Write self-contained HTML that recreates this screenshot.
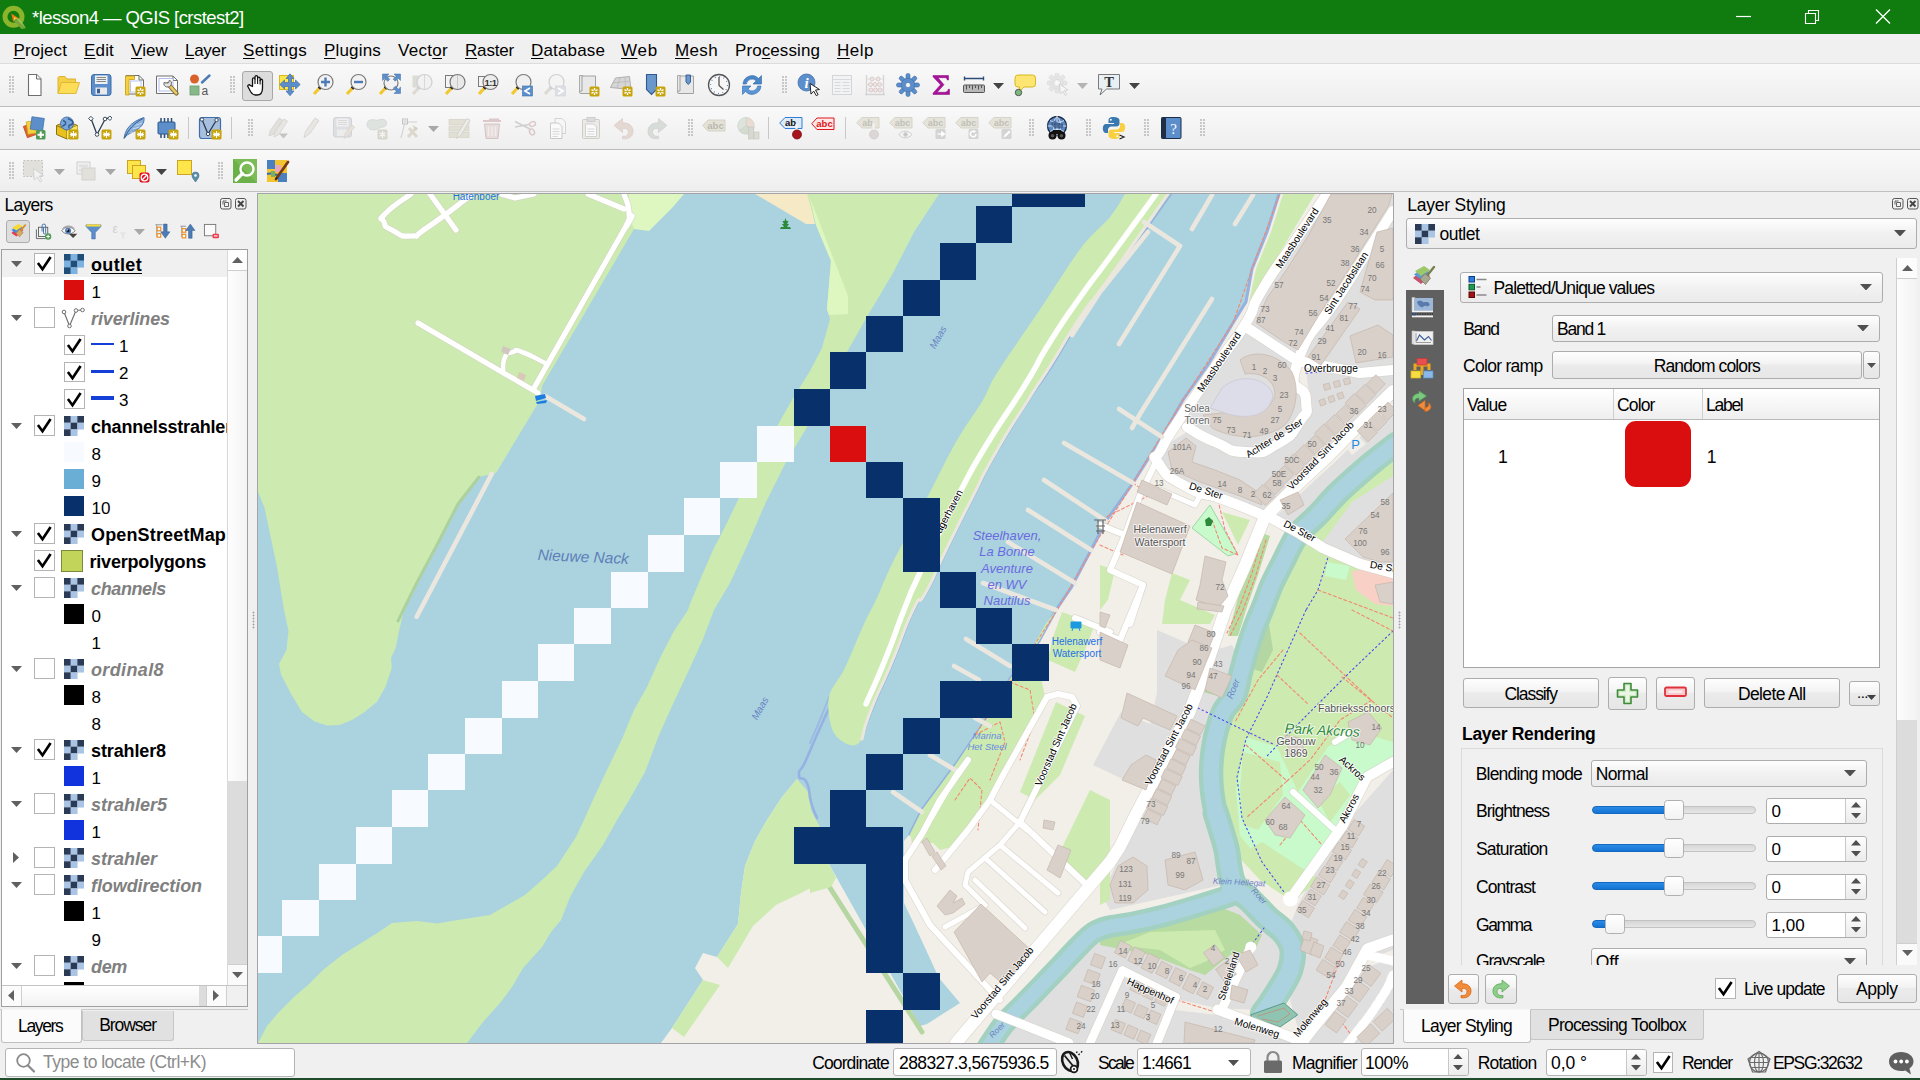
<!DOCTYPE html>
<html lang="en"><head><meta charset="utf-8"><title>*lesson4 — QGIS [crstest2]</title><style>
html,body{margin:0;padding:0;}
body{width:1920px;height:1080px;overflow:hidden;background:#f0f0f0;font-family:"Liberation Sans",sans-serif;position:relative;}
.b{position:absolute;display:block;}
.t{position:absolute;white-space:nowrap;line-height:1;}
svg text{font-family:"Liberation Sans",sans-serif;}
u{text-decoration-thickness:1px;text-underline-offset:2px;}
</style></head><body>
<div class="b " style="left:0px;top:0px;width:1920px;height:34px;background:#107c10;"></div>
<svg class="b" style="left:0;top:0" width="30" height="34" viewBox="0 0 30 34">
<circle cx="13.500" cy="16.700" r="8.500" fill="none" stroke="#8cb52c" stroke-width="4.900"/>
<path d="M14.500 17 L25.800 28.300 L21.500 29 L12.800 19.500 Z" fill="#7aa63c"/>
<path d="M16 18.500 L25.800 28.300 L24 25 L18.500 18 Z" fill="#9cc45c"/>
<path d="M11.300 13.600 L18.800 18.200 L15 18.800 L13.300 22.200 Z" fill="#ee7913"/>
<path d="M14 17.200 L17.500 18.500 L15 18.800 L14.200 20.400 Z" fill="#f4e24a"/>
</svg>
<span class="t" style="left:32px;top:7px;font-size:18.5px;line-height:21px;color:#fff;letter-spacing:-0.565px;">*lesson4 — QGIS [crstest2]</span>
<svg class="b" style="left:1720px;top:0" width="200" height="34" viewBox="1720 0 200 34">
<path d="M1736 16.5h15" stroke="#fff" stroke-width="1.2" fill="none"/>
<path d="M1805.5 13.5h10v10h-10z M1808.500 13.500v-3h10v10h-3" stroke="#fff" stroke-width="1.1" fill="none"/>
<path d="M1876 9.500l14 14M1890 9.500l-14 14" stroke="#fff" stroke-width="1.3" fill="none"/>
</svg>
<div class="b " style="left:0px;top:34px;width:1920px;height:30px;background:#f0f0f0;"></div>
<div class="b " style="left:0px;top:63px;width:1920px;height:1px;background:#dcdcdc;"></div>
<span class="t" style="left:13.5px;top:41px;font-size:17px;line-height:19px;color:#000;letter-spacing:0.084px;"><u>P</u>roject</span>
<span class="t" style="left:84px;top:41px;font-size:17px;line-height:19px;color:#000;letter-spacing:0.177px;"><u>E</u>dit</span>
<span class="t" style="left:131px;top:41px;font-size:17px;line-height:19px;color:#000;letter-spacing:0.115px;"><u>V</u>iew</span>
<span class="t" style="left:185px;top:41px;font-size:17px;line-height:19px;color:#000;letter-spacing:-0.305px;"><u>L</u>ayer</span>
<span class="t" style="left:243px;top:41px;font-size:17px;line-height:19px;color:#000;letter-spacing:0.322px;"><u>S</u>ettings</span>
<span class="t" style="left:324px;top:41px;font-size:17px;line-height:19px;color:#000;letter-spacing:0.178px;"><u>P</u>lugins</span>
<span class="t" style="left:398px;top:41px;font-size:17px;line-height:19px;color:#000;letter-spacing:0.301px;">Vect<u>o</u>r</span>
<span class="t" style="left:465px;top:41px;font-size:17px;line-height:19px;color:#000;letter-spacing:-0.178px;"><u>R</u>aster</span>
<span class="t" style="left:531px;top:41px;font-size:17px;line-height:19px;color:#000;letter-spacing:0.153px;"><u>D</u>atabase</span>
<span class="t" style="left:621px;top:41px;font-size:17px;line-height:19px;color:#000;letter-spacing:0.784px;"><u>W</u>eb</span>
<span class="t" style="left:675px;top:41px;font-size:17px;line-height:19px;color:#000;letter-spacing:0.357px;"><u>M</u>esh</span>
<span class="t" style="left:735px;top:41px;font-size:17px;line-height:19px;color:#000;letter-spacing:0.090px;">Pro<u>c</u>essing</span>
<span class="t" style="left:837px;top:41px;font-size:17px;line-height:19px;color:#000;letter-spacing:0.509px;"><u>H</u>elp</span>
<div class="b " style="left:0px;top:64px;width:1920px;height:43px;background:linear-gradient(#f9f9f9,#eeeeee);"></div>
<div class="b " style="left:0px;top:107px;width:1920px;height:43px;background:linear-gradient(#f9f9f9,#eeeeee);"></div>
<div class="b " style="left:0px;top:150px;width:1920px;height:42px;background:linear-gradient(#f9f9f9,#eeeeee);"></div>
<div class="b " style="left:0px;top:106px;width:1920px;height:1px;background:#bcbcbc;"></div>
<div class="b " style="left:0px;top:149px;width:1920px;height:1px;background:#bcbcbc;"></div>
<div class="b " style="left:0px;top:191px;width:1920px;height:1px;background:#c0c0c0;"></div>
<div class="b " style="left:0px;top:192px;width:1920px;height:2px;background:#f0f0f0;"></div>
<div class="b " style="left:8.5px;top:76px;width:6px;height:18px;background:radial-gradient(circle at 1px 1px,#c6c6c6 0.7px,transparent 1.1px) 0 0/3px 3px;"></div>
<div class="b " style="left:229.5px;top:76px;width:6px;height:18px;background:radial-gradient(circle at 1px 1px,#c6c6c6 0.7px,transparent 1.1px) 0 0/3px 3px;"></div>
<div class="b " style="left:781.5px;top:76px;width:6px;height:18px;background:radial-gradient(circle at 1px 1px,#c6c6c6 0.7px,transparent 1.1px) 0 0/3px 3px;"></div>
<div class="b " style="left:8.5px;top:119px;width:6px;height:18px;background:radial-gradient(circle at 1px 1px,#c6c6c6 0.7px,transparent 1.1px) 0 0/3px 3px;"></div>
<div class="b " style="left:247.5px;top:119px;width:6px;height:18px;background:radial-gradient(circle at 1px 1px,#c6c6c6 0.7px,transparent 1.1px) 0 0/3px 3px;"></div>
<div class="b " style="left:687.5px;top:119px;width:6px;height:18px;background:radial-gradient(circle at 1px 1px,#c6c6c6 0.7px,transparent 1.1px) 0 0/3px 3px;"></div>
<div class="b " style="left:1028.5px;top:119px;width:6px;height:18px;background:radial-gradient(circle at 1px 1px,#c6c6c6 0.7px,transparent 1.1px) 0 0/3px 3px;"></div>
<div class="b " style="left:1085.5px;top:119px;width:6px;height:18px;background:radial-gradient(circle at 1px 1px,#c6c6c6 0.7px,transparent 1.1px) 0 0/3px 3px;"></div>
<div class="b " style="left:1143.5px;top:119px;width:6px;height:18px;background:radial-gradient(circle at 1px 1px,#c6c6c6 0.7px,transparent 1.1px) 0 0/3px 3px;"></div>
<div class="b " style="left:1199.5px;top:119px;width:6px;height:18px;background:radial-gradient(circle at 1px 1px,#c6c6c6 0.7px,transparent 1.1px) 0 0/3px 3px;"></div>
<div class="b " style="left:8.5px;top:162px;width:6px;height:18px;background:radial-gradient(circle at 1px 1px,#c6c6c6 0.7px,transparent 1.1px) 0 0/3px 3px;"></div>
<div class="b " style="left:217.5px;top:162px;width:6px;height:18px;background:radial-gradient(circle at 1px 1px,#c6c6c6 0.7px,transparent 1.1px) 0 0/3px 3px;"></div>
<div class="b " style="left:188px;top:117px;width:1px;height:22px;background:#c8c8c8;"></div>
<div class="b " style="left:231px;top:117px;width:1px;height:22px;background:#c8c8c8;"></div>
<div class="b " style="left:768px;top:117px;width:1px;height:22px;background:#c8c8c8;"></div>
<div class="b " style="left:845px;top:117px;width:1px;height:22px;background:#c8c8c8;"></div>
<div class="b " style="left:241.5px;top:70.5px;width:31px;height:30px;background:#dcdcdc;border:1px solid #a8a8a8;border-radius:3px;box-sizing:border-box;"></div>
<svg class="b" style="left:22px;top:73px;" width="24" height="24" viewBox="0 0 24 24"><path d="M6.500 1.500h8l4.500 4.500v16.500h-12.500z" fill="#fff" stroke="#6e6e6e" stroke-width="1.100" stroke-linejoin="round"/><path d="M14.500 1.500v4.500h4.500" fill="#f4f4f4" stroke="#6e6e6e" stroke-width="1"/></svg>
<svg class="b" style="left:55.5px;top:73px;" width="24" height="24" viewBox="0 0 24 24"><path d="M2 20V4.500l1-1h6l2 2.500h8.500v3.500" fill="#f5cf45" stroke="#d9b434" stroke-width="1"/><path d="M2 20.500l3.500-11h18l-3.500 11z" fill="#fddc58" stroke="#dcb838" stroke-width="1" stroke-linejoin="round"/></svg>
<svg class="b" style="left:88.5px;top:73px;" width="24" height="24" viewBox="0 0 24 24"><rect x="2.500" y="1.500" width="19.500" height="21" rx="2.500" fill="#5b8ecb" stroke="#3f6ea8" stroke-width="1"/><rect x="6" y="2.500" width="12.500" height="8.500" fill="#eef0f2"/><path d="M7.500 4.500h9.500M7.500 6.500h9.500M7.500 8.500h9.500" stroke="#7a7a7a" stroke-width=".9"/><rect x="6.500" y="14.500" width="11.500" height="7" fill="#e9e9e9"/><rect x="8" y="15.800" width="3" height="4.500" fill="#3a5f9a"/></svg>
<svg class="b" style="left:122px;top:73px;" width="24" height="24" viewBox="0 0 24 24"><path d="M4 2.500h13l4.500 4.500v14h-17.500z" fill="#fff" stroke="#6e6e6e"/><path d="M17 2.500v4.500h4.500" fill="none" stroke="#6e6e6e"/><rect x="8.500" y="8" width="10.500" height="11" fill="#fff" stroke="#a8b8e8" stroke-width=".8"/><path d="M3.500 3h9v3.500h-5.500v15.500h-3.500z" fill="#f6d040" stroke="#c9a520" stroke-width=".9"/><rect x="13.500" y="13.500" width="10" height="10" rx="1.500" fill="#c8a40c"/><path d="M18.500 15v7M15.500 16.700l6 3.600M21.500 16.700l-6 3.600" stroke="#fff" stroke-width="1.400"/><circle cx="18.500" cy="18.500" r="1.300" fill="#c8a40c"/></svg>
<svg class="b" style="left:155px;top:73px;" width="24" height="24" viewBox="0 0 24 24"><path d="M1.500 3h16.500l4.500 4.500v13h-21z" fill="#fff" stroke="#6e6e6e"/><path d="M18 3v4.500h4.500" fill="none" stroke="#6e6e6e"/><rect x="4" y="5.500" width="14" height="12.500" fill="#fff" stroke="#a8b8e8" stroke-width=".9"/><path d="M13 11l8.500 9.500" stroke="#7a6a3a" stroke-width="4.200" stroke-linecap="round"/><path d="M13.200 11.200l8 9" stroke="#e8c860" stroke-width="2.600" stroke-linecap="round"/><path d="M9 9.500a3.800 3.800 0 1 0 5.500-2.500l-1 2.800-2.500.2z" fill="#e4e4e4" stroke="#6a6a6a" stroke-width="1"/></svg>
<svg class="b" style="left:187.5px;top:73px;" width="24" height="24" viewBox="0 0 24 24"><circle cx="6.500" cy="6" r="4.500" fill="#d9622b"/><rect x="2" y="13" width="9" height="9" fill="#86b88a" stroke="#6a9c6e" stroke-width=".8"/><path d="M14 9.500l7.500-7" stroke="#4d7bb5" stroke-width="2.400" stroke-linecap="round"/><text x="13.500" y="21.500" style="font-family:'Liberation Sans',sans-serif;font-size:12px;fill:#555">a</text></svg>
<svg class="b" style="left:245px;top:73px;" width="24" height="24" viewBox="0 0 24 24"><path d="M7.500 13.500V6.200c0-1.900 2.500-1.900 2.500 0V4c0-1.900 2.600-1.900 2.600 0v1.500c0-1.800 2.500-1.800 2.500 0V7.500c0-1.700 2.400-1.700 2.400 0V15c0 4-1.500 7-5.500 7h-1.500c-2.500 0-3.800-1.500-5-3.500L3 13.800c-.8-1.500 1-2.800 2.200-1.500z" fill="#fff" stroke="#111" stroke-width="1.300" stroke-linejoin="round"/><path d="M10 6.200V11M12.600 5.500V11M15.100 7V11.500" stroke="#111" stroke-width="1.100"/></svg>
<svg class="b" style="left:278px;top:73px;" width="24" height="24" viewBox="0 0 24 24"><rect x="1.500" y="2.500" width="14" height="14" fill="#fde54a" stroke="#d9b820" stroke-width="1"/><path d="M12 0.800l4 4.700h-2.500v4h4V7l4.700 4.500L17.500 16v-2.500h-4v4.500H16l-4 4.700L8 18h2.500v-4.500h-4V16L1.800 11.500 6.500 7v2.500h4v-4H8z" fill="#5b8ecb" stroke="#3f6ea8" stroke-width=".7"/></svg>
<svg class="b" style="left:310.5px;top:73px;" width="24" height="24" viewBox="0 0 24 24"><path d="M9 14.500L3 21" stroke="#f2c830" stroke-width="3.200" stroke-linecap="butt"/><path d="M9.800 13.700L8 15.600" stroke="#222" stroke-width="3.400"/><circle cx="14.5" cy="9" r="7.5" fill="#f2f2f2" stroke="#7a7a7a" stroke-width="1.200"/><path d="M14.500 4.500v9M10 9h9" stroke="#4d7bb5" stroke-width="2.400"/></svg>
<svg class="b" style="left:343.5px;top:73px;" width="24" height="24" viewBox="0 0 24 24"><path d="M9 14.500L3 21" stroke="#f2c830" stroke-width="3.200" stroke-linecap="butt"/><path d="M9.800 13.700L8 15.600" stroke="#222" stroke-width="3.400"/><circle cx="14.5" cy="9" r="7.5" fill="#f2f2f2" stroke="#7a7a7a" stroke-width="1.200"/><path d="M10 9h9" stroke="#4d7bb5" stroke-width="2.400"/></svg>
<svg class="b" style="left:377px;top:73px;" width="24" height="24" viewBox="0 0 24 24"><path d="M9 14.500L3 21" stroke="#f2c830" stroke-width="3.200" stroke-linecap="butt"/><path d="M9.800 13.700L8 15.600" stroke="#222" stroke-width="3.400"/><circle cx="14" cy="10" r="7" fill="#f2f2f2" stroke="#7a7a7a" stroke-width="1.200"/><path d="M5.500 1h6.500l-2.300 2.300 3 3-2 2-3-3L5.500 7.500zM23.500 1v6.500l-2.300-2.300-3 3-2-2 3-3L17 1zM23.500 20.500H17l2.300-2.300-3-3 2-2 3 3 2.200-2.200z" fill="#5b8ecb" stroke="#3f6ea8" stroke-width=".5"/></svg>
<svg class="b" style="left:410px;top:73px;" width="24" height="24" viewBox="0 0 24 24"><rect x="2.500" y="2.500" width="10" height="12" fill="#dcdcd6"/><path d="M9 14.500L3 21" stroke="#dcdad2" stroke-width="3.200" stroke-linecap="butt"/><path d="M9.800 13.700L8 15.600" stroke="#d0d0d0" stroke-width="3.400"/><circle cx="14.5" cy="9" r="7.5" fill="#f1f1f1" stroke="#cfcfcf" stroke-width="1.200"/><path d="M14.500 2v14" stroke="#d8d8d8"/></svg>
<svg class="b" style="left:443px;top:73px;" width="24" height="24" viewBox="0 0 24 24"><rect x="2.500" y="2.500" width="10" height="12" fill="#f4f4f4" stroke="#7a7a7a"/><path d="M9 14.500L3 21" stroke="#f2c830" stroke-width="3.200" stroke-linecap="butt"/><path d="M9.800 13.700L8 15.600" stroke="#222" stroke-width="3.400"/><circle cx="14.5" cy="9" r="7.5" fill="#e9e9e9" stroke="#7a7a7a" stroke-width="1.200"/><path d="M14.500 2v14" stroke="#c8c8c8"/></svg>
<svg class="b" style="left:475.5px;top:73px;" width="24" height="24" viewBox="0 0 24 24"><rect x="2.500" y="3.500" width="9" height="10" fill="#f4f4f4" stroke="#7a7a7a"/><path d="M9 14.500L3 21" stroke="#f2c830" stroke-width="3.200" stroke-linecap="butt"/><path d="M9.800 13.700L8 15.600" stroke="#222" stroke-width="3.400"/><circle cx="14.5" cy="9" r="7.5" fill="#ececec" stroke="#7a7a7a" stroke-width="1.200"/><text x="14.500" y="12.500" text-anchor="middle" style="font-size:9.500px;font-weight:bold;fill:#333;letter-spacing:-.6px">1:1</text></svg>
<svg class="b" style="left:509px;top:73px;" width="24" height="24" viewBox="0 0 24 24"><path d="M9 14.500L3 21" stroke="#f2c830" stroke-width="3.200" stroke-linecap="butt"/><path d="M9.800 13.700L8 15.600" stroke="#222" stroke-width="3.400"/><circle cx="14.5" cy="9" r="7.5" fill="#f0f0f0" stroke="#7a7a7a" stroke-width="1.200"/><rect x="13.500" y="13" width="10" height="10" fill="#5b8ecb" stroke="#3f6ea8" stroke-width=".6"/><path d="M21 15l-5 3 5 3" fill="none" stroke="#fff" stroke-width="1.700"/></svg>
<svg class="b" style="left:542px;top:73px;" width="24" height="24" viewBox="0 0 24 24"><path d="M9 14.500L3 21" stroke="#dcdad2" stroke-width="3.200" stroke-linecap="butt"/><path d="M9.800 13.700L8 15.600" stroke="#d0d0d0" stroke-width="3.400"/><circle cx="14.5" cy="9" r="7.5" fill="#f4f4f4" stroke="#cfcfcf" stroke-width="1.200"/><rect x="13.500" y="13" width="10" height="10" fill="#dcdfe4" stroke="#cfd2d8" stroke-width=".6"/><path d="M16 15l5 3-5 3" fill="none" stroke="#fff" stroke-width="1.700"/></svg>
<svg class="b" style="left:575.5px;top:73px;" width="24" height="24" viewBox="0 0 24 24"><path d="M3.500 2.500h3v17.500h-3z" fill="#e6e6e6" stroke="#9a9a9a" stroke-width=".8"/><path d="M6 3h13.500v17.500H5c-1.500 0-2-2.500 0-2.500h1z" fill="#e8e8e8" stroke="#9a9a9a" stroke-width=".9"/><rect x="13.500" y="13.500" width="10" height="10" rx="1.500" fill="#c8a40c"/><path d="M18.500 15v7M15.500 16.700l6 3.600M21.500 16.700l-6 3.600" stroke="#fff" stroke-width="1.400"/><circle cx="18.500" cy="18.500" r="1.300" fill="#c8a40c"/></svg>
<svg class="b" style="left:608.5px;top:73px;" width="24" height="24" viewBox="0 0 24 24"><path d="M1.500 14.500L6.500 5l14-1.500 1.500 13z" fill="#d6d6d6" stroke="#a8a8a8" stroke-width=".9"/><path d="M4 9.800l17-1.600M11 4.500l-3 10.500M16 4l.5 12" stroke="#b8b8b8" stroke-width=".8" fill="none"/><rect x="13.500" y="13.500" width="10" height="10" rx="1.500" fill="#c8a40c"/><path d="M18.500 15v7M15.500 16.700l6 3.600M21.500 16.700l-6 3.600" stroke="#fff" stroke-width="1.400"/><circle cx="18.500" cy="18.500" r="1.300" fill="#c8a40c"/></svg>
<svg class="b" style="left:642px;top:73px;" width="24" height="24" viewBox="0 0 24 24"><path d="M5.500 1.500h10v15l-5 5-5-5z" fill="#6a97cc" stroke="#2f5a8f" stroke-width="1.100" transform="translate(-1 0)"/><rect x="13.500" y="13.500" width="10" height="10" rx="1.500" fill="#c8a40c"/><path d="M18.500 15v7M15.500 16.700l6 3.600M21.500 16.700l-6 3.600" stroke="#fff" stroke-width="1.400"/><circle cx="18.500" cy="18.500" r="1.300" fill="#c8a40c"/></svg>
<svg class="b" style="left:674px;top:73px;" width="24" height="24" viewBox="0 0 24 24"><path d="M3.500 2.500h3v17.500h-3z" fill="#e6e6e6" stroke="#9a9a9a" stroke-width=".8"/><path d="M6 3h13.500v17.500H5c-1.500 0-2-2.500 0-2.500h1z" fill="#e8e8e8" stroke="#9a9a9a" stroke-width=".9"/><path d="M12 2h4.500v7l-2.250 2.500L12 9z" fill="#6a97cc" stroke="#2f5a8f" stroke-width=".9"/></svg>
<svg class="b" style="left:707px;top:73px;" width="24" height="24" viewBox="0 0 24 24"><circle cx="12" cy="12" r="10.500" fill="#f7f7f7" stroke="#555" stroke-width="1.300"/><circle cx="12" cy="12" r="8.500" fill="none" stroke="#4d7bb5" stroke-width="1.200" stroke-dasharray=".9 3.550"/><path d="M12 4v8.500l4.500 4" fill="none" stroke="#555" stroke-width="1.300"/></svg>
<svg class="b" style="left:740px;top:73px;" width="24" height="24" viewBox="0 0 24 24"><path d="M3 11a9 9 0 0 1 15.500-5.500L21.500 2.500V11H13l3.200-3.200A5.800 5.800 0 0 0 6.300 11z" fill="#4a86c8" stroke="#2f68a8" stroke-width=".6"/><path d="M21 13a9 9 0 0 1-15.500 5.500L2.500 21.500V13H11l-3.200 3.200A5.800 5.800 0 0 0 17.700 13z" fill="#5a96d8" stroke="#2f68a8" stroke-width=".6"/></svg>
<svg class="b" style="left:797px;top:73px;" width="24" height="24" viewBox="0 0 24 24"><circle cx="9.500" cy="9.500" r="8.500" fill="#5b8ecb" stroke="#3f6ea8" stroke-width=".8"/><text x="9.500" y="15" text-anchor="middle" style="font-family:'Liberation Serif',serif;font-size:15px;font-weight:bold;font-style:italic;fill:#fff">i</text><path d="M13 10.500l9.500 6-4 .6 2.600 4.600-1.800 1-2.600-4.600-2.700 3z" fill="#fff" stroke="#222" stroke-width="1"/></svg>
<svg class="b" style="left:830px;top:73px;" width="24" height="24" viewBox="0 0 24 24"><rect x="2.500" y="2.500" width="19" height="19" fill="#f2f3f4" stroke="#d2d6d8" stroke-width="1"/><path d="M2.500 6.500h19M4.500 9.500h6M12.500 9.500h7M4.500 12.500h6M12.500 12.500h7M4.500 15.500h6M12.500 15.500h7M4.500 18.500h6M12.500 18.500h7" stroke="#d6dadc" stroke-width="1.200"/></svg>
<svg class="b" style="left:863px;top:73px;" width="24" height="24" viewBox="0 0 24 24"><path d="M3.500 2v19M20.500 2v19M2 21.500h20" stroke="#d4d4d4" stroke-width="1.300" fill="none"/><path d="M3.500 6h17M3.500 11.500h17M3.500 17h17" stroke="#dcdcdc" stroke-width=".9"/><g fill="#f1e4e4" stroke="#d6c4c4" stroke-width=".8"><circle cx="9" cy="6" r="2"/><circle cx="15" cy="6" r="2"/><circle cx="7.500" cy="11.500" r="2"/><circle cx="12" cy="11.500" r="2"/><circle cx="16.500" cy="11.500" r="2"/><circle cx="8" cy="17" r="2"/><circle cx="12.500" cy="17" r="2"/><circle cx="17" cy="17" r="2"/></g></svg>
<svg class="b" style="left:896px;top:73px;" width="24" height="24" viewBox="0 0 24 24"><g transform="translate(12 12)"><g fill="#5b8ecb" stroke="#3f6ea8" stroke-width=".6"><rect x="-2" y="-11.500" width="4" height="7" rx="1.800" transform="rotate(0)"/><rect x="-2" y="-11.500" width="4" height="7" rx="1.800" transform="rotate(45)"/><rect x="-2" y="-11.500" width="4" height="7" rx="1.800" transform="rotate(90)"/><rect x="-2" y="-11.500" width="4" height="7" rx="1.800" transform="rotate(135)"/><rect x="-2" y="-11.500" width="4" height="7" rx="1.800" transform="rotate(180)"/><rect x="-2" y="-11.500" width="4" height="7" rx="1.800" transform="rotate(225)"/><rect x="-2" y="-11.500" width="4" height="7" rx="1.800" transform="rotate(270)"/><rect x="-2" y="-11.500" width="4" height="7" rx="1.800" transform="rotate(315)"/><circle r="6.800"/></g><circle r="2.600" fill="#f4f4f4" stroke="#3f6ea8" stroke-width=".6"/></g></svg>
<svg class="b" style="left:929px;top:73px;" width="24" height="24" viewBox="0 0 24 24"><path d="M4 2.500h15.500v4.500h-1.200c-.3-1.800-1.200-2.300-3-2.300H9l6 7-6.800 7.600h7.500c2 0 3-.8 3.500-3h1.300v5.200H4v-1.300l7.500-8.500L4 3.800z" fill="#a8129a" stroke="#8a0a7e" stroke-width=".5"/></svg>
<svg class="b" style="left:962px;top:73px;" width="24" height="24" viewBox="0 0 24 24"><path d="M2 5.500h20M2.500 3.500v4M21.500 3.500v4" stroke="#2a4d7a" stroke-width="1.400" fill="none"/><rect x="1.500" y="12" width="21" height="7.500" rx="1" fill="#b8b8b8" stroke="#555" stroke-width="1"/><path d="M4.500 12.500v4M7.500 12.500v2.500M10.500 12.500v4M13.500 12.500v2.500M16.500 12.500v4M19.500 12.500v2.500" stroke="#444" stroke-width=".9"/></svg>
<svg class="b" style="left:1013px;top:73px;" width="24" height="24" viewBox="0 0 24 24"><path d="M5 2h14.500a3 3 0 0 1 3 3v6a3 3 0 0 1-3 3H11l-4.500 4.500V14H5a3 3 0 0 1-3-3V5a3 3 0 0 1 3-3z" fill="#fce571" stroke="#d9b820" stroke-width="1"/><circle cx="5.500" cy="19.500" r="3.200" fill="#7cb87c" stroke="#555" stroke-width="1"/></svg>
<svg class="b" style="left:1046.5px;top:73px;" width="24" height="24" viewBox="0 0 24 24"><g transform="translate(10 10)" opacity=".55"><g fill="#dadada" stroke="#c4c4c4" stroke-width=".6"><rect x="-2" y="-10" width="4" height="6" rx="1.500" transform="rotate(0)"/><rect x="-2" y="-10" width="4" height="6" rx="1.500" transform="rotate(45)"/><rect x="-2" y="-10" width="4" height="6" rx="1.500" transform="rotate(90)"/><rect x="-2" y="-10" width="4" height="6" rx="1.500" transform="rotate(135)"/><rect x="-2" y="-10" width="4" height="6" rx="1.500" transform="rotate(180)"/><rect x="-2" y="-10" width="4" height="6" rx="1.500" transform="rotate(225)"/><rect x="-2" y="-10" width="4" height="6" rx="1.500" transform="rotate(270)"/><rect x="-2" y="-10" width="4" height="6" rx="1.500" transform="rotate(315)"/><circle r="6.200"/></g><circle r="3.600" fill="#f0f0f0" stroke="#c4c4c4"/><path d="M-1.200 -2l3.500 2-3.500 2z" fill="#fff"/></g><path d="M12.500 11l8.500 6-3.600.4 2.300 4.300-1.500.8-2.300-4.300-2.600 2.700z" fill="#f6f6f6" stroke="#d0d0d0" stroke-width=".9"/></svg>
<svg class="b" style="left:1096.5px;top:73px;" width="24" height="24" viewBox="0 0 24 24"><path d="M1.500 1.500h21v14.500H9.500L3 22l2-6H1.500z" fill="#e8f0f4" stroke="#7a7a7a" stroke-width="1"/><text x="12" y="13.500" text-anchor="middle" style="font-family:'Liberation Serif',serif;font-size:14.500px;font-weight:bold;fill:#333">T</text></svg>
<svg class="b" style="left:22px;top:116px;" width="24" height="24" viewBox="0 0 24 24"><rect x="3" y="8" width="12" height="12" fill="#e0622a" stroke="#b84c1c" stroke-width=".7" transform="rotate(-20 9 14)"/><rect x="5" y="5" width="12.500" height="12.500" fill="#f6d040" stroke="#c9a520" stroke-width=".7" transform="rotate(-8 11 11)"/><rect x="9" y="1.500" width="12.500" height="12.500" fill="#5b8ecb" stroke="#3f6ea8" stroke-width=".7" transform="rotate(8 15 8)"/><rect x="14" y="14" width="9.500" height="9.500" rx="1.500" fill="#4f9a55"/><path d="M18.750 15.500v6.500M15.500 18.750h6.500" stroke="#fff" stroke-width="2"/></svg>
<svg class="b" style="left:55px;top:116px;" width="24" height="24" viewBox="0 0 24 24"><path d="M1.500 9.500L12 5l10.500 4.500v9L12 23 1.500 18.500z" fill="#e8c020" stroke="#8a7210" stroke-width="1"/><path d="M1.500 9.500L12 14l10.500-4.500M12 14v9" fill="none" stroke="#8a7210" stroke-width="1"/><path d="M12 14l10.500-4.500v9L12 23z" fill="#fbe55a"/><circle cx="12" cy="7.500" r="6.500" fill="#7aa6d8" stroke="#3f6ea8" stroke-width=".9"/><path d="M8 4.500c2 .5 3 2 2.500 3.500s-2.500 1-3 2.500M13 2.500c1.500 1.500 3.500 1 4.500 3s-1 3.500-2.500 3.500-1.500 2.500-.5 3.500" fill="none" stroke="#2f5a8f" stroke-width="1.400"/><rect x="13.500" y="13.500" width="10" height="10" rx="1.500" fill="#c8a40c"/><path d="M18.500 15v7M15.500 16.700l6 3.600M21.500 16.700l-6 3.600M15 18.500h7" stroke="#fff" stroke-width="1.100"/></svg>
<svg class="b" style="left:88px;top:116px;" width="24" height="24" viewBox="0 0 24 24"><path d="M3 2.500l6 16L17.500 2.500l5-.5" fill="none" stroke="#2a3d50" stroke-width="1.300"/><g fill="#fff" stroke="#2a3d50" stroke-width=".9"><rect x="1.300" y="1" width="3.200" height="3.200" transform="rotate(45 2.900 2.600)"/><circle cx="9" cy="18.500" r="1.800"/><circle cx="17" cy="3" r="1.800"/><rect x="20.300" y=".6" width="3.200" height="3.200" transform="rotate(45 21.900 2.200)"/></g><rect x="13.500" y="13.500" width="10" height="10" rx="1.500" fill="#c8a40c"/><path d="M18.500 15v7M15.500 16.700l6 3.600M21.500 16.700l-6 3.600M15 18.500h7" stroke="#fff" stroke-width="1.100"/></svg>
<svg class="b" style="left:121.5px;top:116px;" width="24" height="24" viewBox="0 0 24 24"><path d="M2 22.500C3 14 8 6 22 1.500c1 6-4 11-9 13.500-4 2-7 3-9 5z" fill="#8ab0dc" stroke="#3f6ea8" stroke-width=".9"/><path d="M2.500 22C6 14 12 7 21 2.500" fill="none" stroke="#2f5a8f" stroke-width="1"/><path d="M8 17l6-1.500M10.500 13l7-2M13.500 9.500l6.500-2.500" stroke="#dfeaf6" stroke-width=".7"/><rect x="13.500" y="13.500" width="10" height="10" rx="1.500" fill="#c8a40c"/><path d="M18.500 15v7M15.500 16.700l6 3.600M21.500 16.700l-6 3.600M15 18.500h7" stroke="#fff" stroke-width="1.100"/></svg>
<svg class="b" style="left:154.5px;top:116px;" width="24" height="24" viewBox="0 0 24 24"><rect x="3" y="6" width="17" height="12" rx="1" fill="#5b8ecb" stroke="#2f5a8f" stroke-width="1"/><path d="M6 2v4M9.500 2v4M13 2v4M16.500 2v4M6 18v4M9.500 18v4M13 18v4M16.500 18v4" stroke="#2a4d7a" stroke-width="1.500"/><rect x="13.500" y="13.500" width="10" height="10" rx="1.500" fill="#c8a40c"/><path d="M18.500 15v7M15.500 16.700l6 3.600M21.500 16.700l-6 3.600M15 18.500h7" stroke="#fff" stroke-width="1.100"/></svg>
<svg class="b" style="left:197.5px;top:116px;" width="24" height="24" viewBox="0 0 24 24"><rect x="1.500" y="1.500" width="21" height="21" rx="2.500" fill="#a8c0e0" stroke="#3f6ea8" stroke-width="1.200"/><path d="M4 3.500l6 14.500L18.500 4" fill="none" stroke="#2a3d50" stroke-width="1.300"/><g fill="#fff" stroke="#2a3d50" stroke-width=".9"><circle cx="4" cy="3.500" r="1.700"/><circle cx="10" cy="18" r="1.700"/><circle cx="18.500" cy="4" r="1.700"/></g><rect x="13.500" y="13.500" width="10" height="10" rx="1.500" fill="#c8a40c"/><path d="M18.500 15v7M15.500 16.700l6 3.600M21.500 16.700l-6 3.600M15 18.500h7" stroke="#fff" stroke-width="1.100"/></svg>
<svg class="b" style="left:265px;top:116px;" width="24" height="24" viewBox="0 0 24 24"><path d="M4 20l1-5L14 2l3.500 2L9 18z" fill="#e2e0dc" stroke="#d2d0cc" stroke-width=".7"/><path d="M9 21l1-5 9-13 3.500 2L14 18.500z" fill="#e8e6e2" stroke="#d2d0cc" stroke-width=".7"/><path d="M14 17.500h9l-4.500 5z" fill="#c4c4c4"/></svg>
<svg class="b" style="left:297.5px;top:116px;" width="24" height="24" viewBox="0 0 24 24"><path d="M6 21.500l1.500-6L17 2l4 2.500L11.500 18z" fill="#e8e6e2" stroke="#d2d0cc" stroke-width=".8"/></svg>
<svg class="b" style="left:330.5px;top:116px;" width="24" height="24" viewBox="0 0 24 24"><rect x="2.500" y="1.500" width="18" height="19.500" rx="2" fill="#dedfe2" stroke="#cfd0d4" stroke-width=".9"/><rect x="5.500" y="2.500" width="12" height="8" fill="#f0f0f0"/><path d="M7 4.500h9M7 6.500h9M7 8.500h9" stroke="#d4d4d4" stroke-width=".8"/><rect x="6" y="13.500" width="10" height="6.500" fill="#ececec"/><path d="M13 22.500l1-4.500 7-9 2.500 2L16.500 20z" fill="#e8e2da" stroke="#d8d0c6" stroke-width=".7"/></svg>
<svg class="b" style="left:363.5px;top:116px;" width="24" height="24" viewBox="0 0 24 24"><path d="M3 8c0-4 5-5 8-4s7-2 10 0 1.500 7-2 7-5 3-9 3-7-2-7-6z" fill="#dfe3df" stroke="#d0d4d0" stroke-width=".8"/><rect x="13.500" y="13.500" width="10" height="10" rx="1.500" fill="#d8d6cc"/><path d="M18.500 15v7M15.500 16.700l6 3.600M21.500 16.700l-6 3.600" stroke="#f6f6f6" stroke-width="1.300"/></svg>
<svg class="b" style="left:396.5px;top:116px;" width="24" height="24" viewBox="0 0 24 24"><path d="M4 22L8 6h12" fill="none" stroke="#cfcfcf" stroke-width="1"/><rect x="5.500" y="3" width="5" height="5" fill="#f4f4f4" stroke="#c4c4c4"/><path d="M6.500 4l3 3M9.500 4l-3 3" stroke="#c8c8c8" stroke-width=".8"/><path d="M11 21l8-9M12 12l8 9" stroke="#dcd8cc" stroke-width="3"/><path d="M15 9l6 3-2 3z" fill="#d4d0c4"/></svg>
<svg class="b" style="left:447px;top:116px;" width="24" height="24" viewBox="0 0 24 24"><rect x="2" y="3.500" width="20" height="5" fill="#e2e0d4" stroke="#d4d2c6" stroke-width=".7"/><rect x="2" y="10" width="20" height="5" fill="#e2e0d4" stroke="#d4d2c6" stroke-width=".7"/><rect x="2" y="16.500" width="20" height="5" fill="#e2e0d4" stroke="#d4d2c6" stroke-width=".7"/><path d="M9.500 22.500l1.500-5.500L20 2.500l3 2L14 19z" fill="#ecebe8" stroke="#cfcdc8" stroke-width=".8"/></svg>
<svg class="b" style="left:480px;top:116px;" width="24" height="24" viewBox="0 0 24 24"><path d="M4.500 8h15l-1.500 14.500h-12z" fill="#e6dcdc" stroke="#d4c4c4" stroke-width="1"/><path d="M3 5h18M9 3.500h10" stroke="#dcc8c8" stroke-width="2"/><path d="M8.500 10.500v9.500M12 10.500v9.500M15.500 10.500v9.500" stroke="#f2ecec" stroke-width="1.500"/></svg>
<svg class="b" style="left:513px;top:116px;" width="24" height="24" viewBox="0 0 24 24"><path d="M2 5.500L17 13M2 11l14-2.500" stroke="#d0d0d0" stroke-width="1.600"/><ellipse cx="19.500" cy="8" rx="3" ry="2.300" fill="none" stroke="#dcc8c8" stroke-width="1.500" transform="rotate(-20 19.500 8)"/><ellipse cx="19" cy="16" rx="2.300" ry="3" fill="none" stroke="#dcc8c8" stroke-width="1.500" transform="rotate(-30 19 16)"/></svg>
<svg class="b" style="left:546px;top:116px;" width="24" height="24" viewBox="0 0 24 24"><path d="M9 2.500h7l3.500 3.500v11.500H9z" fill="#f6f6f6" stroke="#cfcfcf" stroke-width=".9"/><path d="M4.500 7h8l3.500 3.500V22.500H4.500z" fill="#fafafa" stroke="#c4c4c4" stroke-width=".9"/><path d="M6.500 13h7M6.500 15.500h7M6.500 18h7M6.500 20.500h5" stroke="#d4d4d4" stroke-width=".9"/></svg>
<svg class="b" style="left:579px;top:116px;" width="24" height="24" viewBox="0 0 24 24"><rect x="3.500" y="3.500" width="17" height="19" rx="1" fill="#eceae6" stroke="#cfcdc8" stroke-width="1"/><rect x="8" y="1.500" width="8" height="4" fill="#dcdcdc" stroke="#c8c8c8" stroke-width=".8"/><path d="M6.500 8h8l3 3v9.500h-11z" fill="#fafafa" stroke="#c8c8c8" stroke-width=".8"/><path d="M8.500 13h7M8.500 15.500h7M8.500 18h7" stroke="#d4d4d4" stroke-width=".9"/></svg>
<svg class="b" style="left:612px;top:116px;" width="24" height="24" viewBox="0 0 24 24"><path d="M10.500 2.500L2 9.500l8.500 7v-4c4.500-.5 7 1.500 5.500 5.500-.8 2-2.500 2.500-5.500 2.300v2.400c6.500.7 10.500-2 10.500-7.500S16.500 6.500 10.500 6.800z" fill="#e4d8d2" stroke="#d8ccc6" stroke-width=".7"/></svg>
<svg class="b" style="left:645px;top:116px;" width="24" height="24" viewBox="0 0 24 24"><path d="M13.500 2.500L22 9.500l-8.500 7v-4c-4.500-.5-7 1.500-5.500 5.500.8 2 2.500 2.500 5.500 2.300v2.400C7 23.400 3 20.700 3 15.200S7.500 6.500 13.500 6.800z" fill="#d8dcd8" stroke="#ccd0cc" stroke-width=".7"/></svg>
<svg class="b" style="left:702px;top:116px;" width="24" height="24" viewBox="0 0 24 24"><path d="M6 4 h17 v11 h-17 l-5.300 -5.5 z" fill="#e4e2d6" stroke="#d4d2c6" stroke-width="1"/><text x="13.5" y="12.5" text-anchor="middle" style="font-size:9.5px;font-weight:bold;fill:#b8b8b0">abc</text></svg>
<svg class="b" style="left:736px;top:116px;" width="24" height="24" viewBox="0 0 24 24"><path d="M10 10V1.500a8.500 8.500 0 0 1 7.500 12z" fill="#e8dcd0" stroke="#d4ccc4" stroke-width=".7"/><path d="M10 10l7.500 3.500A8.500 8.500 0 0 1 3 14.500z" fill="#d4dcd0" stroke="#c8ccc4" stroke-width=".7"/><path d="M10 10L3 14.500A8.500 8.500 0 0 1 10 1.500z" fill="#dce4dc" stroke="#ccd4cc" stroke-width=".7"/><rect x="12.500" y="11" width="5" height="12" fill="#d8d8d0" stroke="#c8c8c0" stroke-width=".7"/><rect x="18" y="16" width="5" height="7" fill="#dcdcd4" stroke="#c8c8c0" stroke-width=".7"/></svg>
<svg class="b" style="left:779px;top:116px;" width="24" height="24" viewBox="0 0 24 24"><path d="M6 1.5 h17 v11 h-17 l-5.300 -5.5 z" fill="#ddeaf8" stroke="#2f7fd8" stroke-width="1"/><text x="11.5" y="10" text-anchor="middle" style="font-size:9.5px;font-weight:bold;fill:#111">ab</text><path d="M17.500 8v8" stroke="#f4f4f4" stroke-width="2.200"/><circle cx="18" cy="18.500" r="4.500" fill="#a8141c" stroke="#7a0a10" stroke-width=".8"/></svg>
<svg class="b" style="left:811px;top:116px;" width="24" height="24" viewBox="0 0 24 24"><path d="M6 2 h17 v11.5 h-17 l-5.300 -5.75 z" fill="#fde8e8" stroke="#e0141c" stroke-width="1"/><text x="13.5" y="11" text-anchor="middle" style="font-size:9.5px;font-weight:bold;fill:#e0141c">abc</text></svg>
<svg class="b" style="left:855.5px;top:116px;" width="24" height="24" viewBox="0 0 24 24"><path d="M6 1.5 h17 v10.5 h-17 l-5.300 -5.25 z" fill="#e6e4da" stroke="#d6d4ca" stroke-width="1"/><text x="11.5" y="9.5" text-anchor="middle" style="font-size:9px;font-weight:bold;fill:#c0c0b8">ab</text><path d="M17.500 7v8" stroke="#f4f4f4" stroke-width="2"/><circle cx="18" cy="18.500" r="4.500" fill="#dcd6d6" stroke="#d0caca" stroke-width=".8"/></svg>
<svg class="b" style="left:888.5px;top:116px;" width="24" height="24" viewBox="0 0 24 24"><path d="M6 1.5 h17 v10.5 h-17 l-5.300 -5.25 z" fill="#e6e4da" stroke="#d6d4ca" stroke-width="1"/><text x="13.5" y="9.5" text-anchor="middle" style="font-size:9px;font-weight:bold;fill:#c0c0b8">abc</text><path d="M10 18.500c3-4.500 9-4.500 13 0-4 4.500-10 4.500-13 0z" fill="#f4f4f4" stroke="#c8c8c8" stroke-width=".9"/><circle cx="16.500" cy="18.500" r="2.200" fill="#c8c8c8"/></svg>
<svg class="b" style="left:921.5px;top:116px;" width="24" height="24" viewBox="0 0 24 24"><path d="M6 1.5 h17 v10.5 h-17 l-5.300 -5.25 z" fill="#e6e4da" stroke="#d6d4ca" stroke-width="1"/><text x="13.5" y="9.5" text-anchor="middle" style="font-size:9px;font-weight:bold;fill:#c0c0b8">abc</text><rect x="13.500" y="13" width="10" height="10" rx="1.500" fill="#d4d4d4"/><path d="M15.500 18h4v-2.500l3.500 2.500-3.500 2.500V18z" fill="#fff" stroke="#fff" stroke-width=".8"/></svg>
<svg class="b" style="left:954.5px;top:116px;" width="24" height="24" viewBox="0 0 24 24"><path d="M6 1.5 h17 v10.5 h-17 l-5.300 -5.25 z" fill="#e6e4da" stroke="#d6d4ca" stroke-width="1"/><text x="13.5" y="9.5" text-anchor="middle" style="font-size:9px;font-weight:bold;fill:#c0c0b8">abc</text><rect x="13.500" y="13" width="10" height="10" rx="1.500" fill="#d4d4d4"/><path d="M21 18a2.800 2.800 0 1 1-1.500-2.500" fill="none" stroke="#fff" stroke-width="1.500"/><path d="M18.500 13.800l2.500 1.700-2.500 1.700z" fill="#fff"/></svg>
<svg class="b" style="left:987.5px;top:116px;" width="24" height="24" viewBox="0 0 24 24"><path d="M6 1.5 h17 v10.5 h-17 l-5.300 -5.25 z" fill="#e6e4da" stroke="#d6d4ca" stroke-width="1"/><text x="13.5" y="9.5" text-anchor="middle" style="font-size:9px;font-weight:bold;fill:#c0c0b8">abc</text><rect x="13.500" y="13" width="10" height="10" rx="1.500" fill="#d4d4d4"/><path d="M15.500 21.500l1-2.500 4.500-4.500 1.500 1.500-4.500 4.500z" fill="#fff"/></svg>
<svg class="b" style="left:1044.5px;top:116px;" width="24" height="24" viewBox="0 0 24 24"><circle cx="12" cy="10" r="9.500" fill="#5a86c0" stroke="#1a2d48" stroke-width="1.300"/><path d="M2.500 10h19M12 .5v19M5 4.500c4 2.500 10 2.500 14 0M5 15.500c4-2.500 10-2.500 14 0M12 .5c-5 4.500-5 14.500 0 19M12 .5c5 4.500 5 14.500 0 19" fill="none" stroke="#dfe8f4" stroke-width=".9"/><path d="M6 8c1-3 4-4 6-2s5 0 6 3-2 4-4 3-5 2-8-4z" fill="#2a4a78" opacity=".7"/><circle cx="7.500" cy="19.500" r="4" fill="#111"/><circle cx="16.500" cy="19.500" r="4" fill="#111"/><path d="M8 14l-2 4h12l-2-4z" fill="#111"/><circle cx="7.500" cy="19.800" r="1.800" fill="#555"/><circle cx="16.500" cy="19.800" r="1.800" fill="#555"/></svg>
<svg class="b" style="left:1101.5px;top:116px;" width="24" height="24" viewBox="0 0 24 24"><path d="M11.500 1c-4.500 0-5 1.800-5 3.500V7h5.500v1H4C2 8 .8 10 .8 12.500S2 17 4 17h2v-3c0-2 1.500-3.500 3.500-3.500h5c1.700 0 3-1.300 3-3v-3c0-2-2-3.500-6-3.500z" fill="#3a78b0"/><circle cx="8.800" cy="3.800" r="1" fill="#fff"/><path d="M12.500 23c4.500 0 5-1.800 5-3.500V17H12v-1h8c2 0 3.200-2 3.200-4.500S22 7 20 7h-2v3c0 2-1.500 3.500-3.500 3.500h-5c-1.700 0-3 1.300-3 3v3c0 2 2 3.500 6 3.500z" fill="#f8d040"/><circle cx="15.200" cy="20.200" r="1" fill="#fff"/><path d="M17.500 19l4.500 2-4.500 2" fill="none" stroke="#222" stroke-width="1.200"/></svg>
<svg class="b" style="left:1158.5px;top:116px;" width="24" height="24" viewBox="0 0 24 24"><rect x="2.500" y="1.500" width="19.500" height="21" rx="1" fill="#5b8ecb" stroke="#1a2d48" stroke-width="1"/><rect x="2.500" y="1.500" width="4.500" height="21" fill="#1f2f48"/><text x="14.500" y="17.500" text-anchor="middle" style="font-family:'Liberation Serif',serif;font-size:15px;fill:#fff">?</text></svg>
<svg class="b" style="left:22px;top:159px;" width="24" height="24" viewBox="0 0 24 24"><rect x="1.500" y="1.500" width="19" height="16" fill="#e2e0da" stroke="#c4c4c4" stroke-width="1" stroke-dasharray="2 1.500"/><path d="M11.500 9.500l10 7-4.300.5 2.700 5-1.800 1-2.700-5-3.200 3z" fill="#f2f2f2" stroke="#cfcfcf" stroke-width=".9"/></svg>
<svg class="b" style="left:74px;top:159px;" width="24" height="24" viewBox="0 0 24 24"><rect x="3" y="3" width="13" height="12" fill="#f0f0f0" stroke="#d0d0d0"/><rect x="5" y="5.500" width="9" height="2.500" fill="#e0e0e0"/><rect x="5" y="10" width="9" height="2.500" fill="#e0e0e0"/><rect x="8" y="9" width="13" height="12" fill="#e2e0da" stroke="#d4d2cc"/></svg>
<svg class="b" style="left:126px;top:159px;" width="24" height="24" viewBox="0 0 24 24"><rect x="1.500" y="1.500" width="13" height="13" fill="#fde54a" stroke="#c9a520" stroke-width="1"/><rect x="6.500" y="6.500" width="13" height="13" fill="#fde54a" stroke="#c9a520" stroke-width="1"/><rect x="13.500" y="13.500" width="10" height="10" rx="2" fill="#e01424"/><circle cx="18.500" cy="18.500" r="3.300" fill="none" stroke="#fff" stroke-width="1.300"/><path d="M16.300 20.700l4.400-4.400" stroke="#fff" stroke-width="1.300"/></svg>
<svg class="b" style="left:176px;top:159px;" width="24" height="24" viewBox="0 0 24 24"><rect x="1.500" y="1.500" width="14" height="14" fill="#fde54a" stroke="#c9a520" stroke-width="1"/><path d="M19.500 23c-2-3-3.500-4.500-3.500-6.500a3.500 3.500 0 0 1 7 0c0 2-1.500 3.500-3.500 6.500z" fill="#5b8ea8" stroke="#3f6e88" stroke-width=".6"/><circle cx="19.500" cy="16.500" r="1.300" fill="#fff"/></svg>
<svg class="b" style="left:232.5px;top:159px;" width="24" height="24" viewBox="0 0 24 24"><rect x="0" y="0" width="24" height="24" fill="#6cb049"/><path d="M0 0h24v24z" fill="#86c460" opacity=".6"/><circle cx="14" cy="10" r="6.500" fill="none" stroke="#fff" stroke-width="2.400"/><path d="M9.500 14.500L3 21" stroke="#fff" stroke-width="3.200" stroke-linecap="round"/></svg>
<svg class="b" style="left:265.5px;top:159px;" width="24" height="24" viewBox="0 0 24 24"><rect x="1" y="1" width="20" height="22" fill="#f4c430"/><path d="M1 1h8v9H1zM12 14h9v9h-9z" fill="#4a7fc0"/><path d="M9 6h6v7H9z" fill="#e8a8c0"/><path d="M1 15c6-2 8 2 13 1" stroke="#3a6ab0" stroke-width="2" fill="none"/><path d="M5 12h4v6H5z" fill="#78b060"/><path d="M10 20L22 3" stroke="#7a3a10" stroke-width="2.800" stroke-linecap="round"/><path d="M9 21l3-1.500-1.500-1.500z" fill="#222"/></svg>
<svg class="b" style="left:992.5px;top:82.5px" width="11" height="6"><path d="M0 0H11L5.5 6Z" fill="#444"/></svg>
<svg class="b" style="left:1076.5px;top:82.5px" width="11" height="6"><path d="M0 0H11L5.5 6Z" fill="#b4b4b4"/></svg>
<svg class="b" style="left:1128.5px;top:82.5px" width="11" height="6"><path d="M0 0H11L5.5 6Z" fill="#444"/></svg>
<svg class="b" style="left:427.5px;top:125.5px" width="11" height="6"><path d="M0 0H11L5.5 6Z" fill="#a8a8a8"/></svg>
<svg class="b" style="left:54px;top:168.5px" width="11" height="6"><path d="M0 0H11L5.5 6Z" fill="#a8a8a8"/></svg>
<svg class="b" style="left:105px;top:168.5px" width="11" height="6"><path d="M0 0H11L5.5 6Z" fill="#a8a8a8"/></svg>
<svg class="b" style="left:156px;top:168.5px" width="11" height="6"><path d="M0 0H11L5.5 6Z" fill="#444"/></svg>
<div class="b " style="left:0px;top:194px;width:257px;height:852px;background:#f0f0f0;"></div>
<span class="t" style="left:4.5px;top:195px;font-size:17.5px;line-height:20px;color:#000;letter-spacing:-0.738px;">Layers</span>
<svg class="b" style="left:220px;top:198px" width="28" height="12" viewBox="0 0 28 12">
<rect x="0.5" y="0.5" width="10.500" height="10.500" rx="2" fill="none" stroke="#555" stroke-width="1"/>
<path d="M4.500 4.500h4v4h-4z M3 6.500v-3.500h3.500" fill="none" stroke="#555" stroke-width="0.9"/>
<rect x="15.5" y="0.5" width="10.500" height="10.500" rx="2" fill="none" stroke="#555" stroke-width="1"/>
<path d="M18 3l5.500 5.500M23.500 3l-5.500 5.500" stroke="#444" stroke-width="1.900" fill="none"/>
</svg>
<div class="b " style="left:6px;top:220px;width:24px;height:23px;background:#dedede;border:1px solid #adadad;border-radius:3px;box-sizing:border-box;"></div>
<div class="b " style="left:0.5px;top:249px;width:247px;height:757.5px;background:#fff;border:1px solid #a0a0a0;box-sizing:border-box;"></div>
<div class="b" style="left:0;top:250px;width:226.5px;height:735px;overflow:hidden"><div style="position:absolute;left:0;top:-250px"><div class="b " style="left:1.5px;top:250px;width:225px;height:27px;background:#f0f0f0;"></div><svg class="b" style="left:11px;top:260.5px" width="11" height="6"><path d="M0 0H11L5.5 6Z" fill="#606060"/></svg><div class="b " style="left:34.2px;top:253.3px;width:20.5px;height:20.5px;background:#fff;border:1px solid #b4b4b4;box-sizing:border-box;"></div><svg class="b" style="left:34.2px;top:253.3px" width="20.5" height="20.5" viewBox="0 0 21 21"><path d="M4 10.300 L8.700 16.600 L17 4" fill="none" stroke="#000" stroke-width="2.700" stroke-linejoin="miter"/></svg><svg class="b" style="left:64px;top:254px" width="20" height="20"><rect x="0.00" y="0.00" width="6.87" height="6.87" fill="#1f4e79"/><rect x="6.67" y="0.00" width="6.87" height="6.87" fill="#7db1e0"/><rect x="13.33" y="0.00" width="6.87" height="6.87" fill="#1f4e79"/><rect x="0.00" y="6.67" width="6.87" height="6.87" fill="#7db1e0"/><rect x="6.67" y="6.67" width="6.87" height="6.87" fill="#1f4e79"/><rect x="13.33" y="6.67" width="6.87" height="6.87" fill="#7db1e0"/><rect x="0.00" y="13.33" width="6.87" height="6.87" fill="#1f4e79"/><rect x="6.67" y="13.33" width="6.87" height="6.87" fill="#7db1e0"/></svg><span class="t" style="left:91px;top:255px;font-size:18px;line-height:20px;color:#000;font-weight:bold;letter-spacing:0.335px;white-space:nowrap;text-decoration:underline;text-decoration-thickness:1px;text-underline-offset:1.5px;">outlet</span><div class="b " style="left:64px;top:280px;width:20px;height:20px;background:#db0e0e;"></div><span class="t" style="left:91.5px;top:283px;font-size:17px;line-height:19px;color:#000;">1</span><svg class="b" style="left:11px;top:314.5px" width="11" height="6"><path d="M0 0H11L5.5 6Z" fill="#606060"/></svg><div class="b " style="left:34.2px;top:307.3px;width:20.5px;height:20.5px;background:#fff;border:1px solid #b4b4b4;box-sizing:border-box;"></div><svg class="b" style="left:61px;top:306.5px" width="25" height="22" viewBox="0 0 25 22"><path d="M3 5 L8.500 19 L15 3.500 L21 3" fill="none" stroke="#707070" stroke-width="1.2"/><circle cx="3" cy="5" r="1.800" fill="#fff" stroke="#707070"/><circle cx="8.500" cy="19" r="1.800" fill="#fff" stroke="#707070"/><circle cx="15" cy="3.500" r="1.800" fill="#fff" stroke="#707070"/><circle cx="21.500" cy="3" r="1.800" fill="#fff" stroke="#707070"/></svg><span class="t" style="left:91px;top:309px;font-size:18px;line-height:20px;color:#808080;font-weight:bold;font-style:italic;letter-spacing:-0.105px;white-space:nowrap;">riverlines</span><div class="b " style="left:64px;top:334.5px;width:20.5px;height:20.5px;background:#fff;border:1px solid #b4b4b4;box-sizing:border-box;"></div><svg class="b" style="left:64px;top:334.5px" width="20.5" height="20.5" viewBox="0 0 21 21"><path d="M4 10.300 L8.700 16.600 L17 4" fill="none" stroke="#000" stroke-width="2.700" stroke-linejoin="miter"/></svg><div class="b " style="left:91px;top:343.3px;width:23px;height:1.8px;background:#1540d8;"></div><span class="t" style="left:119px;top:337px;font-size:17px;line-height:19px;color:#000;">1</span><div class="b " style="left:64px;top:361.5px;width:20.5px;height:20.5px;background:#fff;border:1px solid #b4b4b4;box-sizing:border-box;"></div><svg class="b" style="left:64px;top:361.5px" width="20.5" height="20.5" viewBox="0 0 21 21"><path d="M4 10.300 L8.700 16.600 L17 4" fill="none" stroke="#000" stroke-width="2.700" stroke-linejoin="miter"/></svg><div class="b " style="left:91px;top:369.85px;width:23px;height:2.7px;background:#1540d8;"></div><span class="t" style="left:119px;top:364px;font-size:17px;line-height:19px;color:#000;">2</span><div class="b " style="left:64px;top:388.5px;width:20.5px;height:20.5px;background:#fff;border:1px solid #b4b4b4;box-sizing:border-box;"></div><svg class="b" style="left:64px;top:388.5px" width="20.5" height="20.5" viewBox="0 0 21 21"><path d="M4 10.300 L8.700 16.600 L17 4" fill="none" stroke="#000" stroke-width="2.700" stroke-linejoin="miter"/></svg><div class="b " style="left:91px;top:396.05px;width:23px;height:4.3px;background:#1540d8;"></div><span class="t" style="left:119px;top:391px;font-size:17px;line-height:19px;color:#000;">3</span><svg class="b" style="left:11px;top:422.5px" width="11" height="6"><path d="M0 0H11L5.5 6Z" fill="#606060"/></svg><div class="b " style="left:34.2px;top:415.3px;width:20.5px;height:20.5px;background:#fff;border:1px solid #b4b4b4;box-sizing:border-box;"></div><svg class="b" style="left:34.2px;top:415.3px" width="20.5" height="20.5" viewBox="0 0 21 21"><path d="M4 10.300 L8.700 16.600 L17 4" fill="none" stroke="#000" stroke-width="2.700" stroke-linejoin="miter"/></svg><svg class="b" style="left:64px;top:416px" width="20" height="20"><rect x="0.00" y="0.00" width="6.87" height="6.87" fill="#2b3a55"/><rect x="6.67" y="0.00" width="6.87" height="6.87" fill="#a9c4e4"/><rect x="13.33" y="0.00" width="6.87" height="6.87" fill="#2b3a55"/><rect x="0.00" y="6.67" width="6.87" height="6.87" fill="#a9c4e4"/><rect x="6.67" y="6.67" width="6.87" height="6.87" fill="#2b3a55"/><rect x="13.33" y="6.67" width="6.87" height="6.87" fill="#a9c4e4"/><rect x="0.00" y="13.33" width="6.87" height="6.87" fill="#2b3a55"/><rect x="6.67" y="13.33" width="6.87" height="6.87" fill="#a9c4e4"/></svg><span class="t" style="left:91px;top:417px;font-size:18px;line-height:20px;color:#000;font-weight:bold;letter-spacing:-0.192px;white-space:nowrap;">channelsstrahler</span><div class="b " style="left:64px;top:442px;width:20px;height:20px;background:#f7fbff;"></div><span class="t" style="left:91.5px;top:445px;font-size:17px;line-height:19px;color:#000;">8</span><div class="b " style="left:64px;top:469px;width:20px;height:20px;background:#6aaed6;"></div><span class="t" style="left:91.5px;top:472px;font-size:17px;line-height:19px;color:#000;">9</span><div class="b " style="left:64px;top:496px;width:20px;height:20px;background:#08306b;"></div><span class="t" style="left:91.5px;top:499px;font-size:17px;line-height:19px;color:#000;">10</span><svg class="b" style="left:11px;top:530.5px" width="11" height="6"><path d="M0 0H11L5.5 6Z" fill="#606060"/></svg><div class="b " style="left:34.2px;top:523.3px;width:20.5px;height:20.5px;background:#fff;border:1px solid #b4b4b4;box-sizing:border-box;"></div><svg class="b" style="left:34.2px;top:523.3px" width="20.5" height="20.5" viewBox="0 0 21 21"><path d="M4 10.300 L8.700 16.600 L17 4" fill="none" stroke="#000" stroke-width="2.700" stroke-linejoin="miter"/></svg><svg class="b" style="left:64px;top:524px" width="20" height="20"><rect x="0.00" y="0.00" width="6.87" height="6.87" fill="#2b3a55"/><rect x="6.67" y="0.00" width="6.87" height="6.87" fill="#a9c4e4"/><rect x="13.33" y="0.00" width="6.87" height="6.87" fill="#2b3a55"/><rect x="0.00" y="6.67" width="6.87" height="6.87" fill="#a9c4e4"/><rect x="6.67" y="6.67" width="6.87" height="6.87" fill="#2b3a55"/><rect x="13.33" y="6.67" width="6.87" height="6.87" fill="#a9c4e4"/><rect x="0.00" y="13.33" width="6.87" height="6.87" fill="#2b3a55"/><rect x="6.67" y="13.33" width="6.87" height="6.87" fill="#a9c4e4"/></svg><span class="t" style="left:91px;top:525px;font-size:18px;line-height:20px;color:#000;font-weight:bold;letter-spacing:0.152px;white-space:nowrap;">OpenStreetMap</span><div class="b " style="left:34.2px;top:550.3px;width:20.5px;height:20.5px;background:#fff;border:1px solid #b4b4b4;box-sizing:border-box;"></div><svg class="b" style="left:34.2px;top:550.3px" width="20.5" height="20.5" viewBox="0 0 21 21"><path d="M4 10.300 L8.700 16.600 L17 4" fill="none" stroke="#000" stroke-width="2.700" stroke-linejoin="miter"/></svg><div class="b " style="left:61px;top:550px;width:22px;height:22px;background:#c3d45a;border:1px solid #7a8a3a;box-sizing:border-box;"></div><span class="t" style="left:89.5px;top:552px;font-size:18px;line-height:20px;color:#000;font-weight:bold;letter-spacing:-0.195px;white-space:nowrap;">riverpolygons</span><svg class="b" style="left:11px;top:584.5px" width="11" height="6"><path d="M0 0H11L5.5 6Z" fill="#606060"/></svg><div class="b " style="left:34.2px;top:577.3px;width:20.5px;height:20.5px;background:#fff;border:1px solid #b4b4b4;box-sizing:border-box;"></div><svg class="b" style="left:64px;top:578px" width="20" height="20"><rect x="0.00" y="0.00" width="6.87" height="6.87" fill="#2b3a55"/><rect x="6.67" y="0.00" width="6.87" height="6.87" fill="#a9c4e4"/><rect x="13.33" y="0.00" width="6.87" height="6.87" fill="#2b3a55"/><rect x="0.00" y="6.67" width="6.87" height="6.87" fill="#a9c4e4"/><rect x="6.67" y="6.67" width="6.87" height="6.87" fill="#2b3a55"/><rect x="13.33" y="6.67" width="6.87" height="6.87" fill="#a9c4e4"/><rect x="0.00" y="13.33" width="6.87" height="6.87" fill="#2b3a55"/><rect x="6.67" y="13.33" width="6.87" height="6.87" fill="#a9c4e4"/></svg><span class="t" style="left:91px;top:579px;font-size:18px;line-height:20px;color:#808080;font-weight:bold;font-style:italic;letter-spacing:-0.379px;white-space:nowrap;">channels</span><div class="b " style="left:64px;top:604px;width:20px;height:20px;background:#000;"></div><span class="t" style="left:91.5px;top:607px;font-size:17px;line-height:19px;color:#000;">0</span><span class="t" style="left:91.5px;top:634px;font-size:17px;line-height:19px;color:#000;">1</span><svg class="b" style="left:11px;top:665.5px" width="11" height="6"><path d="M0 0H11L5.5 6Z" fill="#606060"/></svg><div class="b " style="left:34.2px;top:658.3px;width:20.5px;height:20.5px;background:#fff;border:1px solid #b4b4b4;box-sizing:border-box;"></div><svg class="b" style="left:64px;top:659px" width="20" height="20"><rect x="0.00" y="0.00" width="6.87" height="6.87" fill="#2b3a55"/><rect x="6.67" y="0.00" width="6.87" height="6.87" fill="#a9c4e4"/><rect x="13.33" y="0.00" width="6.87" height="6.87" fill="#2b3a55"/><rect x="0.00" y="6.67" width="6.87" height="6.87" fill="#a9c4e4"/><rect x="6.67" y="6.67" width="6.87" height="6.87" fill="#2b3a55"/><rect x="13.33" y="6.67" width="6.87" height="6.87" fill="#a9c4e4"/><rect x="0.00" y="13.33" width="6.87" height="6.87" fill="#2b3a55"/><rect x="6.67" y="13.33" width="6.87" height="6.87" fill="#a9c4e4"/></svg><span class="t" style="left:91px;top:660px;font-size:18px;line-height:20px;color:#808080;font-weight:bold;font-style:italic;letter-spacing:0.373px;white-space:nowrap;">ordinal8</span><div class="b " style="left:64px;top:685px;width:20px;height:20px;background:#000;"></div><span class="t" style="left:91.5px;top:688px;font-size:17px;line-height:19px;color:#000;">8</span><span class="t" style="left:91.5px;top:715px;font-size:17px;line-height:19px;color:#000;">8</span><svg class="b" style="left:11px;top:746.5px" width="11" height="6"><path d="M0 0H11L5.5 6Z" fill="#606060"/></svg><div class="b " style="left:34.2px;top:739.3px;width:20.5px;height:20.5px;background:#fff;border:1px solid #b4b4b4;box-sizing:border-box;"></div><svg class="b" style="left:34.2px;top:739.3px" width="20.5" height="20.5" viewBox="0 0 21 21"><path d="M4 10.300 L8.700 16.600 L17 4" fill="none" stroke="#000" stroke-width="2.700" stroke-linejoin="miter"/></svg><svg class="b" style="left:64px;top:740px" width="20" height="20"><rect x="0.00" y="0.00" width="6.87" height="6.87" fill="#2b3a55"/><rect x="6.67" y="0.00" width="6.87" height="6.87" fill="#a9c4e4"/><rect x="13.33" y="0.00" width="6.87" height="6.87" fill="#2b3a55"/><rect x="0.00" y="6.67" width="6.87" height="6.87" fill="#a9c4e4"/><rect x="6.67" y="6.67" width="6.87" height="6.87" fill="#2b3a55"/><rect x="13.33" y="6.67" width="6.87" height="6.87" fill="#a9c4e4"/><rect x="0.00" y="13.33" width="6.87" height="6.87" fill="#2b3a55"/><rect x="6.67" y="13.33" width="6.87" height="6.87" fill="#a9c4e4"/></svg><span class="t" style="left:91px;top:741px;font-size:18px;line-height:20px;color:#000;font-weight:bold;letter-spacing:-0.116px;white-space:nowrap;">strahler8</span><div class="b " style="left:64px;top:766px;width:20px;height:20px;background:#1133dd;"></div><span class="t" style="left:91.5px;top:769px;font-size:17px;line-height:19px;color:#000;">1</span><svg class="b" style="left:11px;top:800.5px" width="11" height="6"><path d="M0 0H11L5.5 6Z" fill="#606060"/></svg><div class="b " style="left:34.2px;top:793.3px;width:20.5px;height:20.5px;background:#fff;border:1px solid #b4b4b4;box-sizing:border-box;"></div><svg class="b" style="left:64px;top:794px" width="20" height="20"><rect x="0.00" y="0.00" width="6.87" height="6.87" fill="#2b3a55"/><rect x="6.67" y="0.00" width="6.87" height="6.87" fill="#a9c4e4"/><rect x="13.33" y="0.00" width="6.87" height="6.87" fill="#2b3a55"/><rect x="0.00" y="6.67" width="6.87" height="6.87" fill="#a9c4e4"/><rect x="6.67" y="6.67" width="6.87" height="6.87" fill="#2b3a55"/><rect x="13.33" y="6.67" width="6.87" height="6.87" fill="#a9c4e4"/><rect x="0.00" y="13.33" width="6.87" height="6.87" fill="#2b3a55"/><rect x="6.67" y="13.33" width="6.87" height="6.87" fill="#a9c4e4"/></svg><span class="t" style="left:91px;top:795px;font-size:18px;line-height:20px;color:#808080;font-weight:bold;font-style:italic;letter-spacing:-0.005px;white-space:nowrap;">strahler5</span><div class="b " style="left:64px;top:820px;width:20px;height:20px;background:#1133dd;"></div><span class="t" style="left:91.5px;top:823px;font-size:17px;line-height:19px;color:#000;">1</span><svg class="b" style="left:13px;top:852px" width="6" height="11"><path d="M0 0V11L6 5.5Z" fill="#606060"/></svg><div class="b " style="left:34.2px;top:847.3px;width:20.5px;height:20.5px;background:#fff;border:1px solid #b4b4b4;box-sizing:border-box;"></div><svg class="b" style="left:64px;top:848px" width="20" height="20"><rect x="0.00" y="0.00" width="6.87" height="6.87" fill="#2b3a55"/><rect x="6.67" y="0.00" width="6.87" height="6.87" fill="#a9c4e4"/><rect x="13.33" y="0.00" width="6.87" height="6.87" fill="#2b3a55"/><rect x="0.00" y="6.67" width="6.87" height="6.87" fill="#a9c4e4"/><rect x="6.67" y="6.67" width="6.87" height="6.87" fill="#2b3a55"/><rect x="13.33" y="6.67" width="6.87" height="6.87" fill="#a9c4e4"/><rect x="0.00" y="13.33" width="6.87" height="6.87" fill="#2b3a55"/><rect x="6.67" y="13.33" width="6.87" height="6.87" fill="#a9c4e4"/></svg><span class="t" style="left:91px;top:849px;font-size:18px;line-height:20px;color:#808080;font-weight:bold;font-style:italic;letter-spacing:-0.004px;white-space:nowrap;">strahler</span><svg class="b" style="left:11px;top:881.5px" width="11" height="6"><path d="M0 0H11L5.5 6Z" fill="#606060"/></svg><div class="b " style="left:34.2px;top:874.3px;width:20.5px;height:20.5px;background:#fff;border:1px solid #b4b4b4;box-sizing:border-box;"></div><svg class="b" style="left:64px;top:875px" width="20" height="20"><rect x="0.00" y="0.00" width="6.87" height="6.87" fill="#2b3a55"/><rect x="6.67" y="0.00" width="6.87" height="6.87" fill="#a9c4e4"/><rect x="13.33" y="0.00" width="6.87" height="6.87" fill="#2b3a55"/><rect x="0.00" y="6.67" width="6.87" height="6.87" fill="#a9c4e4"/><rect x="6.67" y="6.67" width="6.87" height="6.87" fill="#2b3a55"/><rect x="13.33" y="6.67" width="6.87" height="6.87" fill="#a9c4e4"/><rect x="0.00" y="13.33" width="6.87" height="6.87" fill="#2b3a55"/><rect x="6.67" y="13.33" width="6.87" height="6.87" fill="#a9c4e4"/></svg><span class="t" style="left:91px;top:876px;font-size:18px;line-height:20px;color:#808080;font-weight:bold;font-style:italic;letter-spacing:-0.077px;white-space:nowrap;">flowdirection</span><div class="b " style="left:64px;top:901px;width:20px;height:20px;background:#000;"></div><span class="t" style="left:91.5px;top:904px;font-size:17px;line-height:19px;color:#000;">1</span><span class="t" style="left:91.5px;top:931px;font-size:17px;line-height:19px;color:#000;">9</span><svg class="b" style="left:11px;top:962.5px" width="11" height="6"><path d="M0 0H11L5.5 6Z" fill="#606060"/></svg><div class="b " style="left:34.2px;top:955.3px;width:20.5px;height:20.5px;background:#fff;border:1px solid #b4b4b4;box-sizing:border-box;"></div><svg class="b" style="left:64px;top:956px" width="20" height="20"><rect x="0.00" y="0.00" width="6.87" height="6.87" fill="#2b3a55"/><rect x="6.67" y="0.00" width="6.87" height="6.87" fill="#a9c4e4"/><rect x="13.33" y="0.00" width="6.87" height="6.87" fill="#2b3a55"/><rect x="0.00" y="6.67" width="6.87" height="6.87" fill="#a9c4e4"/><rect x="6.67" y="6.67" width="6.87" height="6.87" fill="#2b3a55"/><rect x="13.33" y="6.67" width="6.87" height="6.87" fill="#a9c4e4"/><rect x="0.00" y="13.33" width="6.87" height="6.87" fill="#2b3a55"/><rect x="6.67" y="13.33" width="6.87" height="6.87" fill="#a9c4e4"/></svg><span class="t" style="left:91px;top:957px;font-size:18px;line-height:20px;color:#808080;font-weight:bold;font-style:italic;letter-spacing:-0.337px;white-space:nowrap;">dem</span><div class="b " style="left:64px;top:982px;width:20px;height:20px;background:#000;"></div><span class="t" style="left:91.5px;top:985px;font-size:17px;line-height:19px;color:#000;"></span></div></div>
<div class="b " style="left:226.5px;top:250px;width:20.5px;height:735px;background:#f0f0f0;border-left:1px solid #d9d9d9;box-sizing:border-box;"></div>
<div class="b " style="left:227.5px;top:250px;width:19.5px;height:20.5px;background:#fdfdfd;border-bottom:1px solid #cfcfcf;box-sizing:border-box;"></div>
<svg class="b" style="left:231.5px;top:256.5px" width="11" height="6"><path d="M0 6H11L5.5 0Z" fill="#606060"/></svg>
<div class="b " style="left:227.5px;top:270.5px;width:19.5px;height:511px;background:linear-gradient(90deg,#fdfdfd,#f4f4f4);"></div>
<div class="b " style="left:227.5px;top:781px;width:19.5px;height:183px;background:#dcdcdc;"></div>
<div class="b " style="left:227.5px;top:964px;width:19.5px;height:21px;background:#fafafa;border-top:1px solid #cfcfcf;box-sizing:border-box;"></div>
<svg class="b" style="left:231.5px;top:971.5px" width="11" height="6"><path d="M0 0H11L5.5 6Z" fill="#606060"/></svg>
<div class="b " style="left:1.5px;top:985px;width:245.5px;height:21px;background:#f0f0f0;border-top:1px solid #c4c4c4;box-sizing:border-box;"></div>
<div class="b " style="left:1.5px;top:986px;width:20px;height:19.5px;background:#fbfbfb;border-right:1px solid #cfcfcf;box-sizing:border-box;"></div>
<svg class="b" style="left:8px;top:990px" width="6" height="11"><path d="M6 0V11L0 5.5Z" fill="#606060"/></svg>
<div class="b " style="left:21.5px;top:986px;width:177px;height:19.5px;background:linear-gradient(#ffffff,#f2f2f2);"></div>
<div class="b " style="left:198.5px;top:986px;width:7px;height:19.5px;background:#dcdcdc;"></div>
<div class="b " style="left:205.5px;top:986px;width:21px;height:19.5px;background:#fbfbfb;border-left:1px solid #cfcfcf;border-right:1px solid #cfcfcf;box-sizing:border-box;"></div>
<svg class="b" style="left:212.5px;top:990px" width="6" height="11"><path d="M0 0V11L6 5.5Z" fill="#606060"/></svg>
<div class="b " style="left:0px;top:1009px;width:248px;height:1px;background:#c8c8c8;"></div>
<div class="b " style="left:82px;top:1010.5px;width:92px;height:30px;background:#e1e1e1;border:1px solid #c6c6c6;border-top:none;border-radius:0 0 3px 3px;box-sizing:border-box;"></div>
<div class="b " style="left:1px;top:1009px;width:80.5px;height:33.5px;background:#fbfbfb;border:1px solid #c0c0c0;border-top:1px solid #f6f6f6;border-radius:0 0 3px 3px;box-sizing:border-box;"></div>
<span class="t" style="left:18px;top:1016px;font-size:17.5px;line-height:20px;color:#000;letter-spacing:-1.338px;">Layers</span>
<span class="t" style="left:99.2px;top:1015px;font-size:17.5px;line-height:20px;color:#000;letter-spacing:-1.054px;">Browser</span>
<svg class="b" id="map" style="left:258px;top:194px" width="1135" height="849" viewBox="258 194 1135 849">
<rect x="258" y="194" width="1135" height="849" fill="#aad3df"/>
<polygon points="1279,194 1267,232 1252,269 1246,302 1233,323 1208,365 1183,400 1162,437 1133,483 1106,521 1100,533 1071,588 1056,610 1039,641 1010,679 987,718 956,764 922,810 910,834 904,841 904,903 914,924 939,978 960,1003 927,1024 920,1026 866,930 829,864 812,830 797,779 782,797 767,820 755,841 745,866 741,893 738,924 717,957 703,953 695,968 703,980 672,1028 661,1043 1393,1043 1393,194" fill="#f2efe9" />
<polygon points="797,779 782,797 767,820 755,841 745,866 741,893 738,924 717,957 728,968 753,926 776,905 801,893 830,878 836,878 829,864 820,827 811,810 809,793" fill="#cdebb0" />
<polygon points="720,985 703,980 672,1028 684,1037" fill="#cdebb0" />
<polyline points="825,880 922,1032" fill="none" stroke="#b5d6a0" stroke-width="5" stroke-linecap="round" stroke-linejoin="round" stroke-linecap="butt"/>
<polygon points="810,864 829,864 836,878 831,887 810,893" fill="#cdebb0" />
<path d="M833,700 C828.7,709.3 829.0,708.0 820,728 C811.0,748.0 813.0,744.3 806,760 C799.0,775.7 798.7,767.3 799,775 C799.3,782.7 803.0,774.0 807,783 C811.0,792.0 807.7,790.3 811,802 C814.3,813.7 815.0,812.7 817,818" fill="none" stroke="#92ace4" stroke-width="2.6" stroke-linecap="round" stroke-linejoin="round" stroke-opacity=".85"/>
<path d="M810,743 C814.0,733.7 815.7,730.3 822,715 C828.3,699.7 826.7,703.0 829,697" fill="none" stroke="#92ace4" stroke-width="2" stroke-linecap="round" stroke-linejoin="round" stroke-opacity=".6"/>
<polygon points="258,194 629,194 634,229 600,287 542,386 540,400 496,473 479,477 458,504 437.5,544 416.7,583 404,610 399,631 395.8,647.5 391,658 391.7,668 385.4,687 377,701.7 364.6,712 352,720 339.6,725 327,725.6 314.6,721.5 302,712 291.7,695 281,674.6 279,664 286.5,650 288.5,631 284,610 277,566.7 264.6,508 258,491.7" fill="#cdebb0" />
<polygon points="629,194 684,194 672,208 649,231 634,229 629,215" fill="#def6c0" />
<polyline points="479,477 458,504 437.5,544 416.7,583 398,621" fill="none" stroke="#add19e" stroke-width="3" stroke-linecap="round" stroke-linejoin="round" stroke-linecap="butt"/>
<polygon points="755,194 808,194 815,224 806,224" fill="#f5e9c6" />
<polygon points="807,194 816,225 831,261 827,309 830,319 822,348 810,371 792,400 780,421 757,462 738,500 726,525 713,550 703,573 690,604 688,610 674,631 661,656 647,687 634,710 622,739 607,770 592,802 584,820 576,837 557,866 542,880 525,895 504,907 490,915 458,920 437,923.5 417,921 392,923 379,932 358,945 342,955 323,970 308,985 294,997 279,1012 267,1026 258,1043 467,1043 483,1022 500,1003 512,987 523,968 533,957 542,947 551,932 561,920 570,897 584,872 603,845 617,820 628,802 645,772 659,735 672,706 688,672 703,639 714,610 730,583 747,546 765,504 786,462 807,427 831,388 847,352 868,315 893,273 914,232 939,194" fill="#cdebb0" />
<polygon points="810,198 848,296 848,314 829,315 827,309 831,261 816,225" fill="#def6c0" />
<path d="M1125,194 C1122.5,197.8 1117.3,208.0 1110,217 C1102.7,226.0 1092.8,232.3 1081,248 C1069.2,263.7 1053.0,290.2 1039,311 C1025.0,331.8 1006.3,358.2 997,373 C987.7,387.8 989.8,388.5 983,400 C976.2,411.5 965.0,426.3 956,442 C947.0,457.7 939.5,474.0 929,494 C918.5,514.0 901.7,544.7 893,562 C884.3,579.3 881.8,587.7 877,598 C872.2,608.3 869.3,612.3 864,624 C858.7,635.7 850.8,655.8 845,668 C839.2,680.2 831.0,686.5 829,697 C827.0,707.5 829.5,723.0 833,731 C836.5,739.0 845.2,743.7 850,745 C854.8,746.3 858.3,744.8 862,739 C865.7,733.2 866.8,722.8 872,710 C877.2,697.2 886.0,678.7 893,662 C900.0,645.3 908.3,621.7 914,610 C919.7,598.3 921.5,602.0 927,592 C932.5,582.0 939.5,565.3 947,550 C954.5,534.7 963.7,516.3 972,500 C980.3,483.7 987.5,468.7 997,452 C1006.5,435.3 1020.2,413.8 1029,400 C1037.8,386.2 1041.3,382.5 1050,369 C1058.7,355.5 1071.0,333.8 1081,319 C1091.0,304.2 1095.0,300.8 1110,280 C1125.0,259.2 1160.8,208.3 1171,194 Z" fill="#cdebb0"/>
<path d="M1171,194 C1150.7,222.7 1140.0,238.3 1110,280 C1080.0,321.7 1101.0,289.3 1081,319 C1061.0,348.7 1067.3,342.0 1050,369 C1032.7,396.0 1046.7,372.3 1029,400 C1011.3,427.7 1016.0,418.7 997,452 C978.0,485.3 988.7,467.3 972,500 C955.3,532.7 962.0,519.3 947,550 C932.0,580.7 938.0,572.0 927,592 C916.0,612.0 925.3,586.7 914,610 C902.7,633.3 907.0,628.7 893,662 C879.0,695.3 882.3,684.3 872,710 C861.7,735.7 865.3,729.3 862,739" fill="none" stroke="#8facdf" stroke-width="2.2" stroke-linecap="round" stroke-linejoin="round" stroke-opacity=".8"/>
<path d="M1168,194 C1148.7,221.7 1139.0,236.3 1110,277 C1081.0,317.7 1101.0,286.3 1081,316 C1061.0,345.7 1067.7,338.0 1050,366 C1032.3,394.0 1046.0,371.3 1028,400 C1010.0,428.7 1015.0,418.7 996,452 C977.0,485.3 987.7,467.3 971,500 C954.3,532.7 961.0,519.3 946,550 C931.0,580.7 937.0,572.0 926,592 C915.0,612.0 924.3,586.7 913,610 C901.7,633.3 906.0,628.7 892,662 C878.0,695.3 881.0,684.3 871,710 C861.0,735.7 865.0,729.3 862,739" fill="none" stroke="#ebe7df" stroke-width="3" stroke-linecap="round" stroke-linejoin="round" />
<path d="M1156,194 C1140.7,215.0 1135.0,223.0 1110,257 C1085.0,291.0 1101.0,267.7 1081,296 C1061.0,324.3 1068.7,312.3 1050,342 C1031.3,371.7 1046.0,351.0 1025,385 C1004.0,419.0 1008.7,408.3 987,444 C965.3,479.7 976.0,462.3 960,492 C944.0,521.7 953.0,504.7 939,533 C925.0,561.3 929.7,551.3 918,577 C906.3,602.7 915.0,582.3 904,610 C893.0,637.7 897.7,628.7 885,660 C872.3,691.3 872.3,689.3 866,704" fill="none" stroke="#fff" stroke-width="5.5" stroke-linecap="round" stroke-linejoin="round" />
<polyline points="1279,194 1267,232 1252,269 1246,302 1233,323 1208,365 1183,400 1162,437 1133,483 1106,521 1100,533 1071,588 1056,610 1039,641 1010,679 987,718 956,764 922,810 910,834" fill="none" stroke="#8facdf" stroke-width="3" stroke-linecap="round" stroke-linejoin="round" stroke-opacity=".9"/>
<polygon points="1283,194 1271,232 1256,269 1249,302 1260,286 1315,194" fill="#cdebb0" />
<polygon points="1320,194 1393,194 1393,372 1300,362 1248,326 1262,290" fill="#e0dfdf" />
<polygon points="1246,330 1296,365 1304,400 1300,421 1277,444 1246,452 1215,442 1187,427 1183,412 1200,390" fill="#e0dfdf" />
<polygon points="1187,432 1215,447 1246,457 1280,449 1304,425 1310,402 1306,370 1393,368 1393,400 1329,460 1267,515 1225,498 1187,485 1160,462 1166,445" fill="#e0dfdf" />
<polygon points="1393,405 1335,462 1275,517 1300,530 1340,480 1393,440" fill="#e0dfdf" />
<polygon points="1393,470 1350,500 1318,540 1393,580" fill="#e0dfdf" />
<polygon points="1344,444 1356,434 1366,444 1352,455" fill="#f2efe9" />
<polygon points="1393,440 1340,480 1300,530 1280,560 1262,610 1250,660 1230,700 1215,740 1212,780 1222,820 1232,850 1260,880 1290,900 1340,820 1367,777 1393,762" fill="#cdebb0" />
<polygon points="1393,476 1352,502 1322,543 1393,573" fill="#e0dfdf" />
<polygon points="1327,562 1350,566 1346,580 1325,576" fill="#c8facc" />
<polygon points="1246,737 1277,747 1298,792 1328,747 1350,730 1393,742 1393,762 1367,777 1340,820 1300,885 1262,862 1240,836 1236,790" fill="#c8facc" />
<polygon points="1352,571 1393,566 1393,606 1375,604 1356,590" fill="#f9d0c6" />
<polygon points="1252,622 1268,618 1273,650 1262,672 1250,668" fill="#b4d6a2" />
<polygon points="1204,688 1222,694 1214,712 1198,706" fill="#b4d6a2" />
<polygon points="1243,752 1280,762 1283,795 1258,830 1243,825 1240,790" fill="#cdebb0" />
<polygon points="1318,800 1340,782 1350,795 1330,822" fill="#cdebb0" />
<polygon points="1192,528 1210,505 1237,553 1228,556" fill="#c8facc" stroke="#9fd6a6" stroke-width="1"/>
<polygon points="1222,512 1250,520 1238,545" fill="#cdebb0" />
<polygon points="1172,573 1190,580 1180,600 1215,615 1210,624 1162,624 1165,600" fill="#cdebb0" />
<polygon points="1253,530 1270,536 1258,575 1246,610 1238,636 1228,636 1240,590 1248,560" fill="#b7dba0" />
<polygon points="1100,565 1115,570 1108,600 1100,610" fill="#cdebb0" />
<polygon points="1157,630 1215,655 1200,690 1185,720 1157,700" fill="#e0dfdf" />
<polygon points="1232,645 1240,660 1228,690 1208,680 1215,650" fill="#e0dfdf" />
<polygon points="1121,712 1172,733 1146,790 1093,765" fill="#e0dfdf" />
<polygon points="1160,680 1196,684 1186,716 1172,733 1150,724" fill="#e0dfdf" />
<polygon points="1196,690 1232,700 1215,745 1207,787 1217,852 1222,885 1110,910 1102,895 1150,790 1175,735" fill="#e0dfdf" />
<polygon points="1100,930 1150,918 1200,905 1232,895 1265,920 1283,950 1270,990 1258,1010 1217,1008 1180,1000 1121,972 1100,1020" fill="#e0dfdf" />
<polygon points="1298,905 1340,830 1393,770 1393,950 1365,960 1325,1005 1300,1036 1290,1000 1300,950 1290,925" fill="#e0dfdf" />
<polygon points="1100,1030 1121,976 1177,1002 1169,1010 1155,1043 1100,1043" fill="#e0dfdf" />
<polygon points="1175,1010 1217,1015 1300,1040 1300,1043 1160,1043" fill="#e0dfdf" />
<polygon points="1330,1010 1365,968 1393,958 1393,1043 1305,1043" fill="#e0dfdf" />
<polygon points="1050,975 1110,930 1110,1043 990,1043 1000,1030" fill="#e0dfdf" />
<polygon points="1100,935 1160,925 1215,905 1240,915 1262,935 1255,950 1230,955 1205,975 1190,970 1150,955 1100,945" fill="#b7dba0" />
<polygon points="1118,945 1150,932 1215,930 1225,950 1205,962 1190,968 1160,950" fill="#cdebb0" />
<polygon points="1320,880 1300,895 1262,875 1248,850 1262,842" fill="#cdebb0" />
<polygon points="1056,702 1085,716 1060,775 1035,800 1020,792" fill="#cdebb0" />
<polygon points="1090,790 1110,800 1110,870 1085,880 1055,862" fill="#cdebb0" />
<polygon points="1052,640 1062,612 1095,624 1085,650 1075,672 1048,660" fill="#cdebb0" />
<polygon points="1100,860 1110,850 1110,900 1100,905" fill="#cdebb0" />
<polygon points="1056,610 1039,641 1010,679 987,718 956,764 922,810 910,834 912,843 960,843 968,834 1002,777 1045,697 1042,682 1050,660 1030,652 1045,625" fill="#cdebb0" />
<polygon points="925,835 945,828 960,845 940,850" fill="#cdebb0" />
<path d="M1396,444 C1392.2,447.0 1379.7,456.5 1373,462 C1366.3,467.5 1361.8,471.5 1355.6,477 C1349.4,482.5 1342.4,488.6 1336,495 C1329.6,501.4 1323.2,509.3 1317,515.6 C1310.8,521.9 1303.3,527.9 1299,533 C1294.7,538.1 1293.8,540.8 1291,546 C1288.2,551.2 1285.2,557.7 1282,564 C1278.8,570.3 1275.2,576.8 1272,584 C1268.8,591.2 1266.0,599.5 1263,607 C1260.0,614.5 1256.7,621.7 1254,629 C1251.3,636.3 1248.9,643.7 1246.7,651 C1244.5,658.3 1242.7,665.6 1240.7,673 C1238.8,680.4 1238.0,688.9 1235,695.6 C1232.0,702.3 1226.1,704.5 1222.5,713 C1218.9,721.5 1215.2,735.5 1213.3,746.7 C1211.4,757.9 1210.8,769.0 1211.2,780 C1211.6,791.0 1213.3,801.8 1215.8,813 C1218.3,824.2 1224.3,841.3 1226,847" fill="none" stroke="#a3d1c1" stroke-width="24.5" stroke-linecap="round" stroke-linejoin="round" stroke-linecap="butt"/>
<path d="M1215.8,813 C1217.5,818.7 1223.8,838.2 1226,847 C1228.2,855.8 1228.0,860.5 1229,866 C1230.0,871.5 1230.5,875.8 1232,880 C1233.5,884.2 1235.2,887.8 1238,891 C1240.8,894.2 1243.8,894.5 1248.75,899 C1253.7,903.5 1261.6,912.4 1267.5,918 C1273.4,923.6 1279.8,927.3 1284,932.5 C1288.2,937.7 1291.5,942.8 1292.5,949 C1293.5,955.2 1292.1,963.4 1290,970 C1287.9,976.6 1283.4,982.9 1280,988.75 C1276.6,994.6 1272.4,1000.8 1269.6,1005 C1266.8,1009.2 1264.1,1012.5 1263,1014" fill="none" stroke="#a3d1c1" stroke-width="26.5" stroke-linecap="round" stroke-linejoin="round" stroke-linecap="butt"/>
<path d="M1240,892 C1237.7,892.8 1233.7,894.5 1226,897 C1218.3,899.5 1204.5,903.8 1194,907 C1183.5,910.2 1173.3,913.3 1163,916 C1152.7,918.7 1141.2,921.2 1132,923 C1122.8,924.8 1114.5,925.3 1108,927 C1101.5,928.7 1097.8,929.8 1093,933 C1088.2,936.2 1084.2,940.8 1079,946 C1073.8,951.2 1068.3,957.3 1062,964 C1055.7,970.7 1047.6,979.2 1041,986 C1034.4,992.8 1028.7,998.7 1022.5,1005 C1016.3,1011.3 1009.2,1017.8 1004,1024 C998.8,1030.2 993.7,1038.7 991,1042.5 C988.3,1046.3 988.5,1046.2 988,1047" fill="none" stroke="#a3d1c1" stroke-width="22.5" stroke-linecap="round" stroke-linejoin="round" stroke-linecap="butt"/>
<path d="M1396,444 C1392.2,447.0 1379.7,456.5 1373,462 C1366.3,467.5 1361.8,471.5 1355.6,477 C1349.4,482.5 1342.4,488.6 1336,495 C1329.6,501.4 1323.2,509.3 1317,515.6 C1310.8,521.9 1303.3,527.9 1299,533 C1294.7,538.1 1293.8,540.8 1291,546 C1288.2,551.2 1285.2,557.7 1282,564 C1278.8,570.3 1275.2,576.8 1272,584 C1268.8,591.2 1266.0,599.5 1263,607 C1260.0,614.5 1256.7,621.7 1254,629 C1251.3,636.3 1248.9,643.7 1246.7,651 C1244.5,658.3 1242.7,665.6 1240.7,673 C1238.8,680.4 1238.0,688.9 1235,695.6 C1232.0,702.3 1226.1,704.5 1222.5,713 C1218.9,721.5 1215.2,735.5 1213.3,746.7 C1211.4,757.9 1210.8,769.0 1211.2,780 C1211.6,791.0 1213.3,801.8 1215.8,813 C1218.3,824.2 1224.3,841.3 1226,847" fill="none" stroke="#aad3df" stroke-width="15.5" stroke-linecap="round" stroke-linejoin="round" stroke-linecap="butt"/>
<path d="M1215.8,813 C1217.5,818.7 1223.8,838.2 1226,847 C1228.2,855.8 1228.0,860.5 1229,866 C1230.0,871.5 1230.5,875.8 1232,880 C1233.5,884.2 1235.2,887.8 1238,891 C1240.8,894.2 1243.8,894.5 1248.75,899 C1253.7,903.5 1261.6,912.4 1267.5,918 C1273.4,923.6 1279.8,927.3 1284,932.5 C1288.2,937.7 1291.5,942.8 1292.5,949 C1293.5,955.2 1292.1,963.4 1290,970 C1287.9,976.6 1283.4,982.9 1280,988.75 C1276.6,994.6 1272.4,1000.8 1269.6,1005 C1266.8,1009.2 1264.1,1012.5 1263,1014" fill="none" stroke="#aad3df" stroke-width="17.5" stroke-linecap="round" stroke-linejoin="round" stroke-linecap="butt"/>
<path d="M1240,892 C1237.7,892.8 1233.7,894.5 1226,897 C1218.3,899.5 1204.5,903.8 1194,907 C1183.5,910.2 1173.3,913.3 1163,916 C1152.7,918.7 1141.2,921.2 1132,923 C1122.8,924.8 1114.5,925.3 1108,927 C1101.5,928.7 1097.8,929.8 1093,933 C1088.2,936.2 1084.2,940.8 1079,946 C1073.8,951.2 1068.3,957.3 1062,964 C1055.7,970.7 1047.6,979.2 1041,986 C1034.4,992.8 1028.7,998.7 1022.5,1005 C1016.3,1011.3 1009.2,1017.8 1004,1024 C998.8,1030.2 993.7,1038.7 991,1042.5 C988.3,1046.3 988.5,1046.2 988,1047" fill="none" stroke="#aad3df" stroke-width="13.5" stroke-linecap="round" stroke-linejoin="round" stroke-linecap="butt"/>
<polygon points="1222,868 1240,880 1250,898 1236,900 1215,905 1222,890" fill="#aad3df" />
<polygon points="1250.8,1014.8 1284,1003 1297.7,1014.8 1280,1027 1269.6,1023 1252,1019" fill="#8fc3b2" stroke="#5f9a8a" stroke-width="1"/>
<polyline points="1258,1016 1284,1008 1290,1014 1278,1022 1262,1019" fill="none" stroke="#b89a80" stroke-width="1" stroke-linecap="round" stroke-linejoin="round" />
<polyline points="1306,610 1287,652 1267,697 1246,739 1237,777 1242,818 1262,862 1284,892" fill="none" stroke="#4a4af0" stroke-width="1.1" stroke-linecap="round" stroke-linejoin="round" stroke-dasharray="1.500 3" stroke-linecap="butt"/>
<polyline points="1393,631 1350,672 1308,714 1267,756" fill="none" stroke="#4a4af0" stroke-width="1.1" stroke-linecap="round" stroke-linejoin="round" stroke-dasharray="1.500 3" stroke-linecap="butt"/>
<polyline points="1198,708 1233,725 1275,745" fill="none" stroke="#4a4af0" stroke-width="1.1" stroke-linecap="round" stroke-linejoin="round" stroke-dasharray="1.500 3" stroke-linecap="butt"/>
<polyline points="1329,554 1318,590 1306,610" fill="none" stroke="#4a4af0" stroke-width="1.1" stroke-linecap="round" stroke-linejoin="round" stroke-dasharray="1.500 3" stroke-linecap="butt"/>
<polyline points="1306,373 1358,370" fill="none" stroke="#4a4af0" stroke-width="1.1" stroke-linecap="round" stroke-linejoin="round" stroke-dasharray="1.500 3" stroke-linecap="butt"/>
<polyline points="1250,947 1264,928" fill="none" stroke="#4a4af0" stroke-width="1.1" stroke-linecap="round" stroke-linejoin="round" stroke-dasharray="1.500 3" stroke-linecap="butt"/>
<polyline points="1300,633 1371,700" fill="none" stroke="#f5876f" stroke-width="1.1" stroke-linecap="round" stroke-linejoin="round" stroke-dasharray="3 2.500" stroke-linecap="butt"/>
<polyline points="1277,675 1308,704" fill="none" stroke="#f5876f" stroke-width="1.1" stroke-linecap="round" stroke-linejoin="round" stroke-dasharray="3 2.500" stroke-linecap="butt"/>
<polyline points="1283,650 1258,680 1235,722" fill="none" stroke="#f5876f" stroke-width="1.1" stroke-linecap="round" stroke-linejoin="round" stroke-dasharray="3 2.500" stroke-linecap="butt"/>
<polyline points="1246,745 1287,781 1246,818" fill="none" stroke="#f5876f" stroke-width="1.1" stroke-linecap="round" stroke-linejoin="round" stroke-dasharray="3 2.500" stroke-linecap="butt"/>
<polyline points="1352,610 1393,631" fill="none" stroke="#f5876f" stroke-width="1.1" stroke-linecap="round" stroke-linejoin="round" stroke-dasharray="3 2.500" stroke-linecap="butt"/>
<polyline points="1342,677 1393,718" fill="none" stroke="#f5876f" stroke-width="1.1" stroke-linecap="round" stroke-linejoin="round" stroke-dasharray="3 2.500" stroke-linecap="butt"/>
<polyline points="1318,590 1393,618" fill="none" stroke="#f5876f" stroke-width="1.1" stroke-linecap="round" stroke-linejoin="round" stroke-dasharray="3 2.500" stroke-linecap="butt"/>
<polyline points="1287,781 1310,760 1340,720 1372,700" fill="none" stroke="#f5876f" stroke-width="1.1" stroke-linecap="round" stroke-linejoin="round" stroke-dasharray="3 2.500" stroke-linecap="butt"/>
<polyline points="1280,845 1300,820 1322,845" fill="none" stroke="#f5876f" stroke-width="1.1" stroke-linecap="round" stroke-linejoin="round" stroke-dasharray="3 2.500" stroke-linecap="butt"/>
<polyline points="1279,196 1252,269 1233,323 1183,400 1133,483 1100,536 1056,612 1010,682 975,735" fill="none" stroke="#f5876f" stroke-width="1.1" stroke-linecap="round" stroke-linejoin="round" stroke-dasharray="3 2.500" stroke-linecap="butt"/>
<polyline points="1133,483 1150,495 1100,520" fill="none" stroke="#f5876f" stroke-width="1.1" stroke-linecap="round" stroke-linejoin="round" stroke-dasharray="3 2.500" stroke-linecap="butt"/>
<polyline points="1100,545 1125,556" fill="none" stroke="#f5876f" stroke-width="1.1" stroke-linecap="round" stroke-linejoin="round" stroke-dasharray="3 2.500" stroke-linecap="butt"/>
<polyline points="1010,682 1030,690 1035,720 1020,760" fill="none" stroke="#f5876f" stroke-width="1.1" stroke-linecap="round" stroke-linejoin="round" stroke-dasharray="3 2.500" stroke-linecap="butt"/>
<polyline points="975,735 1000,722 1005,742 990,780" fill="none" stroke="#f5876f" stroke-width="1.1" stroke-linecap="round" stroke-linejoin="round" stroke-dasharray="3 2.500" stroke-linecap="butt"/>
<polyline points="955,800 970,778 982,790 978,830" fill="none" stroke="#f5876f" stroke-width="1.1" stroke-linecap="round" stroke-linejoin="round" stroke-dasharray="3 2.500" stroke-linecap="butt"/>
<polyline points="1218,500 1225,530 1238,555" fill="none" stroke="#f5876f" stroke-width="1.1" stroke-linecap="round" stroke-linejoin="round" stroke-dasharray="3 2.500" stroke-linecap="butt"/>
<polyline points="1212,520 1222,548 1238,555" fill="none" stroke="#f5876f" stroke-width="1.1" stroke-linecap="round" stroke-linejoin="round" stroke-dasharray="3 2.500" stroke-linecap="butt"/>
<polyline points="1266,540 1256,575 1243,610 1230,636" fill="none" stroke="#f5876f" stroke-width="1.1" stroke-linecap="round" stroke-linejoin="round" stroke-dasharray="3 2.500" stroke-linecap="butt"/>
<polyline points="1262,538 1252,573 1239,608 1227,633" fill="none" stroke="#f5876f" stroke-width="1.1" stroke-linecap="round" stroke-linejoin="round" stroke-dasharray="3 2.500" stroke-linecap="butt"/>
<polyline points="1177,1000 1215,1012" fill="none" stroke="#f5876f" stroke-width="1.1" stroke-linecap="round" stroke-linejoin="round" stroke-dasharray="3 2.500" stroke-linecap="butt"/>
<polyline points="1340,960 1325,1000 1300,1036" fill="none" stroke="#f5876f" stroke-width="1.1" stroke-linecap="round" stroke-linejoin="round" stroke-dasharray="3 2.500" stroke-linecap="butt"/>
<polyline points="1325,1000 1355,1040" fill="none" stroke="#f5876f" stroke-width="1.1" stroke-linecap="round" stroke-linejoin="round" stroke-dasharray="3 2.500" stroke-linecap="butt"/>
<path d="M411,194 C402.7,200.3 395.0,203.7 386,213 C377.0,222.3 382.0,216.3 384,222 C386.0,227.7 383.0,225.3 392,230 C401.0,234.7 399.0,237.0 411,236 C423.0,235.0 408.3,240.3 428,227 C447.7,213.7 456.0,206.3 470,196" fill="none" stroke="#d4d0c8" stroke-width="6.6" stroke-linecap="round" stroke-linejoin="round" stroke-opacity=".7"/>
<polyline points="430,194 456,230" fill="none" stroke="#d4d0c8" stroke-width="6.6" stroke-linecap="round" stroke-linejoin="round" stroke-opacity=".7"/>
<polyline points="501,194 515,198 534,194" fill="none" stroke="#d4d0c8" stroke-width="6.6" stroke-linecap="round" stroke-linejoin="round" stroke-opacity=".7"/>
<polyline points="588,194 624,209" fill="none" stroke="#d4d0c8" stroke-width="6.6" stroke-linecap="round" stroke-linejoin="round" stroke-opacity=".7"/>
<path d="M624,194 C625.7,200.0 628.3,201.3 629,212 C629.7,222.7 630.0,216.0 626,226 C622.0,236.0 647.7,188.0 617,242 C586.3,296.0 561.7,339.3 534,388" fill="none" stroke="#d4d0c8" stroke-width="6.6" stroke-linecap="round" stroke-linejoin="round" stroke-opacity=".7"/>
<polyline points="418,323 538,393" fill="none" stroke="#d4d0c8" stroke-width="6.6" stroke-linecap="round" stroke-linejoin="round" stroke-opacity=".7"/>
<path d="M503,371 C503.7,366.3 501.7,363.3 505,357 C508.3,350.7 507.3,353.7 513,352 C518.7,350.3 511.3,348.3 522,352 C532.7,355.7 537.3,359.3 545,363" fill="none" stroke="#d4d0c8" stroke-width="5.9" stroke-linecap="round" stroke-linejoin="round" stroke-opacity=".7"/>
<path d="M1327,194 C1316.3,209.7 1316.7,209.0 1295,241 C1273.3,273.0 1278.3,262.7 1262,290 C1245.7,317.3 1260.0,299.7 1246,323 C1232.0,346.3 1237.3,335.0 1220,360 C1202.7,385.0 1207.0,379.0 1194,398 C1181.0,417.0 1191.7,400.3 1181,417 C1170.3,433.7 1169.3,432.3 1162,448 C1154.7,463.7 1150.7,451.0 1159,464 C1167.3,477.0 1165.0,475.0 1187,487 C1209.0,499.0 1198.3,490.0 1225,500 C1251.7,510.0 1253.0,511.3 1267,517" fill="none" stroke="#d4d0c8" stroke-width="11.4" stroke-linecap="round" stroke-linejoin="round" stroke-opacity=".7"/>
<polyline points="1246,327 1298,361 1360,373 1393,370" fill="none" stroke="#d4d0c8" stroke-width="11.4" stroke-linecap="round" stroke-linejoin="round" stroke-opacity=".7"/>
<path d="M1393,211 C1377.0,236.3 1376.7,237.0 1345,287 C1313.3,337.0 1311.0,323.3 1298,361 C1285.0,398.7 1305.3,380.0 1306,400 C1306.7,420.0 1309.7,406.3 1300,421 C1290.3,435.7 1295.0,433.7 1277,444 C1259.0,454.3 1266.7,452.7 1246,452 C1225.3,451.3 1234.7,450.3 1215,442 C1195.3,433.7 1196.3,432.0 1187,427" fill="none" stroke="#d4d0c8" stroke-width="11.4" stroke-linecap="round" stroke-linejoin="round" stroke-opacity=".7"/>
<polyline points="1393,391 1380.7,403 1358.5,425 1329,455 1299,483 1269.6,512.6 1264,519 1244.5,567 1225.3,610 1201.7,680 1189,713 1170.8,746.7 1154,780 1136.7,813 1120,846.7 1110,862 956,1043" fill="none" stroke="#d4d0c8" stroke-width="13.4" stroke-linecap="round" stroke-linejoin="round" stroke-opacity=".7"/>
<polyline points="1266,515 1299,533 1323,548 1360,564 1393,573" fill="none" stroke="#d4d0c8" stroke-width="11.9" stroke-linecap="round" stroke-linejoin="round" stroke-opacity=".7"/>
<polyline points="1393,762 1367,777 1342.5,826 1290.4,899" fill="none" stroke="#d4d0c8" stroke-width="11.4" stroke-linecap="round" stroke-linejoin="round" stroke-opacity=".7"/>
<polyline points="996,1014 1069,1043" fill="none" stroke="#d4d0c8" stroke-width="10.4" stroke-linecap="round" stroke-linejoin="round" stroke-opacity=".7"/>
<polyline points="1393,940 1367.5,949 1346.7,986.7 1313,1028 1300.8,1044" fill="none" stroke="#d4d0c8" stroke-width="12.4" stroke-linecap="round" stroke-linejoin="round" stroke-opacity=".7"/>
<polyline points="1217.5,1009.6 1300.8,1040.8" fill="none" stroke="#d4d0c8" stroke-width="11.4" stroke-linecap="round" stroke-linejoin="round" stroke-opacity=".7"/>
<polyline points="1250.8,947 1221.7,1009.6" fill="none" stroke="#d4d0c8" stroke-width="10.4" stroke-linecap="round" stroke-linejoin="round" stroke-opacity=".7"/>
<polyline points="1122.5,970.6 1175.6,997" fill="none" stroke="#d4d0c8" stroke-width="9.9" stroke-linecap="round" stroke-linejoin="round" stroke-opacity=".7"/>
<polyline points="1122.5,970.6 1090,1043" fill="none" stroke="#d4d0c8" stroke-width="9.9" stroke-linecap="round" stroke-linejoin="round" stroke-opacity=".7"/>
<polyline points="1175.6,997 1157,1043" fill="none" stroke="#d4d0c8" stroke-width="9.9" stroke-linecap="round" stroke-linejoin="round" stroke-opacity=".7"/>
<polyline points="1335,742 1350,733" fill="none" stroke="#d4d0c8" stroke-width="7.4" stroke-linecap="round" stroke-linejoin="round" stroke-opacity=".7"/>
<polyline points="1293,792 1335,830" fill="none" stroke="#d4d0c8" stroke-width="7.4" stroke-linecap="round" stroke-linejoin="round" stroke-opacity=".7"/>
<polyline points="1100,525 1125,535 1110,570 1143,585 1130,624" fill="none" stroke="#d4d0c8" stroke-width="7.4" stroke-linecap="round" stroke-linejoin="round" stroke-opacity=".7"/>
<polyline points="1156,462 1140,495 1125,535" fill="none" stroke="#d4d0c8" stroke-width="7.4" stroke-linecap="round" stroke-linejoin="round" stroke-opacity=".7"/>
<polyline points="1160,490 1195,505 1203,490" fill="none" stroke="#d4d0c8" stroke-width="6.4" stroke-linecap="round" stroke-linejoin="round" stroke-opacity=".7"/>
<polyline points="1143,585 1120,640 1100,632" fill="none" stroke="#d4d0c8" stroke-width="7.4" stroke-linecap="round" stroke-linejoin="round" stroke-opacity=".7"/>
<polyline points="1075,618 1110,632" fill="none" stroke="#d4d0c8" stroke-width="7.4" stroke-linecap="round" stroke-linejoin="round" stroke-opacity=".7"/>
<polyline points="968,760 940,800 922,834 905,860 905,880 930,925 990,990 1000,1000" fill="none" stroke="#d4d0c8" stroke-width="7.4" stroke-linecap="round" stroke-linejoin="round" stroke-opacity=".7"/>
<polyline points="1047,697 1058,694 1072,697 1077,706 1027,808 1020,822 1090,888" fill="none" stroke="#d4d0c8" stroke-width="7.4" stroke-linecap="round" stroke-linejoin="round" stroke-opacity=".7"/>
<polyline points="1047,697 1002,777 990,800 968,830 935,870" fill="none" stroke="#d4d0c8" stroke-width="7.4" stroke-linecap="round" stroke-linejoin="round" stroke-opacity=".7"/>
<polyline points="990,800 1027,830" fill="none" stroke="#d4d0c8" stroke-width="6.4" stroke-linecap="round" stroke-linejoin="round" stroke-opacity=".7"/>
<polyline points="1020,822 1000,845 968,872 965,885 985,905" fill="none" stroke="#d4d0c8" stroke-width="6.4" stroke-linecap="round" stroke-linejoin="round" stroke-opacity=".7"/>
<polyline points="1000,845 1058,893" fill="none" stroke="#d4d0c8" stroke-width="6.4" stroke-linecap="round" stroke-linejoin="round" stroke-opacity=".7"/>
<polyline points="985,858 1045,912" fill="none" stroke="#d4d0c8" stroke-width="6.4" stroke-linecap="round" stroke-linejoin="round" stroke-opacity=".7"/>
<polyline points="975,880 1025,928" fill="none" stroke="#d4d0c8" stroke-width="6.4" stroke-linecap="round" stroke-linejoin="round" stroke-opacity=".7"/>
<polyline points="985,905 945,927" fill="none" stroke="#d4d0c8" stroke-width="6.4" stroke-linecap="round" stroke-linejoin="round" stroke-opacity=".7"/>
<path d="M411,194 C402.7,200.3 395.0,203.7 386,213 C377.0,222.3 382.0,216.3 384,222 C386.0,227.7 383.0,225.3 392,230 C401.0,234.7 399.0,237.0 411,236 C423.0,235.0 408.3,240.3 428,227 C447.7,213.7 456.0,206.3 470,196" fill="none" stroke="#fff" stroke-width="5.2" stroke-linecap="round" stroke-linejoin="round" />
<polyline points="430,194 456,230" fill="none" stroke="#fff" stroke-width="5.2" stroke-linecap="round" stroke-linejoin="round" />
<polyline points="501,194 515,198 534,194" fill="none" stroke="#fff" stroke-width="5.2" stroke-linecap="round" stroke-linejoin="round" />
<polyline points="588,194 624,209" fill="none" stroke="#fff" stroke-width="5.2" stroke-linecap="round" stroke-linejoin="round" />
<path d="M624,194 C625.7,200.0 628.3,201.3 629,212 C629.7,222.7 630.0,216.0 626,226 C622.0,236.0 647.7,188.0 617,242 C586.3,296.0 561.7,339.3 534,388" fill="none" stroke="#fff" stroke-width="5.2" stroke-linecap="round" stroke-linejoin="round" />
<polyline points="418,323 538,393" fill="none" stroke="#fff" stroke-width="5.2" stroke-linecap="round" stroke-linejoin="round" />
<path d="M503,371 C503.7,366.3 501.7,363.3 505,357 C508.3,350.7 507.3,353.7 513,352 C518.7,350.3 511.3,348.3 522,352 C532.7,355.7 537.3,359.3 545,363" fill="none" stroke="#fff" stroke-width="4.5" stroke-linecap="round" stroke-linejoin="round" />
<path d="M1327,194 C1316.3,209.7 1316.7,209.0 1295,241 C1273.3,273.0 1278.3,262.7 1262,290 C1245.7,317.3 1260.0,299.7 1246,323 C1232.0,346.3 1237.3,335.0 1220,360 C1202.7,385.0 1207.0,379.0 1194,398 C1181.0,417.0 1191.7,400.3 1181,417 C1170.3,433.7 1169.3,432.3 1162,448 C1154.7,463.7 1150.7,451.0 1159,464 C1167.3,477.0 1165.0,475.0 1187,487 C1209.0,499.0 1198.3,490.0 1225,500 C1251.7,510.0 1253.0,511.3 1267,517" fill="none" stroke="#fff" stroke-width="10" stroke-linecap="round" stroke-linejoin="round" />
<polyline points="1246,327 1298,361 1360,373 1393,370" fill="none" stroke="#fff" stroke-width="10" stroke-linecap="round" stroke-linejoin="round" />
<path d="M1393,211 C1377.0,236.3 1376.7,237.0 1345,287 C1313.3,337.0 1311.0,323.3 1298,361 C1285.0,398.7 1305.3,380.0 1306,400 C1306.7,420.0 1309.7,406.3 1300,421 C1290.3,435.7 1295.0,433.7 1277,444 C1259.0,454.3 1266.7,452.7 1246,452 C1225.3,451.3 1234.7,450.3 1215,442 C1195.3,433.7 1196.3,432.0 1187,427" fill="none" stroke="#fff" stroke-width="10" stroke-linecap="round" stroke-linejoin="round" />
<polyline points="1393,391 1380.7,403 1358.5,425 1329,455 1299,483 1269.6,512.6 1264,519 1244.5,567 1225.3,610 1201.7,680 1189,713 1170.8,746.7 1154,780 1136.7,813 1120,846.7 1110,862 956,1043" fill="none" stroke="#fff" stroke-width="12" stroke-linecap="round" stroke-linejoin="round" />
<polyline points="1266,515 1299,533 1323,548 1360,564 1393,573" fill="none" stroke="#fff" stroke-width="10.5" stroke-linecap="round" stroke-linejoin="round" />
<polyline points="1393,762 1367,777 1342.5,826 1290.4,899" fill="none" stroke="#fff" stroke-width="10" stroke-linecap="round" stroke-linejoin="round" />
<polyline points="996,1014 1069,1043" fill="none" stroke="#fff" stroke-width="9" stroke-linecap="round" stroke-linejoin="round" />
<polyline points="1393,940 1367.5,949 1346.7,986.7 1313,1028 1300.8,1044" fill="none" stroke="#fff" stroke-width="11" stroke-linecap="round" stroke-linejoin="round" />
<polyline points="1217.5,1009.6 1300.8,1040.8" fill="none" stroke="#fff" stroke-width="10" stroke-linecap="round" stroke-linejoin="round" />
<polyline points="1250.8,947 1221.7,1009.6" fill="none" stroke="#fff" stroke-width="9" stroke-linecap="round" stroke-linejoin="round" />
<polyline points="1122.5,970.6 1175.6,997" fill="none" stroke="#fff" stroke-width="8.5" stroke-linecap="round" stroke-linejoin="round" />
<polyline points="1122.5,970.6 1090,1043" fill="none" stroke="#fff" stroke-width="8.5" stroke-linecap="round" stroke-linejoin="round" />
<polyline points="1175.6,997 1157,1043" fill="none" stroke="#fff" stroke-width="8.5" stroke-linecap="round" stroke-linejoin="round" />
<polyline points="1335,742 1350,733" fill="none" stroke="#fff" stroke-width="6" stroke-linecap="round" stroke-linejoin="round" />
<polyline points="1293,792 1335,830" fill="none" stroke="#fff" stroke-width="6" stroke-linecap="round" stroke-linejoin="round" />
<polyline points="1100,525 1125,535 1110,570 1143,585 1130,624" fill="none" stroke="#fff" stroke-width="6" stroke-linecap="round" stroke-linejoin="round" />
<polyline points="1156,462 1140,495 1125,535" fill="none" stroke="#fff" stroke-width="6" stroke-linecap="round" stroke-linejoin="round" />
<polyline points="1160,490 1195,505 1203,490" fill="none" stroke="#fff" stroke-width="5" stroke-linecap="round" stroke-linejoin="round" />
<polyline points="1143,585 1120,640 1100,632" fill="none" stroke="#fff" stroke-width="6" stroke-linecap="round" stroke-linejoin="round" />
<polyline points="1075,618 1110,632" fill="none" stroke="#fff" stroke-width="6" stroke-linecap="round" stroke-linejoin="round" />
<polyline points="968,760 940,800 922,834 905,860 905,880 930,925 990,990 1000,1000" fill="none" stroke="#fff" stroke-width="6" stroke-linecap="round" stroke-linejoin="round" />
<polyline points="1047,697 1058,694 1072,697 1077,706 1027,808 1020,822 1090,888" fill="none" stroke="#fff" stroke-width="6" stroke-linecap="round" stroke-linejoin="round" />
<polyline points="1047,697 1002,777 990,800 968,830 935,870" fill="none" stroke="#fff" stroke-width="6" stroke-linecap="round" stroke-linejoin="round" />
<polyline points="990,800 1027,830" fill="none" stroke="#fff" stroke-width="5" stroke-linecap="round" stroke-linejoin="round" />
<polyline points="1020,822 1000,845 968,872 965,885 985,905" fill="none" stroke="#fff" stroke-width="5" stroke-linecap="round" stroke-linejoin="round" />
<polyline points="1000,845 1058,893" fill="none" stroke="#fff" stroke-width="5" stroke-linecap="round" stroke-linejoin="round" />
<polyline points="985,858 1045,912" fill="none" stroke="#fff" stroke-width="5" stroke-linecap="round" stroke-linejoin="round" />
<polyline points="975,880 1025,928" fill="none" stroke="#fff" stroke-width="5" stroke-linecap="round" stroke-linejoin="round" />
<polyline points="985,905 945,927" fill="none" stroke="#fff" stroke-width="5" stroke-linecap="round" stroke-linejoin="round" />
<circle cx="1290.400" cy="899" r="7.500" fill="#fff"/>
<circle cx="1250.800" cy="947" r="5.500" fill="#fff"/>
<polyline points="1367.5,955 1393,961" fill="none" stroke="#fff" stroke-width="9" stroke-linecap="round" stroke-linejoin="round" stroke-dasharray="5 3" stroke-linecap="butt"/>
<path d="M1393,975 C1388.7,983.3 1393.3,979.3 1380,1000 C1366.7,1020.7 1363.7,1022.7 1353,1037 C1342.3,1051.3 1349.7,1041.0 1348,1043" fill="none" stroke="#fff" stroke-width="9" stroke-linecap="round" stroke-linejoin="round" stroke-dasharray="5 3" stroke-linecap="butt"/>
<polyline points="1144,222 1180,246 1119,344" fill="none" stroke="#ebe7df" stroke-width="4.6" stroke-linecap="round" stroke-linejoin="round" stroke-linecap="butt"/>
<polyline points="1148,232 1100,292 1072,335" fill="none" stroke="#ebe7df" stroke-width="4.6" stroke-linecap="round" stroke-linejoin="round" stroke-linecap="butt"/>
<polyline points="1212,195 1192,229" fill="none" stroke="#ebe7df" stroke-width="4.6" stroke-linecap="round" stroke-linejoin="round" stroke-linecap="butt"/>
<polyline points="1253,195 1235,224" fill="none" stroke="#ebe7df" stroke-width="4.6" stroke-linecap="round" stroke-linejoin="round" stroke-linecap="butt"/>
<polyline points="1212,299 1140,414 1132,428" fill="none" stroke="#ebe7df" stroke-width="4.6" stroke-linecap="round" stroke-linejoin="round" stroke-linecap="butt"/>
<polyline points="1119,409 1162,437" fill="none" stroke="#ebe7df" stroke-width="4.6" stroke-linecap="round" stroke-linejoin="round" stroke-linecap="butt"/>
<polyline points="1064,443 1133,483" fill="none" stroke="#ebe7df" stroke-width="4.6" stroke-linecap="round" stroke-linejoin="round" stroke-linecap="butt"/>
<polyline points="1044,480 1106,521" fill="none" stroke="#ebe7df" stroke-width="4.6" stroke-linecap="round" stroke-linejoin="round" stroke-linecap="butt"/>
<polyline points="1028,510 1091,550" fill="none" stroke="#ebe7df" stroke-width="4.6" stroke-linecap="round" stroke-linejoin="round" stroke-linecap="butt"/>
<polyline points="1008,542 1075,583" fill="none" stroke="#ebe7df" stroke-width="4.6" stroke-linecap="round" stroke-linejoin="round" stroke-linecap="butt"/>
<polyline points="983,583 1056,610" fill="none" stroke="#ebe7df" stroke-width="4.6" stroke-linecap="round" stroke-linejoin="round" stroke-linecap="butt"/>
<polyline points="966,639 1010,666" fill="none" stroke="#ebe7df" stroke-width="4.6" stroke-linecap="round" stroke-linejoin="round" stroke-linecap="butt"/>
<polyline points="954,666 979,680" fill="none" stroke="#ebe7df" stroke-width="4.6" stroke-linecap="round" stroke-linejoin="round" stroke-linecap="butt"/>
<polyline points="975,718 990,726" fill="none" stroke="#ebe7df" stroke-width="4.6" stroke-linecap="round" stroke-linejoin="round" stroke-linecap="butt"/>
<polyline points="930,755 955,770" fill="none" stroke="#ebe7df" stroke-width="4.6" stroke-linecap="round" stroke-linejoin="round" stroke-linecap="butt"/>
<polyline points="893,792 922,812" fill="none" stroke="#ebe7df" stroke-width="4.6" stroke-linecap="round" stroke-linejoin="round" stroke-linecap="butt"/>
<polyline points="545,396 584,419" fill="none" stroke="#ebe7df" stroke-width="4.6" stroke-linecap="round" stroke-linejoin="round" stroke-linecap="butt"/>
<polyline points="491.7,474 416.7,616.7" fill="none" stroke="#ebe7df" stroke-width="4.6" stroke-linecap="round" stroke-linejoin="round" stroke-linecap="butt"/>
<polyline points="968,760 956,775 922,834" fill="none" stroke="#fff" stroke-width="5" stroke-linecap="round" stroke-linejoin="round" />
<path d="M1240,360 C1255,348 1280,355 1292,372 C1300,390 1296,412 1285,425 C1265,440 1235,440 1212,428 L1203,415 L1230,412 C1252,420 1270,412 1275,395 C1275,380 1262,372 1245,374 Z" fill="#d9d0c9" stroke="#c4b6ab" stroke-width=".7"/>
<path d="M1222,388 C1240,372 1268,378 1273,395 C1270,415 1250,420 1228,414 L1210,408 Z" fill="#dcdde8" stroke="#c6c6d4" stroke-width=".7"/>
<polygon points="1331,194 1392,194 1389,205 1367,240 1342,280 1319,315 1298,350 1281,340 1256,323 1267,298 1287,269 1308,236" fill="#d9d0c9" stroke="#c4b6ab" stroke-width=".7"/>
<polygon points="1377,232 1393,228 1393,300 1375,300 1360,292" fill="#d9d0c9" stroke="#c4b6ab" stroke-width=".7"/>
<polygon points="1350,336 1378,325 1393,335 1393,357 1356,363" fill="#d9d0c9" stroke="#c4b6ab" stroke-width=".7"/>
<polygon points="1348,302 1360,309 1321,365 1308,357" fill="#d9d0c9" stroke="#c4b6ab" stroke-width=".7"/>
<polygon points="1168,452 1186,438 1196,446 1192,462 1215,470 1240,480 1258,492 1262,505 1240,496 1200,482 1172,470" fill="#d9d0c9" stroke="#c4b6ab" stroke-width=".7"/>
<polygon points="1385.3,384.1 1375.9,393.4 1366.6,384 1375.9,374.7" fill="#d9d0c9" stroke="#c4b6ab" stroke-width=".7"/>
<polygon points="1375.7,394.8 1366.4,404.1 1355.8,393.4 1365.1,384.2" fill="#d9d0c9" stroke="#c4b6ab" stroke-width=".7"/>
<polygon points="1366.2,405.5 1356.8,414.8 1345,402.9 1354.4,393.6" fill="#d9d0c9" stroke="#c4b6ab" stroke-width=".7"/>
<polygon points="1354.8,414.4 1345.4,423.6 1336.1,414.2 1345.4,404.9" fill="#d9d0c9" stroke="#c4b6ab" stroke-width=".7"/>
<polygon points="1345.2,425.1 1335.9,434.3 1325.3,423.7 1334.6,414.4" fill="#d9d0c9" stroke="#c4b6ab" stroke-width=".7"/>
<polygon points="1335.7,435.8 1326.3,445 1314.5,433.2 1323.9,423.9" fill="#d9d0c9" stroke="#c4b6ab" stroke-width=".7"/>
<polygon points="1324.3,444.6 1314.9,453.9 1305.6,444.5 1314.9,435.2" fill="#d9d0c9" stroke="#c4b6ab" stroke-width=".7"/>
<polygon points="1314.7,455.3 1305.4,464.6 1294.8,453.9 1304.1,444.7" fill="#d9d0c9" stroke="#c4b6ab" stroke-width=".7"/>
<polygon points="1305.2,466 1295.8,475.3 1284,463.4 1293.4,454.1" fill="#d9d0c9" stroke="#c4b6ab" stroke-width=".7"/>
<polygon points="1293.8,474.9 1284.4,484.1 1275.1,474.7 1284.4,465.4" fill="#d9d0c9" stroke="#c4b6ab" stroke-width=".7"/>
<polygon points="1284.2,485.6 1274.9,494.8 1264.3,484.2 1273.6,474.9" fill="#d9d0c9" stroke="#c4b6ab" stroke-width=".7"/>
<polygon points="1274.7,496.3 1265.3,505.5 1253.5,493.7 1262.9,484.4" fill="#d9d0c9" stroke="#c4b6ab" stroke-width=".7"/>
<polygon points="1142,480 1172,494 1167,505 1137,492" fill="#d9d0c9" stroke="#c4b6ab" stroke-width=".7"/>
<polygon points="1137,502 1190,526 1172,574 1120,552" fill="#d9d0c9" stroke="#c4b6ab" stroke-width=".7"/>
<polygon points="1205,556 1226,562 1222,580 1228,596 1218,608 1196,600 1200,585" fill="#d9d0c9" stroke="#c4b6ab" stroke-width=".7"/>
<polygon points="1198,602 1224,606 1222,612 1197,609" fill="#d9d0c9" stroke="#c4b6ab" stroke-width=".7"/>
<polygon points="1323.2,384.6 1329.2,383 1330.8,388.8 1324.8,390.4" fill="#d9d0c9" stroke="#c4b6ab" stroke-width=".7"/>
<polygon points="1333.2,381.9 1339.2,380.3 1340.8,386.1 1334.8,387.7" fill="#d9d0c9" stroke="#c4b6ab" stroke-width=".7"/>
<polygon points="1343.2,379.2 1349.2,377.6 1350.8,383.4 1344.8,385" fill="#d9d0c9" stroke="#c4b6ab" stroke-width=".7"/>
<polygon points="1318.8,400.5 1324.2,398.5 1326.2,404.1 1320.8,406.1" fill="#d9d0c9" stroke="#c4b6ab" stroke-width=".7"/>
<polygon points="1327.8,397.2 1333.2,395.2 1335.2,400.8 1329.8,402.8" fill="#d9d0c9" stroke="#c4b6ab" stroke-width=".7"/>
<polygon points="1336.8,393.9 1342.2,391.9 1344.2,397.5 1338.8,399.5" fill="#d9d0c9" stroke="#c4b6ab" stroke-width=".7"/>
<polygon points="1396.9,411 1387.6,420.3 1378.7,411.4 1388,402.1" fill="#d9d0c9" stroke="#c4b6ab" stroke-width=".7"/>
<polygon points="1387.1,421.8 1377.8,431.1 1367.9,421.2 1377.2,411.9" fill="#d9d0c9" stroke="#c4b6ab" stroke-width=".7"/>
<polygon points="1377.3,432.6 1368,441.9 1357.1,431 1366.4,421.7" fill="#d9d0c9" stroke="#c4b6ab" stroke-width=".7"/>
<polygon points="1345,539 1393,493 1393,562 1380,562 1363,557" fill="#d9d0c9" stroke="#c4b6ab" stroke-width=".7"/>
<polygon points="1280,500 1298,492 1304,505 1288,515" fill="#d9d0c9" stroke="#c4b6ab" stroke-width=".7"/>
<polygon points="1375,585 1393,582 1393,604 1380,602" fill="#d9d0c9" stroke="#c4b6ab" stroke-width=".7"/>
<polygon points="1195,625 1215,633 1208,650 1188,642" fill="#d9d0c9" stroke="#c4b6ab" stroke-width=".7"/>
<polygon points="1192,640 1212,648 1195,690 1165,676 1178,650" fill="#d9d0c9" stroke="#c4b6ab" stroke-width=".7"/>
<polygon points="1210,668 1232,676 1222,698 1205,690" fill="#d9d0c9" stroke="#c4b6ab" stroke-width=".7"/>
<polygon points="1100,632 1128,645 1120,668 1100,660" fill="#d9d0c9" stroke="#c4b6ab" stroke-width=".7"/>
<polygon points="1127,693 1177,716 1170,730 1143,718 1138,726 1121,718" fill="#d9d0c9" stroke="#c4b6ab" stroke-width=".7"/>
<polygon points="1204.7,725.8 1200.3,734.8 1186.5,728.2 1190.9,719.2" fill="#d9d0c9" stroke="#c4b6ab" stroke-width=".7"/>
<polygon points="1200.6,736.2 1196.3,745.2 1181,737.8 1185.3,728.8" fill="#d9d0c9" stroke="#c4b6ab" stroke-width=".7"/>
<polygon points="1196.6,746.5 1192.3,755.5 1175.4,747.5 1179.7,738.5" fill="#d9d0c9" stroke="#c4b6ab" stroke-width=".7"/>
<polygon points="1190.3,755.8 1185.9,764.8 1172.1,758.2 1176.5,749.2" fill="#d9d0c9" stroke="#c4b6ab" stroke-width=".7"/>
<polygon points="1186.2,766.2 1181.9,775.2 1166.6,767.8 1170.9,758.8" fill="#d9d0c9" stroke="#c4b6ab" stroke-width=".7"/>
<polygon points="1182.2,776.5 1177.9,785.5 1161,777.5 1165.3,768.5" fill="#d9d0c9" stroke="#c4b6ab" stroke-width=".7"/>
<polygon points="1175.9,785.8 1171.5,794.8 1157.7,788.2 1162.1,779.2" fill="#d9d0c9" stroke="#c4b6ab" stroke-width=".7"/>
<polygon points="1171.8,796.2 1167.5,805.2 1152.2,797.8 1156.5,788.8" fill="#d9d0c9" stroke="#c4b6ab" stroke-width=".7"/>
<polygon points="1167.8,806.5 1163.5,815.5 1146.6,807.5 1150.9,798.5" fill="#d9d0c9" stroke="#c4b6ab" stroke-width=".7"/>
<polygon points="1161.5,815.8 1157.1,824.8 1143.3,818.2 1147.7,809.2" fill="#d9d0c9" stroke="#c4b6ab" stroke-width=".7"/>
<polygon points="1131,765 1146,755 1156,760 1146,790 1122,780" fill="#d9d0c9" stroke="#c4b6ab" stroke-width=".7"/>
<polygon points="1118,866 1133,857 1147,866 1148,890 1133,903 1115,903 1110,885" fill="#d9d0c9" stroke="#c4b6ab" stroke-width=".7"/>
<polygon points="1165,860 1195,852 1203,880 1185,890 1168,885" fill="#d9d0c9" stroke="#c4b6ab" stroke-width=".7"/>
<polygon points="1348,722 1368,712 1382,728 1370,745 1352,740" fill="#d9d0c9" stroke="#c4b6ab" stroke-width=".7"/>
<polygon points="1303,790 1325,755 1342,768 1330,795 1318,808" fill="#d9d0c9" stroke="#c4b6ab" stroke-width=".7"/>
<polygon points="1265,820 1285,797 1305,815 1290,838 1275,835" fill="#d9d0c9" stroke="#c4b6ab" stroke-width=".7"/>
<polygon points="1285,735 1300,738 1305,752 1290,756" fill="#d9d0c9" stroke="#c4b6ab" stroke-width=".7"/>
<polygon points="1305,935 1318,940 1312,955 1300,950" fill="#d9d0c9" stroke="#c4b6ab" stroke-width=".7"/>
<polygon points="1120.4,940.6 1131.4,946.1 1125.3,958.2 1114.4,952.7" fill="#d9d0c9" stroke="#c4b6ab" stroke-width=".7"/>
<polygon points="1134.4,946.8 1145.4,952.3 1138.7,965.7 1127.7,960.3" fill="#d9d0c9" stroke="#c4b6ab" stroke-width=".7"/>
<polygon points="1148.5,953 1159.5,958.5 1152.1,973.3 1141.1,967.8" fill="#d9d0c9" stroke="#c4b6ab" stroke-width=".7"/>
<polygon points="1161.5,961.2 1172.5,966.7 1166.5,978.8 1155.5,973.3" fill="#d9d0c9" stroke="#c4b6ab" stroke-width=".7"/>
<polygon points="1175.6,967.4 1186.6,972.9 1179.8,986.3 1168.9,980.8" fill="#d9d0c9" stroke="#c4b6ab" stroke-width=".7"/>
<polygon points="1189.6,973.6 1200.6,979.1 1193.2,993.8 1182.3,988.4" fill="#d9d0c9" stroke="#c4b6ab" stroke-width=".7"/>
<polygon points="1202.7,981.8 1213.6,987.3 1207.6,999.4 1196.6,993.9" fill="#d9d0c9" stroke="#c4b6ab" stroke-width=".7"/>
<polygon points="1105.6,957.5 1101.4,968.8 1090.4,964.7 1094.6,953.4" fill="#d9d0c9" stroke="#c4b6ab" stroke-width=".7"/>
<polygon points="1100.2,973.9 1096,985.2 1083.8,980.7 1088,969.4" fill="#d9d0c9" stroke="#c4b6ab" stroke-width=".7"/>
<polygon points="1094.8,990.3 1090.6,1001.7 1077.2,996.7 1081.4,985.3" fill="#d9d0c9" stroke="#c4b6ab" stroke-width=".7"/>
<polygon points="1087.6,1006.1 1083.4,1017.4 1072.4,1013.3 1076.6,1002" fill="#d9d0c9" stroke="#c4b6ab" stroke-width=".7"/>
<polygon points="1082.2,1022.5 1078,1033.8 1065.8,1029.3 1070,1018" fill="#d9d0c9" stroke="#c4b6ab" stroke-width=".7"/>
<polygon points="1134.6,979.7 1144.5,984.5 1139.7,994.3 1129.8,989.5" fill="#d9d0c9" stroke="#c4b6ab" stroke-width=".7"/>
<polygon points="1147,985.7 1156.8,990.5 1152,1000.3 1142.2,995.5" fill="#d9d0c9" stroke="#c4b6ab" stroke-width=".7"/>
<polygon points="1159.3,991.7 1169.2,996.5 1164.4,1006.3 1154.5,1001.5" fill="#d9d0c9" stroke="#c4b6ab" stroke-width=".7"/>
<polygon points="1125.5,998.5 1135.6,1003.1 1131.2,1013.1 1121,1008.6" fill="#d9d0c9" stroke="#c4b6ab" stroke-width=".7"/>
<polygon points="1138.2,1004.2 1148.3,1008.7 1143.8,1018.8 1133.7,1014.3" fill="#d9d0c9" stroke="#c4b6ab" stroke-width=".7"/>
<polygon points="1150.8,1009.9 1161,1014.4 1156.5,1024.5 1146.4,1019.9" fill="#d9d0c9" stroke="#c4b6ab" stroke-width=".7"/>
<polygon points="1115.4,1019.5 1125.5,1023.7 1121.3,1033.9 1111.1,1029.6" fill="#d9d0c9" stroke="#c4b6ab" stroke-width=".7"/>
<polygon points="1128.1,1024.8 1138.2,1029.1 1133.9,1039.2 1123.8,1034.9" fill="#d9d0c9" stroke="#c4b6ab" stroke-width=".7"/>
<polygon points="1140.7,1030.1 1150.9,1034.4 1146.6,1044.5 1136.5,1040.3" fill="#d9d0c9" stroke="#c4b6ab" stroke-width=".7"/>
<polygon points="1214.9,944.5 1224.5,957.7 1213.1,966 1203.5,952.8" fill="#d9d0c9" stroke="#c4b6ab" stroke-width=".7"/>
<polygon points="1226.9,961 1236.5,974.2 1225.1,982.5 1215.5,969.3" fill="#d9d0c9" stroke="#c4b6ab" stroke-width=".7"/>
<polygon points="1236,955 1250,950 1258,965 1246,972" fill="#d9d0c9" stroke="#c4b6ab" stroke-width=".7"/>
<polygon points="1232,985 1248,990 1244,1003 1230,999" fill="#d9d0c9" stroke="#c4b6ab" stroke-width=".7"/>
<polygon points="1185,1022 1255,1040 1254,1043 1184,1043" fill="#d9d0c9" stroke="#c4b6ab" stroke-width=".7"/>
<polygon points="1364.8,826.2 1358.6,836.1 1347.9,829.4 1354.1,819.5" fill="#d9d0c9" stroke="#c4b6ab" stroke-width=".7"/>
<polygon points="1358.1,838.2 1352,848.1 1340.1,840.7 1346.3,830.8" fill="#d9d0c9" stroke="#c4b6ab" stroke-width=".7"/>
<polygon points="1351.5,850.2 1345.3,860.1 1332.3,851.9 1338.4,842" fill="#d9d0c9" stroke="#c4b6ab" stroke-width=".7"/>
<polygon points="1343.1,861.1 1336.9,871 1326.2,864.3 1332.4,854.4" fill="#d9d0c9" stroke="#c4b6ab" stroke-width=".7"/>
<polygon points="1336.4,873.1 1330.2,883 1318.4,875.5 1324.5,865.7" fill="#d9d0c9" stroke="#c4b6ab" stroke-width=".7"/>
<polygon points="1329.7,885.1 1323.6,895 1310.5,886.8 1316.7,876.9" fill="#d9d0c9" stroke="#c4b6ab" stroke-width=".7"/>
<polygon points="1321.3,896 1315.1,905.8 1304.4,899.2 1310.6,889.3" fill="#d9d0c9" stroke="#c4b6ab" stroke-width=".7"/>
<polygon points="1314.6,908 1308.5,917.8 1296.6,910.4 1302.8,900.5" fill="#d9d0c9" stroke="#c4b6ab" stroke-width=".7"/>
<polygon points="1397.7,866.3 1391,877 1380.4,870.3 1387.1,859.6" fill="#d9d0c9" stroke="#c4b6ab" stroke-width=".7"/>
<polygon points="1390.4,879.2 1383.7,889.9 1371.9,882.4 1378.6,871.8" fill="#d9d0c9" stroke="#c4b6ab" stroke-width=".7"/>
<polygon points="1383.2,892.1 1376.4,902.8 1363.4,894.6 1370.1,884" fill="#d9d0c9" stroke="#c4b6ab" stroke-width=".7"/>
<polygon points="1374.1,904 1367.4,914.6 1356.7,907.9 1363.4,897.3" fill="#d9d0c9" stroke="#c4b6ab" stroke-width=".7"/>
<polygon points="1366.8,916.9 1360.1,927.6 1348.2,920.1 1354.9,909.4" fill="#d9d0c9" stroke="#c4b6ab" stroke-width=".7"/>
<polygon points="1359.5,929.8 1352.8,940.5 1339.7,932.3 1346.4,921.6" fill="#d9d0c9" stroke="#c4b6ab" stroke-width=".7"/>
<polygon points="1350.4,941.6 1343.7,952.3 1333,945.6 1339.7,934.9" fill="#d9d0c9" stroke="#c4b6ab" stroke-width=".7"/>
<polygon points="1343.1,954.6 1336.4,965.2 1324.6,957.8 1331.3,947.1" fill="#d9d0c9" stroke="#c4b6ab" stroke-width=".7"/>
<polygon points="1335.8,967.5 1329.1,978.2 1316.1,970 1322.8,959.3" fill="#d9d0c9" stroke="#c4b6ab" stroke-width=".7"/>
<polygon points="1380.8,973.3 1371,986.5 1359.7,978.2 1369.5,965" fill="#d9d0c9" stroke="#c4b6ab" stroke-width=".7"/>
<polygon points="1369.3,988.8 1359.5,1002 1348.2,993.7 1358,980.5" fill="#d9d0c9" stroke="#c4b6ab" stroke-width=".7"/>
<polygon points="1357.8,1004.3 1348,1017.5 1336.7,1009.2 1346.5,996" fill="#d9d0c9" stroke="#c4b6ab" stroke-width=".7"/>
<polygon points="1346.3,1019.8 1336.5,1033 1325.2,1024.7 1335,1011.5" fill="#d9d0c9" stroke="#c4b6ab" stroke-width=".7"/>
<polygon points="1396.2,1017.9 1382.2,1031.1 1373.3,1021.6 1387.3,1008.4" fill="#d9d0c9" stroke="#c4b6ab" stroke-width=".7"/>
<polygon points="1379.7,1033.4 1365.7,1046.6 1356.8,1037.1 1370.8,1023.9" fill="#d9d0c9" stroke="#c4b6ab" stroke-width=".7"/>
<polygon points="1304,931 1312,933 1310,941 1302,939" fill="#d9d0c9" stroke="#c4b6ab" stroke-width=".7"/>
<polygon points="1314,942 1324,946 1320,958 1310,954" fill="#d9d0c9" stroke="#c4b6ab" stroke-width=".7"/>
<polygon points="1367.3,861.7 1363.4,868 1358.2,864.8 1362.1,858.5" fill="#d9d0c9" stroke="#c4b6ab" stroke-width=".7"/>
<polygon points="1360.8,872.2 1356.9,878.5 1351.7,875.3 1355.6,869" fill="#d9d0c9" stroke="#c4b6ab" stroke-width=".7"/>
<polygon points="1354.3,882.7 1350.4,889 1345.2,885.8 1349.1,879.5" fill="#d9d0c9" stroke="#c4b6ab" stroke-width=".7"/>
<polygon points="1347.8,893.2 1343.9,899.5 1338.7,896.3 1342.6,890" fill="#d9d0c9" stroke="#c4b6ab" stroke-width=".7"/>
<polygon points="981,904 1033,952 1004,985 990,973 982,982 954,932" fill="#d9d0c9" stroke="#c4b6ab" stroke-width=".7"/>
<polygon points="937,906 950,890 957,896 953,903 962,898 965,904 953,913 945,915" fill="#d9d0c9" stroke="#c4b6ab" stroke-width=".7"/>
<polygon points="922,842 927,838 935,852 930,856" fill="#d9d0c9" stroke="#c4b6ab" stroke-width=".7"/>
<polygon points="932,856 937,852 946,866 941,870" fill="#d9d0c9" stroke="#c4b6ab" stroke-width=".7"/>
<polygon points="1047,870 1058,845 1071,850 1060,878" fill="#d9d0c9" stroke="#c4b6ab" stroke-width=".7"/>
<polygon points="1044,820 1055,822 1053,830 1043,828" fill="#d9d0c9" stroke="#c4b6ab" stroke-width=".7"/>
<polygon points="1100,612 1110,615 1105,628 1100,626" fill="#d9d0c9" stroke="#c4b6ab" stroke-width=".7"/>
<polygon points="503,346 511,349 508,355 501,352" fill="#d0c8c0" />
<polygon points="519,372 526,375 524,381 517,378" fill="#d9c9b8" />
<path d="M780,229 h11 l-1,-2 h-3 l2,-3 h-2 l1.500,-3 h-2 l-1,-3 l-1,3 h-2 l1.500,3 h-2 l2,3 h-3z" fill="#2d8a3a"/>
<path d="M535,396 l10,-2 l1,4 l-10,3z M536,402 l11,-2 l-1,3 l-9,1z" fill="#1c7de0"/>
<path d="M1071,622 h10 v6 h-10z M1073,628 l-1,3 M1079,628 l1,3" fill="#1c9ae0" stroke="#1c9ae0" stroke-width="1"/>
<path d="M1205,520 l4,-3 l4,4 l-2,5 h-5z" fill="#2d8a3a"/>
<path d="M1094,520 h12 M1098,520 v14 M1103,520 v14 M1096,526 h9 M1096,531 h9" stroke="#666" stroke-width="1.200" fill="none"/>
<text x="583" y="562" text-anchor="middle" style="font-size:15.5px;fill:#5d7fb8;font-style:italic;" transform="rotate(2.5 583 562)" >Nieuwe Nack</text>
<text x="941" y="339" text-anchor="middle" style="font-size:10px;fill:#6b84c4;font-style:italic;" transform="rotate(-60 941 339)" >Maas</text>
<text x="763" y="710" text-anchor="middle" style="font-size:10px;fill:#6b84c4;font-style:italic;" transform="rotate(-60 763 710)" >Maas</text>
<text x="1007" y="540" text-anchor="middle" style="font-size:13px;fill:#6a6ae0;font-style:italic;" >Steelhaven,</text>
<text x="1007" y="556.3" text-anchor="middle" style="font-size:13px;fill:#6a6ae0;font-style:italic;" >La Bonne</text>
<text x="1007" y="572.6" text-anchor="middle" style="font-size:13px;fill:#6a6ae0;font-style:italic;" >Aventure</text>
<text x="1007" y="588.9" text-anchor="middle" style="font-size:13px;fill:#6a6ae0;font-style:italic;" >en WV</text>
<text x="1007" y="605.2" text-anchor="middle" style="font-size:13px;fill:#6a6ae0;font-style:italic;" >Nautilus</text>
<text x="476" y="200" text-anchor="middle" style="font-size:10px;fill:#1f6fe5;" >Hatenboer</text>
<text x="1077" y="645" text-anchor="middle" style="font-size:10px;fill:#1f6fe5;" >Helenawerf</text>
<text x="1077" y="657" text-anchor="middle" style="font-size:10px;fill:#1f6fe5;" >Watersport</text>
<text x="987" y="739" text-anchor="middle" style="font-size:9.5px;fill:#6a8ae0;font-style:italic;" >Marina</text>
<text x="987" y="750" text-anchor="middle" style="font-size:9.5px;fill:#6a8ae0;font-style:italic;" >Het Steel</text>
<text x="1300" y="240" text-anchor="middle" style="font-size:10.2px;fill:#000;" transform="rotate(-57 1300 240)" stroke="#ffffff" stroke-width="2" paint-order="stroke" stroke-linejoin="round" stroke-opacity=".75" >Maasboulevard</text>
<text x="1222" y="364" text-anchor="middle" style="font-size:10.2px;fill:#000;" transform="rotate(-56 1222 364)" stroke="#ffffff" stroke-width="2" paint-order="stroke" stroke-linejoin="round" stroke-opacity=".75" >Maasboulevard</text>
<text x="1349" y="285" text-anchor="middle" style="font-size:10.2px;fill:#000;" transform="rotate(-57 1349 285)" stroke="#ffffff" stroke-width="2" paint-order="stroke" stroke-linejoin="round" stroke-opacity=".75" >Sint Jacobslaan</text>
<text x="1331" y="372" text-anchor="middle" style="font-size:10.2px;fill:#000;" stroke="#ffffff" stroke-width="2" paint-order="stroke" stroke-linejoin="round" stroke-opacity=".75" >Overbrugge</text>
<text x="1276" y="441" text-anchor="middle" style="font-size:10.2px;fill:#000;" transform="rotate(-32 1276 441)" stroke="#ffffff" stroke-width="2" paint-order="stroke" stroke-linejoin="round" stroke-opacity=".75" >Achter de Ster</text>
<text x="1205" y="494" text-anchor="middle" style="font-size:10.2px;fill:#000;" transform="rotate(18 1205 494)" stroke="#ffffff" stroke-width="2" paint-order="stroke" stroke-linejoin="round" stroke-opacity=".75" >De Ster</text>
<text x="1298" y="534" text-anchor="middle" style="font-size:10.2px;fill:#000;" transform="rotate(28 1298 534)" stroke="#ffffff" stroke-width="2" paint-order="stroke" stroke-linejoin="round" stroke-opacity=".75" >De Ster</text>
<text x="1382" y="570" text-anchor="middle" style="font-size:10.2px;fill:#000;" transform="rotate(10 1382 570)" stroke="#ffffff" stroke-width="2" paint-order="stroke" stroke-linejoin="round" stroke-opacity=".75" >De St</text>
<text x="1323" y="458" text-anchor="middle" style="font-size:10.2px;fill:#000;" transform="rotate(-46 1323 458)" stroke="#ffffff" stroke-width="2" paint-order="stroke" stroke-linejoin="round" stroke-opacity=".75" >Voorstad Sint Jacob</text>
<text x="1172" y="746" text-anchor="middle" style="font-size:10.2px;fill:#000;" transform="rotate(-62 1172 746)" stroke="#ffffff" stroke-width="2" paint-order="stroke" stroke-linejoin="round" stroke-opacity=".75" >Voorstad Sint Jacob</text>
<text x="1059" y="746" text-anchor="middle" style="font-size:10px;fill:#000;" transform="rotate(-66 1059 746)" stroke="#ffffff" stroke-width="2" paint-order="stroke" stroke-linejoin="round" stroke-opacity=".75" >Voorstad Sint Jacob</text>
<text x="1005" y="985" text-anchor="middle" style="font-size:10.2px;fill:#000;" transform="rotate(-50 1005 985)" stroke="#ffffff" stroke-width="2" paint-order="stroke" stroke-linejoin="round" stroke-opacity=".75" >Voorstad Sint Jacob</text>
<text x="952" y="513" text-anchor="middle" style="font-size:10px;fill:#000;" transform="rotate(-62 952 513)" stroke="#ffffff" stroke-width="2" paint-order="stroke" stroke-linejoin="round" stroke-opacity=".75" >agerhaven</text>
<text x="1350" y="771" text-anchor="middle" style="font-size:10.2px;fill:#000;" transform="rotate(42 1350 771)" stroke="#ffffff" stroke-width="2" paint-order="stroke" stroke-linejoin="round" stroke-opacity=".75" >Ackros</text>
<text x="1352" y="810" text-anchor="middle" style="font-size:10.2px;fill:#000;" transform="rotate(-62 1352 810)" stroke="#ffffff" stroke-width="2" paint-order="stroke" stroke-linejoin="round" stroke-opacity=".75" >Akcros</text>
<text x="1149" y="994" text-anchor="middle" style="font-size:10.2px;fill:#000;" transform="rotate(24 1149 994)" stroke="#ffffff" stroke-width="2" paint-order="stroke" stroke-linejoin="round" stroke-opacity=".75" >Happenhof</text>
<text x="1232" y="977" text-anchor="middle" style="font-size:10.2px;fill:#000;" transform="rotate(-72 1232 977)" stroke="#ffffff" stroke-width="2" paint-order="stroke" stroke-linejoin="round" stroke-opacity=".75" >Steeleiland</text>
<text x="1256" y="1031" text-anchor="middle" style="font-size:10.2px;fill:#000;" transform="rotate(17 1256 1031)" stroke="#ffffff" stroke-width="2" paint-order="stroke" stroke-linejoin="round" stroke-opacity=".75" >Molenweg</text>
<text x="1313" y="1020" text-anchor="middle" style="font-size:10.2px;fill:#000;" transform="rotate(-50 1313 1020)" stroke="#ffffff" stroke-width="2" paint-order="stroke" stroke-linejoin="round" stroke-opacity=".75" >Molenweg</text>
<text x="1322" y="735" text-anchor="middle" style="font-size:14px;fill:#2d8a3a;font-style:italic;" transform="rotate(3 1322 735)" stroke="#ffffff" stroke-width="2" paint-order="stroke" stroke-linejoin="round" stroke-opacity=".75" >Park Akcros</text>
<text x="1358" y="712" text-anchor="middle" style="font-size:10.5px;fill:#555;" stroke="#ffffff" stroke-width="2" paint-order="stroke" stroke-linejoin="round" stroke-opacity=".75" >Fabrieksschoorst</text>
<text x="1296" y="745" text-anchor="middle" style="font-size:10.5px;fill:#555;" stroke="#ffffff" stroke-width="2" paint-order="stroke" stroke-linejoin="round" stroke-opacity=".75" >Gebouw</text>
<text x="1296" y="757" text-anchor="middle" style="font-size:10.5px;fill:#555;" stroke="#ffffff" stroke-width="2" paint-order="stroke" stroke-linejoin="round" stroke-opacity=".75" >1869</text>
<text x="1160" y="533" text-anchor="middle" style="font-size:10.5px;fill:#555;" stroke="#ffffff" stroke-width="2" paint-order="stroke" stroke-linejoin="round" stroke-opacity=".75" >Helenawerf</text>
<text x="1160" y="546" text-anchor="middle" style="font-size:10.5px;fill:#555;" stroke="#ffffff" stroke-width="2" paint-order="stroke" stroke-linejoin="round" stroke-opacity=".75" >Watersport</text>
<text x="1197" y="412" text-anchor="middle" style="font-size:10px;fill:#666;" stroke="#ffffff" stroke-width="2" paint-order="stroke" stroke-linejoin="round" stroke-opacity=".75" >Solea</text>
<text x="1197" y="424" text-anchor="middle" style="font-size:10px;fill:#666;" stroke="#ffffff" stroke-width="2" paint-order="stroke" stroke-linejoin="round" stroke-opacity=".75" >Toren</text>
<text x="1236" y="690" text-anchor="middle" style="font-size:9.5px;fill:#6b84c4;font-style:italic;" transform="rotate(-68 1236 690)" >Roer</text>
<text x="1239" y="885" text-anchor="middle" style="font-size:8.5px;fill:#6b84c4;font-style:italic;" transform="rotate(3 1239 885)" >Klein Hellegat</text>
<text x="1257" y="898" text-anchor="middle" style="font-size:8.5px;fill:#6b84c4;font-style:italic;" transform="rotate(48 1257 898)" >Roer</text>
<text x="999" y="1032" text-anchor="middle" style="font-size:8.5px;fill:#6b84c4;font-style:italic;" transform="rotate(-45 999 1032)" >Roer</text>
<text x="1355.5" y="449" text-anchor="middle" style="font-size:13px;fill:#1f8be0;" >P</text>
<text x="1327" y="223" text-anchor="middle" style="font-size:8.2px;fill:#777;" >35</text>
<text x="1372" y="213" text-anchor="middle" style="font-size:8.2px;fill:#777;" >20</text>
<text x="1364" y="235" text-anchor="middle" style="font-size:8.2px;fill:#777;" >34</text>
<text x="1355" y="252" text-anchor="middle" style="font-size:8.2px;fill:#777;" >36</text>
<text x="1345" y="266" text-anchor="middle" style="font-size:8.2px;fill:#777;" >38</text>
<text x="1279" y="288" text-anchor="middle" style="font-size:8.2px;fill:#777;" >57</text>
<text x="1331" y="286" text-anchor="middle" style="font-size:8.2px;fill:#777;" >52</text>
<text x="1324" y="301" text-anchor="middle" style="font-size:8.2px;fill:#777;" >54</text>
<text x="1313" y="316" text-anchor="middle" style="font-size:8.2px;fill:#777;" >56</text>
<text x="1265" y="312" text-anchor="middle" style="font-size:8.2px;fill:#777;" >73</text>
<text x="1261" y="323" text-anchor="middle" style="font-size:8.2px;fill:#777;" >87</text>
<text x="1299" y="335" text-anchor="middle" style="font-size:8.2px;fill:#777;" >74</text>
<text x="1293" y="346" text-anchor="middle" style="font-size:8.2px;fill:#777;" >72</text>
<text x="1322" y="344" text-anchor="middle" style="font-size:8.2px;fill:#777;" >29</text>
<text x="1316" y="360" text-anchor="middle" style="font-size:8.2px;fill:#777;" >91</text>
<text x="1330" y="331" text-anchor="middle" style="font-size:8.2px;fill:#777;" >41</text>
<text x="1344" y="321" text-anchor="middle" style="font-size:8.2px;fill:#777;" >81</text>
<text x="1353" y="309" text-anchor="middle" style="font-size:8.2px;fill:#777;" >77</text>
<text x="1365" y="292" text-anchor="middle" style="font-size:8.2px;fill:#777;" >74</text>
<text x="1372" y="281" text-anchor="middle" style="font-size:8.2px;fill:#777;" >70</text>
<text x="1380" y="268" text-anchor="middle" style="font-size:8.2px;fill:#777;" >66</text>
<text x="1382" y="252" text-anchor="middle" style="font-size:8.2px;fill:#777;" >5</text>
<text x="1362" y="355" text-anchor="middle" style="font-size:8.2px;fill:#777;" >20</text>
<text x="1382" y="358" text-anchor="middle" style="font-size:8.2px;fill:#777;" >16</text>
<text x="1254" y="370" text-anchor="middle" style="font-size:8.2px;fill:#777;" >1</text>
<text x="1265" y="374" text-anchor="middle" style="font-size:8.2px;fill:#777;" >2</text>
<text x="1282" y="368" text-anchor="middle" style="font-size:8.2px;fill:#777;" >60</text>
<text x="1275" y="381" text-anchor="middle" style="font-size:8.2px;fill:#777;" >3</text>
<text x="1284" y="398" text-anchor="middle" style="font-size:8.2px;fill:#777;" >23</text>
<text x="1280" y="412" text-anchor="middle" style="font-size:8.2px;fill:#777;" >5</text>
<text x="1275" y="423" text-anchor="middle" style="font-size:8.2px;fill:#777;" >27</text>
<text x="1264" y="434" text-anchor="middle" style="font-size:8.2px;fill:#777;" >49</text>
<text x="1247" y="438" text-anchor="middle" style="font-size:8.2px;fill:#777;" >71</text>
<text x="1231" y="433" text-anchor="middle" style="font-size:8.2px;fill:#777;" >73</text>
<text x="1217" y="423" text-anchor="middle" style="font-size:8.2px;fill:#777;" >75</text>
<text x="1182" y="450" text-anchor="middle" style="font-size:8.2px;fill:#777;" >101A</text>
<text x="1177" y="474" text-anchor="middle" style="font-size:8.2px;fill:#777;" >26A</text>
<text x="1159" y="486" text-anchor="middle" style="font-size:8.2px;fill:#777;" >13</text>
<text x="1222" y="487" text-anchor="middle" style="font-size:8.2px;fill:#777;" >14</text>
<text x="1240" y="493" text-anchor="middle" style="font-size:8.2px;fill:#777;" >8</text>
<text x="1253" y="497" text-anchor="middle" style="font-size:8.2px;fill:#777;" >2</text>
<text x="1267" y="498" text-anchor="middle" style="font-size:8.2px;fill:#777;" >62</text>
<text x="1277" y="486" text-anchor="middle" style="font-size:8.2px;fill:#777;" >58</text>
<text x="1279" y="477" text-anchor="middle" style="font-size:8.2px;fill:#777;" >50E</text>
<text x="1292" y="463" text-anchor="middle" style="font-size:8.2px;fill:#777;" >50C</text>
<text x="1312" y="447" text-anchor="middle" style="font-size:8.2px;fill:#777;" >50</text>
<text x="1286" y="509" text-anchor="middle" style="font-size:8.2px;fill:#777;" >35</text>
<text x="1354" y="414" text-anchor="middle" style="font-size:8.2px;fill:#777;" >36</text>
<text x="1382" y="412" text-anchor="middle" style="font-size:8.2px;fill:#777;" >23</text>
<text x="1368" y="428" text-anchor="middle" style="font-size:8.2px;fill:#777;" >31</text>
<text x="1385" y="505" text-anchor="middle" style="font-size:8.2px;fill:#777;" >58</text>
<text x="1375" y="518" text-anchor="middle" style="font-size:8.2px;fill:#777;" >54</text>
<text x="1363" y="534" text-anchor="middle" style="font-size:8.2px;fill:#777;" >76</text>
<text x="1360" y="546" text-anchor="middle" style="font-size:8.2px;fill:#777;" >100</text>
<text x="1385" y="555" text-anchor="middle" style="font-size:8.2px;fill:#777;" >96</text>
<text x="1220" y="590" text-anchor="middle" style="font-size:8.2px;fill:#777;" >72</text>
<text x="1211" y="637" text-anchor="middle" style="font-size:8.2px;fill:#777;" >80</text>
<text x="1204" y="651" text-anchor="middle" style="font-size:8.2px;fill:#777;" >86</text>
<text x="1197" y="665" text-anchor="middle" style="font-size:8.2px;fill:#777;" >90</text>
<text x="1191" y="678" text-anchor="middle" style="font-size:8.2px;fill:#777;" >94</text>
<text x="1186" y="689" text-anchor="middle" style="font-size:8.2px;fill:#777;" >96</text>
<text x="1218" y="667" text-anchor="middle" style="font-size:8.2px;fill:#777;" >43</text>
<text x="1213" y="679" text-anchor="middle" style="font-size:8.2px;fill:#777;" >47</text>
<text x="1151" y="807" text-anchor="middle" style="font-size:8.2px;fill:#777;" >73</text>
<text x="1145" y="824" text-anchor="middle" style="font-size:8.2px;fill:#777;" >79</text>
<text x="1126" y="872" text-anchor="middle" style="font-size:8.2px;fill:#777;" >123</text>
<text x="1125" y="887" text-anchor="middle" style="font-size:8.2px;fill:#777;" >131</text>
<text x="1125" y="901" text-anchor="middle" style="font-size:8.2px;fill:#777;" >119</text>
<text x="1176" y="858" text-anchor="middle" style="font-size:8.2px;fill:#777;" >89</text>
<text x="1191" y="864" text-anchor="middle" style="font-size:8.2px;fill:#777;" >87</text>
<text x="1180" y="878" text-anchor="middle" style="font-size:8.2px;fill:#777;" >99</text>
<text x="1376" y="730" text-anchor="middle" style="font-size:8.2px;fill:#777;" >14</text>
<text x="1360" y="748" text-anchor="middle" style="font-size:8.2px;fill:#777;" >10</text>
<text x="1319" y="770" text-anchor="middle" style="font-size:8.2px;fill:#777;" >50</text>
<text x="1334" y="775" text-anchor="middle" style="font-size:8.2px;fill:#777;" >36</text>
<text x="1315" y="780" text-anchor="middle" style="font-size:8.2px;fill:#777;" >44</text>
<text x="1318" y="793" text-anchor="middle" style="font-size:8.2px;fill:#777;" >32</text>
<text x="1286" y="809" text-anchor="middle" style="font-size:8.2px;fill:#777;" >64</text>
<text x="1270" y="825" text-anchor="middle" style="font-size:8.2px;fill:#777;" >60</text>
<text x="1283" y="830" text-anchor="middle" style="font-size:8.2px;fill:#777;" >68</text>
<text x="1123" y="954" text-anchor="middle" style="font-size:8.2px;fill:#777;" >14</text>
<text x="1138" y="964" text-anchor="middle" style="font-size:8.2px;fill:#777;" >12</text>
<text x="1152" y="969" text-anchor="middle" style="font-size:8.2px;fill:#777;" >10</text>
<text x="1167" y="974" text-anchor="middle" style="font-size:8.2px;fill:#777;" >8</text>
<text x="1181" y="981" text-anchor="middle" style="font-size:8.2px;fill:#777;" >6</text>
<text x="1195" y="988" text-anchor="middle" style="font-size:8.2px;fill:#777;" >4</text>
<text x="1205" y="992" text-anchor="middle" style="font-size:8.2px;fill:#777;" >2</text>
<text x="1213" y="951" text-anchor="middle" style="font-size:8.2px;fill:#777;" >4</text>
<text x="1227" y="964" text-anchor="middle" style="font-size:8.2px;fill:#777;" >2</text>
<text x="1127" y="998" text-anchor="middle" style="font-size:8.2px;fill:#777;" >9</text>
<text x="1153" y="1008" text-anchor="middle" style="font-size:8.2px;fill:#777;" >5</text>
<text x="1121" y="1012" text-anchor="middle" style="font-size:8.2px;fill:#777;" >11</text>
<text x="1148" y="1020" text-anchor="middle" style="font-size:8.2px;fill:#777;" >3</text>
<text x="1115" y="1028" text-anchor="middle" style="font-size:8.2px;fill:#777;" >13</text>
<text x="1359" y="827" text-anchor="middle" style="font-size:8.2px;fill:#777;" >7</text>
<text x="1351" y="839" text-anchor="middle" style="font-size:8.2px;fill:#777;" >11</text>
<text x="1345" y="850" text-anchor="middle" style="font-size:8.2px;fill:#777;" >15</text>
<text x="1338" y="861" text-anchor="middle" style="font-size:8.2px;fill:#777;" >19</text>
<text x="1330" y="873" text-anchor="middle" style="font-size:8.2px;fill:#777;" >23</text>
<text x="1321" y="888" text-anchor="middle" style="font-size:8.2px;fill:#777;" >27</text>
<text x="1312" y="900" text-anchor="middle" style="font-size:8.2px;fill:#777;" >31</text>
<text x="1302" y="913" text-anchor="middle" style="font-size:8.2px;fill:#777;" >35</text>
<text x="1382" y="876" text-anchor="middle" style="font-size:8.2px;fill:#777;" >22</text>
<text x="1376" y="889" text-anchor="middle" style="font-size:8.2px;fill:#777;" >26</text>
<text x="1371" y="903" text-anchor="middle" style="font-size:8.2px;fill:#777;" >30</text>
<text x="1366" y="916" text-anchor="middle" style="font-size:8.2px;fill:#777;" >34</text>
<text x="1360" y="929" text-anchor="middle" style="font-size:8.2px;fill:#777;" >38</text>
<text x="1355" y="942" text-anchor="middle" style="font-size:8.2px;fill:#777;" >42</text>
<text x="1347" y="955" text-anchor="middle" style="font-size:8.2px;fill:#777;" >46</text>
<text x="1340" y="967" text-anchor="middle" style="font-size:8.2px;fill:#777;" >50</text>
<text x="1331" y="978" text-anchor="middle" style="font-size:8.2px;fill:#777;" >54</text>
<text x="1366" y="971" text-anchor="middle" style="font-size:8.2px;fill:#777;" >25</text>
<text x="1358" y="983" text-anchor="middle" style="font-size:8.2px;fill:#777;" >29</text>
<text x="1349" y="994" text-anchor="middle" style="font-size:8.2px;fill:#777;" >33</text>
<text x="1341" y="1006" text-anchor="middle" style="font-size:8.2px;fill:#777;" >37</text>
<text x="1096" y="987" text-anchor="middle" style="font-size:8.2px;fill:#777;" >18</text>
<text x="1095" y="999" text-anchor="middle" style="font-size:8.2px;fill:#777;" >20</text>
<text x="1091" y="1012" text-anchor="middle" style="font-size:8.2px;fill:#777;" >22</text>
<text x="1081" y="1029" text-anchor="middle" style="font-size:8.2px;fill:#777;" >24</text>
<text x="1113" y="967" text-anchor="middle" style="font-size:8.2px;fill:#777;" >16</text>
<text x="1218" y="1032" text-anchor="middle" style="font-size:8.2px;fill:#777;" >12</text>
<rect x="1012" y="194" width="73" height="13" fill="#08306b"/>
<rect x="976" y="206" width="36" height="37" fill="#08306b"/>
<rect x="940" y="243" width="36" height="37" fill="#08306b"/>
<rect x="903" y="280" width="37" height="36" fill="#08306b"/>
<rect x="866" y="316" width="37" height="36" fill="#08306b"/>
<rect x="830" y="352" width="36" height="37" fill="#08306b"/>
<rect x="794" y="389" width="36" height="37" fill="#08306b"/>
<rect x="830" y="426" width="36" height="36" fill="#db0e0f"/>
<rect x="866" y="462" width="37" height="36" fill="#08306b"/>
<rect x="903" y="498" width="37" height="74" fill="#08306b"/>
<rect x="940" y="572" width="36" height="36" fill="#08306b"/>
<rect x="976" y="608" width="36" height="36" fill="#08306b"/>
<rect x="1012" y="644" width="37" height="37" fill="#08306b"/>
<rect x="940" y="681" width="72" height="37" fill="#08306b"/>
<rect x="903" y="718" width="37" height="36" fill="#08306b"/>
<rect x="866" y="754" width="37" height="36" fill="#08306b"/>
<rect x="830" y="790" width="36" height="37" fill="#08306b"/>
<rect x="794" y="827" width="109" height="37" fill="#08306b"/>
<rect x="866" y="864" width="37" height="109" fill="#08306b"/>
<rect x="903" y="973" width="37" height="37" fill="#08306b"/>
<rect x="866" y="1010" width="37" height="33" fill="#08306b"/>
<rect x="757" y="426" width="37" height="36" fill="#f7fbff"/>
<rect x="720" y="462" width="37" height="36" fill="#f7fbff"/>
<rect x="684" y="498" width="36" height="37" fill="#f7fbff"/>
<rect x="648" y="535" width="36" height="37" fill="#f7fbff"/>
<rect x="611" y="572" width="37" height="36" fill="#f7fbff"/>
<rect x="574" y="608" width="37" height="36" fill="#f7fbff"/>
<rect x="538" y="644" width="36" height="37" fill="#f7fbff"/>
<rect x="502" y="681" width="36" height="37" fill="#f7fbff"/>
<rect x="465" y="718" width="37" height="36" fill="#f7fbff"/>
<rect x="428" y="754" width="37" height="36" fill="#f7fbff"/>
<rect x="392" y="790" width="36" height="37" fill="#f7fbff"/>
<rect x="356" y="827" width="36" height="37" fill="#f7fbff"/>
<rect x="319" y="864" width="37" height="36" fill="#f7fbff"/>
<rect x="282" y="900" width="37" height="36" fill="#f7fbff"/>
<rect x="258" y="936" width="24" height="37" fill="#f7fbff"/>
</svg>
<div class="b " style="left:257px;top:193px;width:1137px;height:851px;border:1px solid #a4a4a8;box-sizing:border-box;"></div>
<div class="b " style="left:1394px;top:194px;width:526px;height:852px;background:#f0f0f0;"></div>
<span class="t" style="left:1407.2px;top:195px;font-size:17.5px;line-height:20px;color:#000;letter-spacing:-0.228px;">Layer Styling</span>
<svg class="b" style="left:1892px;top:198px" width="28" height="12" viewBox="0 0 28 12">
<rect x="0.5" y="0.5" width="10.500" height="10.500" rx="2" fill="none" stroke="#555" stroke-width="1"/>
<path d="M4.500 4.500h4v4h-4z M3 6.500v-3.500h3.500" fill="none" stroke="#555" stroke-width="0.9"/>
<rect x="15.5" y="0.5" width="10.500" height="10.500" rx="2" fill="none" stroke="#555" stroke-width="1"/>
<path d="M18 3l5.500 5.500M23.500 3l-5.500 5.500" stroke="#444" stroke-width="1.900" fill="none"/>
</svg>
<div class="b " style="left:1406px;top:217.5px;width:511px;height:31px;background:linear-gradient(#fefefe,#f1f1f1 50%,#ebebeb);border:1px solid #adadad;border-radius:3px;box-sizing:border-box;"></div>
<svg class="b" style="left:1415px;top:224px" width="20" height="20"><rect x="0.00" y="0.00" width="6.87" height="6.87" fill="#2b3a55"/><rect x="6.67" y="0.00" width="6.87" height="6.87" fill="#a9c4e4"/><rect x="13.33" y="0.00" width="6.87" height="6.87" fill="#2b3a55"/><rect x="0.00" y="6.67" width="6.87" height="6.87" fill="#a9c4e4"/><rect x="6.67" y="6.67" width="6.87" height="6.87" fill="#2b3a55"/><rect x="13.33" y="6.67" width="6.87" height="6.87" fill="#a9c4e4"/><rect x="0.00" y="13.33" width="6.87" height="6.87" fill="#2b3a55"/><rect x="6.67" y="13.33" width="6.87" height="6.87" fill="#a9c4e4"/></svg>
<span class="t" style="left:1439.4px;top:224px;font-size:17.5px;line-height:20px;color:#000;letter-spacing:-0.468px;">outlet</span>
<svg class="b" style="left:1894px;top:229.75px" width="12" height="6.5"><path d="M0 0H12L6 6.5Z" fill="#505050"/></svg>
<div class="b " style="left:1406px;top:290px;width:38px;height:713.5px;background:#606060;"></div>
<div class="b" style="left:1445px;top:258px;width:451px;height:706.5px;overflow:hidden"><div style="position:absolute;left:-1445px;top:-258px"><div class="b " style="left:1460px;top:271.5px;width:423px;height:31.5px;background:linear-gradient(#fefefe,#f1f1f1 50%,#ebebeb);border:1px solid #adadad;border-radius:3px;box-sizing:border-box;"></div><svg class="b" style="left:1468px;top:276px" width="20" height="23" viewBox="0 0 20 23">
<rect x="1" y="0.5" width="5.500" height="5.500" fill="#2b7de0" stroke="#0b3c8c"/><rect x="1" y="8.300" width="5.500" height="5.500" fill="#1c9a50" stroke="#0b5a2c"/><rect x="1" y="16" width="5.500" height="5.500" fill="#a11212" stroke="#5a0808"/>
<path d="M8.500 3.500h10M8.500 11h4M8.500 19h10" stroke="#8a8a8a" stroke-width="1.300"/></svg><span class="t" style="left:1493.5px;top:278px;font-size:17.5px;line-height:20px;color:#000;letter-spacing:-0.886px;">Paletted/Unique values</span><svg class="b" style="left:1860px;top:283.75px" width="12" height="6.5"><path d="M0 0H12L6 6.5Z" fill="#505050"/></svg><span class="t" style="left:1463.2px;top:319px;font-size:17.5px;line-height:20px;color:#000;letter-spacing:-1.393px;">Band</span><div class="b " style="left:1552px;top:315px;width:328px;height:27px;background:linear-gradient(#fefefe,#f1f1f1 50%,#ebebeb);border:1px solid #adadad;border-radius:3px;box-sizing:border-box;"></div><span class="t" style="left:1557px;top:319px;font-size:17.5px;line-height:20px;color:#000;letter-spacing:-1.244px;">Band 1</span><svg class="b" style="left:1857px;top:324.75px" width="12" height="6.5"><path d="M0 0H12L6 6.5Z" fill="#505050"/></svg><span class="t" style="left:1463px;top:356px;font-size:17.5px;line-height:20px;color:#000;letter-spacing:-0.705px;">Color ramp</span><div class="b " style="left:1552px;top:351px;width:309.5px;height:28px;background:linear-gradient(#fefefe,#f3f3f3 45%,#ebebeb 50%,#e6e6e6);border:1px solid #adadad;border-radius:3px;box-sizing:border-box;"></div><span class="t" style="left:1653.7px;top:356px;font-size:17.5px;line-height:20px;color:#000;letter-spacing:-0.876px;">Random colors</span><div class="b " style="left:1862.5px;top:351px;width:17.5px;height:28px;background:linear-gradient(#fefefe,#f3f3f3 45%,#ebebeb 50%,#e6e6e6);border:1px solid #adadad;border-radius:3px;box-sizing:border-box;"></div><svg class="b" style="left:1866.5px;top:362.5px" width="9" height="5"><path d="M0 0H9L4.5 5Z" fill="#505050"/></svg><div class="b " style="left:1463px;top:388px;width:417px;height:280px;background:#fff;border:1px solid #a5a5a5;box-sizing:border-box;"></div><div class="b " style="left:1464px;top:389px;width:415px;height:30.5px;background:linear-gradient(#ffffff,#f7f7f7 50%,#eeeeee);border-bottom:1px solid #b9b9b9;box-sizing:border-box;"></div><div class="b " style="left:1613px;top:389px;width:1px;height:30px;background:#d0d0d0;"></div><div class="b " style="left:1702px;top:389px;width:1px;height:30px;background:#d0d0d0;"></div><span class="t" style="left:1467px;top:395px;font-size:17.5px;line-height:20px;color:#000;letter-spacing:-0.792px;">Value</span><span class="t" style="left:1617px;top:395px;font-size:17.5px;line-height:20px;color:#000;letter-spacing:-0.864px;">Color</span><span class="t" style="left:1706px;top:395px;font-size:17.5px;line-height:20px;color:#000;letter-spacing:-1.264px;">Label</span><div class="b " style="left:1625px;top:420.7px;width:66px;height:66.3px;background:#db0e0f;border-radius:11px;"></div><span class="t" style="left:1498px;top:447px;font-size:17.5px;line-height:20px;color:#000;">1</span><span class="t" style="left:1706.8px;top:447px;font-size:17.5px;line-height:20px;color:#000;">1</span><div class="b " style="left:1463px;top:678px;width:136px;height:30px;background:linear-gradient(#fefefe,#f3f3f3 45%,#ebebeb 50%,#e6e6e6);border:1px solid #adadad;border-radius:3px;box-sizing:border-box;"></div><span class="t" style="left:1504.5px;top:684px;font-size:17.5px;line-height:20px;color:#000;letter-spacing:-1.095px;">Classify</span><div class="b " style="left:1608px;top:677px;width:39px;height:32.5px;background:linear-gradient(#fefefe,#f3f3f3 45%,#ebebeb 50%,#e6e6e6);border:1px solid #adadad;border-radius:3px;box-sizing:border-box;"></div><svg class="b" style="left:1616px;top:682px" width="23" height="23" viewBox="0 0 23 23"><path d="M8 1.500h7v6.500h6.500v7h-6.500v6.500h-7v-6.500h-6.500v-7h6.500z" fill="#cfe8c4" stroke="#3f8a3a" stroke-width="1.600" stroke-linejoin="round"/><path d="M10 3.500h3v6.500h6.500v3h-6.500v6.500h-3v-6.500h-6.500v-3h6.500z" fill="#e9f6e4" stroke="none"/></svg><div class="b " style="left:1656px;top:677px;width:39px;height:32.5px;background:linear-gradient(#fefefe,#f3f3f3 45%,#ebebeb 50%,#e6e6e6);border:1px solid #adadad;border-radius:3px;box-sizing:border-box;"></div><svg class="b" style="left:1664px;top:686px" width="23" height="13" viewBox="0 0 23 13"><rect x="1" y="1.500" width="21" height="8.500" rx="1.500" fill="#f8c8cc" stroke="#e0323c" stroke-width="1.800"/><rect x="4.500" y="4.500" width="14" height="2.500" fill="#fbe9ea"/></svg><div class="b " style="left:1704px;top:678px;width:136px;height:30px;background:linear-gradient(#fefefe,#f3f3f3 45%,#ebebeb 50%,#e6e6e6);border:1px solid #adadad;border-radius:3px;box-sizing:border-box;"></div><span class="t" style="left:1738px;top:684px;font-size:17.5px;line-height:20px;color:#000;letter-spacing:-0.643px;">Delete All</span><div class="b " style="left:1849px;top:680.5px;width:31px;height:25px;background:linear-gradient(#fefefe,#f3f3f3 45%,#ebebeb 50%,#e6e6e6);border:1px solid #adadad;border-radius:3px;box-sizing:border-box;"></div><span class="t" style="left:1857px;top:684px;font-size:15px;line-height:17px;color:#000;letter-spacing:-0.501px;">...</span><svg class="b" style="left:1867px;top:694.5px" width="9" height="5"><path d="M0 0H9L4.5 5Z" fill="#404040"/></svg><span class="t" style="left:1462px;top:724px;font-size:17.5px;line-height:20px;color:#000;font-weight:bold;letter-spacing:-0.306px;">Layer Rendering</span><div class="b " style="left:1461px;top:747.5px;width:422px;height:230px;background:#f0f0f0;border:1px solid #dadada;box-sizing:border-box;"></div><span class="t" style="left:1475.7px;top:764px;font-size:17.5px;line-height:20px;color:#000;letter-spacing:-0.804px;">Blending mode</span><div class="b " style="left:1591px;top:760px;width:276px;height:27px;background:linear-gradient(#fefefe,#f1f1f1 50%,#ebebeb);border:1px solid #adadad;border-radius:3px;box-sizing:border-box;"></div><span class="t" style="left:1595.7px;top:764px;font-size:17.5px;line-height:20px;color:#000;letter-spacing:-0.683px;">Normal</span><svg class="b" style="left:1844px;top:769.75px" width="12" height="6.5"><path d="M0 0H12L6 6.5Z" fill="#505050"/></svg><span class="t" style="left:1476px;top:801px;font-size:17.5px;line-height:20px;color:#000;letter-spacing:-0.968px;">Brightness</span><div class="b " style="left:1592px;top:806px;width:164px;height:8px;background:linear-gradient(#d6d6d6,#e6e6e6);border:1px solid #c2c2c2;border-radius:4px;box-sizing:border-box;"></div><div class="b " style="left:1592px;top:806px;width:78px;height:8px;background:linear-gradient(#2a8ae6,#1374d4);border:1px solid #1669c0;border-radius:4px;box-sizing:border-box;"></div><div class="b " style="left:1664px;top:800px;width:20px;height:20px;background:linear-gradient(#ffffff,#f3f3f3);border:1px solid #b0b0b0;border-radius:3.5px;box-sizing:border-box;"></div><div class="b " style="left:1766px;top:797.5px;width:101px;height:26px;background:#fff;border:1px solid #adadad;border-radius:3px;box-sizing:border-box;"></div><div class="b " style="left:1845px;top:798.5px;width:21px;height:24px;background:linear-gradient(#fdfdfd,#ececec);border-left:1px solid #c8c8c8;border-radius:0 3px 3px 0;box-sizing:border-box;"></div><svg class="b" style="left:1850.5px;top:802.25px" width="10" height="5.5"><path d="M0 5.5H10L5 0Z" fill="#505050"/></svg><svg class="b" style="left:1850.5px;top:813.25px" width="10" height="5.5"><path d="M0 0H10L5 5.5Z" fill="#505050"/></svg><span class="t" style="left:1771.5px;top:802px;font-size:17px;line-height:19px;color:#000;">0</span><span class="t" style="left:1476px;top:839px;font-size:17.5px;line-height:20px;color:#000;letter-spacing:-0.828px;">Saturation</span><div class="b " style="left:1592px;top:844px;width:164px;height:8px;background:linear-gradient(#d6d6d6,#e6e6e6);border:1px solid #c2c2c2;border-radius:4px;box-sizing:border-box;"></div><div class="b " style="left:1592px;top:844px;width:78px;height:8px;background:linear-gradient(#2a8ae6,#1374d4);border:1px solid #1669c0;border-radius:4px;box-sizing:border-box;"></div><div class="b " style="left:1664px;top:838px;width:20px;height:20px;background:linear-gradient(#ffffff,#f3f3f3);border:1px solid #b0b0b0;border-radius:3.5px;box-sizing:border-box;"></div><div class="b " style="left:1766px;top:835.5px;width:101px;height:26px;background:#fff;border:1px solid #adadad;border-radius:3px;box-sizing:border-box;"></div><div class="b " style="left:1845px;top:836.5px;width:21px;height:24px;background:linear-gradient(#fdfdfd,#ececec);border-left:1px solid #c8c8c8;border-radius:0 3px 3px 0;box-sizing:border-box;"></div><svg class="b" style="left:1850.5px;top:840.25px" width="10" height="5.5"><path d="M0 5.5H10L5 0Z" fill="#505050"/></svg><svg class="b" style="left:1850.5px;top:851.25px" width="10" height="5.5"><path d="M0 0H10L5 5.5Z" fill="#505050"/></svg><span class="t" style="left:1771.5px;top:840px;font-size:17px;line-height:19px;color:#000;">0</span><span class="t" style="left:1476px;top:877px;font-size:17.5px;line-height:20px;color:#000;letter-spacing:-0.892px;">Contrast</span><div class="b " style="left:1592px;top:882px;width:164px;height:8px;background:linear-gradient(#d6d6d6,#e6e6e6);border:1px solid #c2c2c2;border-radius:4px;box-sizing:border-box;"></div><div class="b " style="left:1592px;top:882px;width:78px;height:8px;background:linear-gradient(#2a8ae6,#1374d4);border:1px solid #1669c0;border-radius:4px;box-sizing:border-box;"></div><div class="b " style="left:1664px;top:876px;width:20px;height:20px;background:linear-gradient(#ffffff,#f3f3f3);border:1px solid #b0b0b0;border-radius:3.5px;box-sizing:border-box;"></div><div class="b " style="left:1766px;top:873.5px;width:101px;height:26px;background:#fff;border:1px solid #adadad;border-radius:3px;box-sizing:border-box;"></div><div class="b " style="left:1845px;top:874.5px;width:21px;height:24px;background:linear-gradient(#fdfdfd,#ececec);border-left:1px solid #c8c8c8;border-radius:0 3px 3px 0;box-sizing:border-box;"></div><svg class="b" style="left:1850.5px;top:878.25px" width="10" height="5.5"><path d="M0 5.5H10L5 0Z" fill="#505050"/></svg><svg class="b" style="left:1850.5px;top:889.25px" width="10" height="5.5"><path d="M0 0H10L5 5.5Z" fill="#505050"/></svg><span class="t" style="left:1771.5px;top:878px;font-size:17px;line-height:19px;color:#000;">0</span><span class="t" style="left:1476px;top:915px;font-size:17.5px;line-height:20px;color:#000;letter-spacing:-1.447px;">Gamma</span><div class="b " style="left:1592px;top:920px;width:164px;height:8px;background:linear-gradient(#d6d6d6,#e6e6e6);border:1px solid #c2c2c2;border-radius:4px;box-sizing:border-box;"></div><div class="b " style="left:1592px;top:920px;width:19px;height:8px;background:linear-gradient(#2a8ae6,#1374d4);border:1px solid #1669c0;border-radius:4px;box-sizing:border-box;"></div><div class="b " style="left:1605px;top:914px;width:20px;height:20px;background:linear-gradient(#ffffff,#f3f3f3);border:1px solid #b0b0b0;border-radius:3.5px;box-sizing:border-box;"></div><div class="b " style="left:1766px;top:911.5px;width:101px;height:26px;background:#fff;border:1px solid #adadad;border-radius:3px;box-sizing:border-box;"></div><div class="b " style="left:1845px;top:912.5px;width:21px;height:24px;background:linear-gradient(#fdfdfd,#ececec);border-left:1px solid #c8c8c8;border-radius:0 3px 3px 0;box-sizing:border-box;"></div><svg class="b" style="left:1850.5px;top:916.25px" width="10" height="5.5"><path d="M0 5.5H10L5 0Z" fill="#505050"/></svg><svg class="b" style="left:1850.5px;top:927.25px" width="10" height="5.5"><path d="M0 0H10L5 5.5Z" fill="#505050"/></svg><span class="t" style="left:1771.5px;top:916px;font-size:17px;line-height:19px;color:#000;">1,00</span><span class="t" style="left:1476px;top:951px;font-size:17.5px;line-height:20px;color:#000;letter-spacing:-1.197px;">Grayscale</span><div class="b " style="left:1591px;top:948px;width:276px;height:27px;background:linear-gradient(#fefefe,#f1f1f1 50%,#ebebeb);border:1px solid #adadad;border-radius:3px;box-sizing:border-box;"></div><span class="t" style="left:1595.7px;top:952px;font-size:17.5px;line-height:20px;color:#000;">Off</span><svg class="b" style="left:1844px;top:957.75px" width="12" height="6.5"><path d="M0 0H12L6 6.5Z" fill="#505050"/></svg></div></div>
<div class="b " style="left:1896px;top:258px;width:21px;height:706.5px;background:linear-gradient(90deg,#fdfdfd,#f2f2f2);border-left:1px solid #cfcfcf;box-sizing:border-box;"></div>
<div class="b " style="left:1897px;top:258px;width:20px;height:20.5px;background:#fcfcfc;border-bottom:1px solid #cfcfcf;box-sizing:border-box;"></div>
<svg class="b" style="left:1901.5px;top:265px" width="11" height="6"><path d="M0 6H11L5.5 0Z" fill="#606060"/></svg>
<div class="b " style="left:1897px;top:720px;width:20px;height:223px;background:#dcdcdc;"></div>
<div class="b " style="left:1897px;top:943px;width:20px;height:21.5px;background:#fafafa;border-top:1px solid #cfcfcf;box-sizing:border-box;"></div>
<svg class="b" style="left:1901.5px;top:950px" width="11" height="6"><path d="M0 0H11L5.5 6Z" fill="#606060"/></svg>
<div class="b " style="left:1447.5px;top:973.5px;width:31px;height:30px;background:linear-gradient(#fefefe,#f3f3f3 45%,#ebebeb 50%,#e6e6e6);border:1px solid #adadad;border-radius:3px;box-sizing:border-box;"></div>
<svg class="b" style="left:1453px;top:978px" width="20" height="21" viewBox="0 0 20 21"><path d="M9 2 L1.500 8 L9 14 V10.500 C13 10 15 12 13.500 15.500 C12.800 17.200 11 17.800 8 17.500 V19.800 C14 20.500 18 18 18 13 C18 8 14 5.500 9 5.800 Z" fill="#f08c3c" stroke="#d86a18" stroke-width="0.8"/></svg>
<div class="b " style="left:1485px;top:973.5px;width:31.5px;height:30px;background:linear-gradient(#fefefe,#f3f3f3 45%,#ebebeb 50%,#e6e6e6);border:1px solid #adadad;border-radius:3px;box-sizing:border-box;"></div>
<svg class="b" style="left:1491px;top:978px" width="20" height="21" viewBox="0 0 20 21"><path d="M11 2 L18.500 8 L11 14 V10.500 C7 10 5 12 6.500 15.500 C7.200 17.200 9 17.800 12 17.500 V19.800 C6 20.500 2 18 2 13 C2 8 6 5.500 11 5.800 Z" fill="#8fce8a" stroke="#5aa856" stroke-width="0.8"/></svg>
<div class="b " style="left:1715px;top:978.3px;width:20.5px;height:20.5px;background:#fff;border:1px solid #b4b4b4;box-sizing:border-box;"></div><svg class="b" style="left:1715px;top:978.3px" width="20.5" height="20.5" viewBox="0 0 21 21"><path d="M4 10.300 L8.700 16.600 L17 4" fill="none" stroke="#000" stroke-width="2.700" stroke-linejoin="miter"/></svg>
<span class="t" style="left:1744px;top:979px;font-size:17.5px;line-height:20px;color:#000;letter-spacing:-0.890px;">Live update</span>
<div class="b " style="left:1837px;top:973.5px;width:79.5px;height:29.5px;background:linear-gradient(#fefefe,#f3f3f3 45%,#ebebeb 50%,#e6e6e6);border:1px solid #adadad;border-radius:3px;box-sizing:border-box;"></div>
<span class="t" style="left:1856px;top:979px;font-size:17.5px;line-height:20px;color:#000;letter-spacing:-0.455px;">Apply</span>
<div class="b " style="left:1400px;top:1009px;width:520px;height:1px;background:#c8c8c8;"></div>
<div class="b " style="left:1530px;top:1009.5px;width:173.5px;height:30.5px;background:#e1e1e1;border:1px solid #c6c6c6;border-top:none;border-radius:0 0 3px 3px;box-sizing:border-box;"></div>
<div class="b " style="left:1403px;top:1009px;width:127.5px;height:33.5px;background:#fbfbfb;border:1px solid #c0c0c0;border-top:1px solid #f6f6f6;border-radius:0 0 3px 3px;box-sizing:border-box;"></div>
<span class="t" style="left:1421px;top:1016px;font-size:17.5px;line-height:20px;color:#000;letter-spacing:-0.782px;">Layer Styling</span>
<span class="t" style="left:1548px;top:1015px;font-size:17.5px;line-height:20px;color:#000;letter-spacing:-0.746px;">Processing Toolbox</span>
<div class="b " style="left:0px;top:1044px;width:1920px;height:34px;background:#f0f0f0;"></div>
<div class="b " style="left:0px;top:1077.5px;width:1920px;height:2.5px;background:#1f4d2a;"></div>
<div class="b " style="left:5px;top:1047.5px;width:290px;height:29px;background:#fff;border:1px solid #b4b4b4;border-radius:3px;box-sizing:border-box;"></div>
<svg class="b" style="left:15px;top:1052px" width="21" height="21" viewBox="0 0 21 21"><circle cx="8.500" cy="8.500" r="6.300" fill="none" stroke="#8a8a8a" stroke-width="1.800"/><path d="M13 13.500L19 19.500" stroke="#8a8a8a" stroke-width="2.200" stroke-linecap="round"/></svg>
<span class="t" style="left:43px;top:1052px;font-size:17.5px;line-height:20px;color:#8c8c8c;letter-spacing:-0.504px;">Type to locate (Ctrl+K)</span>
<span class="t" style="left:812.3px;top:1053px;font-size:17.5px;line-height:20px;color:#000;letter-spacing:-0.911px;">Coordinate</span>
<div class="b " style="left:892.5px;top:1048px;width:164px;height:28px;background:#fff;border:1px solid #b4b4b4;border-radius:3px;box-sizing:border-box;"></div>
<span class="t" style="left:899px;top:1053px;font-size:17.5px;line-height:20px;color:#000;letter-spacing:-0.604px;">288327.3,5675936.5</span>
<svg class="b" style="left:1059px;top:1049px" width="28" height="28" viewBox="0 0 28 28"><ellipse cx="11" cy="12.500" rx="7.300" ry="10" fill="#ececec" stroke="#1a1a1a" stroke-width="2.600" transform="rotate(-27 11 12.500)"/><path d="M5.500 6.500l9 11" stroke="#1a1a1a" stroke-width="1.800"/><path d="M10.500 3.500l3 6.500" stroke="#1a1a1a" stroke-width="1.400"/><circle cx="15" cy="20" r="3.400" fill="#f8f8f8" stroke="#1a1a1a" stroke-width="1.800"/><circle cx="15" cy="20" r="1" fill="#1a1a1a"/><path d="M19.500 6l1.200-1.200M22 3.500l1.200-1.200M17.500 4l.6-1.500" stroke="#1a1a1a" stroke-width="1.400"/></svg>
<span class="t" style="left:1098px;top:1053px;font-size:17.5px;line-height:20px;color:#000;letter-spacing:-1.755px;">Scale</span>
<div class="b " style="left:1136.5px;top:1048px;width:114px;height:28px;background:#fff;border:1px solid #b4b4b4;border-radius:3px;box-sizing:border-box;"></div>
<span class="t" style="left:1142px;top:1053px;font-size:17.5px;line-height:20px;color:#000;letter-spacing:-0.754px;">1:4661</span>
<svg class="b" style="left:1228.3px;top:1059.5px" width="11" height="6"><path d="M0 0H11L5.5 6Z" fill="#505050"/></svg>
<svg class="b" style="left:1262px;top:1050px" width="22" height="25" viewBox="0 0 22 25"><path d="M5.500 11V7.500a5.500 5.500 0 0 1 11 0V11" fill="none" stroke="#8a8a8a" stroke-width="2.200"/><rect x="2" y="10.500" width="18" height="12.500" rx="1.500" fill="#6a6a6a"/></svg>
<span class="t" style="left:1292px;top:1053px;font-size:17.5px;line-height:20px;color:#000;letter-spacing:-0.808px;">Magnifier</span>
<div class="b " style="left:1360.5px;top:1048px;width:108px;height:28px;background:#fff;border:1px solid #b4b4b4;border-radius:3px;box-sizing:border-box;"></div><div class="b " style="left:1447.5px;top:1049px;width:20px;height:26px;background:linear-gradient(#fdfdfd,#ececec);border-left:1px solid #c8c8c8;border-radius:0 3px 3px 0;box-sizing:border-box;"></div><svg class="b" style="left:1452.5px;top:1053.75px" width="10" height="5.5"><path d="M0 5.5H10L5 0Z" fill="#505050"/></svg><svg class="b" style="left:1452.5px;top:1064.75px" width="10" height="5.5"><path d="M0 0H10L5 5.5Z" fill="#505050"/></svg><span class="t" style="left:1365px;top:1053px;font-size:17.5px;line-height:20px;color:#000;letter-spacing:-0.440px;">100%</span>
<span class="t" style="left:1477.8px;top:1053px;font-size:17.5px;line-height:20px;color:#000;letter-spacing:-0.835px;">Rotation</span>
<div class="b " style="left:1546px;top:1048.5px;width:101px;height:27.5px;background:#fff;border:1px solid #b4b4b4;border-radius:3px;box-sizing:border-box;"></div><div class="b " style="left:1626px;top:1049.5px;width:20px;height:25.5px;background:linear-gradient(#fdfdfd,#ececec);border-left:1px solid #c8c8c8;border-radius:0 3px 3px 0;box-sizing:border-box;"></div><svg class="b" style="left:1631px;top:1054px" width="10" height="5.5"><path d="M0 5.5H10L5 0Z" fill="#505050"/></svg><svg class="b" style="left:1631px;top:1065px" width="10" height="5.5"><path d="M0 0H10L5 5.5Z" fill="#505050"/></svg><span class="t" style="left:1551px;top:1053px;font-size:17.5px;line-height:20px;color:#000;letter-spacing:-0.038px;">0,0 °</span>
<div class="b " style="left:1652.8px;top:1052.2px;width:20.5px;height:20.5px;background:#fff;border:1px solid #b4b4b4;box-sizing:border-box;"></div><svg class="b" style="left:1652.8px;top:1052.2px" width="20.5" height="20.5" viewBox="0 0 21 21"><path d="M4 10.300 L8.700 16.600 L17 4" fill="none" stroke="#000" stroke-width="2.700" stroke-linejoin="miter"/></svg>
<span class="t" style="left:1682px;top:1053px;font-size:17.5px;line-height:20px;color:#000;letter-spacing:-1.283px;">Render</span>
<svg class="b" style="left:1746px;top:1050px" width="26" height="25" viewBox="0 0 26 25"><path d="M13 1.500 L2 9 L6.500 22 H19.500 L24 9 Z" fill="none" stroke="#6a6a6a" stroke-width="1.200"/><ellipse cx="13" cy="12.500" rx="9.500" ry="9.500" fill="none" stroke="#6a6a6a" stroke-width="1.200"/><ellipse cx="13" cy="12.500" rx="4.500" ry="9.500" fill="none" stroke="#6a6a6a" stroke-width="1.100"/><path d="M3.500 12.500h19M5 7.500h16M5 17.500h16M13 3v19" stroke="#6a6a6a" stroke-width="1.100"/></svg>
<span class="t" style="left:1773px;top:1053px;font-size:17.5px;line-height:20px;color:#000;letter-spacing:-1.365px;">EPSG:32632</span>
<svg class="b" style="left:1888px;top:1051px" width="27" height="25" viewBox="0 0 27 25"><path d="M13 1C6 1 1 5 1 10.500C1 16 6 20 13 20c1.500 0 3-.2 4.300-.6L23 23.500l-1.500-6C24 15.800 25.500 13.300 25.500 10.500 25.500 5 20 1 13 1z" fill="#5f5f5f"/><circle cx="7.500" cy="10.500" r="1.900" fill="#fff"/><circle cx="13.200" cy="10.500" r="1.900" fill="#fff"/><circle cx="18.900" cy="10.500" r="1.900" fill="#fff"/></svg>
<svg class="b" style="left:10px;top:223px;" width="17" height="17" viewBox="0 0 24 24"><path d="M2 14l10-9 7 5-10 9z" fill="#e83a4a"/><path d="M2 10l10-7 7 4-10 8z" fill="#4a8ad8"/><path d="M3 6.500l9-5 6 3-9 6z" fill="#f8d838"/><path d="M13 13l8.500-10" stroke="#d8902a" stroke-width="2.600" stroke-linecap="round"/><path d="M8.500 14.500l5-5.500 5 4.500-5 6z" fill="#d8a868" stroke="#a87838" stroke-width=".8"/></svg>
<svg class="b" style="left:34.5px;top:223px;" width="17" height="17" viewBox="0 0 24 24"><path d="M2 9v13h13" fill="none" stroke="#555" stroke-width="1.200"/><rect x="5" y="6" width="13" height="13" fill="#f2f2f2" stroke="#555" stroke-width="1.200"/><path d="M10 12V4a2.500 2.500 0 0 1 5 0v10a1.500 1.500 0 0 1-3 0V6" fill="none" stroke="#3f6ea8" stroke-width="1.300"/><circle cx="18.500" cy="19" r="4.500" fill="#4f9a55"/><path d="M18.500 16.500v5M16 19h5" stroke="#fff" stroke-width="1.500"/></svg>
<svg class="b" style="left:60.5px;top:223px;" width="17" height="17" viewBox="0 0 24 24"><path d="M1 11c5-7 14-7 19 0-5 6-14 6-19 0z" fill="#f6f6f6" stroke="#666" stroke-width="1.100"/><path d="M2 8c5-5 12-5 17 0" fill="none" stroke="#777" stroke-width="1"/><circle cx="10" cy="11" r="4.200" fill="#4a78b8"/><circle cx="10" cy="11" r="2" fill="#111"/><circle cx="8.800" cy="9.800" r=".9" fill="#fff"/><path d="M11 15h12l-6 6z" fill="#444"/></svg>
<svg class="b" style="left:84.5px;top:223px;" width="17" height="17" viewBox="0 0 24 24"><path d="M1.500 2.500h21v2.500l-8 8.500v9h-5v-9l-8-8.500z" fill="#5b8ecb" stroke="#3f6ea8" stroke-width=".8"/><rect x="2" y="2" width="20" height="3" fill="#f8dc3a"/></svg>
<svg class="b" style="left:110.5px;top:223px;" width="17" height="17" viewBox="0 0 24 24"><text x="2" y="14" style="font-size:17px;fill:#cfcfcf">ε</text><path d="M12 13h10l-3.500 4v5h-3v-5z" fill="#e4e4e4"/></svg>
<svg class="b" style="left:153.5px;top:223px;" width="17" height="17" viewBox="0 0 24 24"><path d="M2 2.500h10M4 2.500v17" stroke="#8a8a8a" stroke-width="1.200" fill="none"/><rect x="4.500" y="6" width="5" height="5" fill="#fff" stroke="#f08c1c" stroke-width="1.600"/><rect x="4.500" y="15" width="5" height="5" fill="#fff" stroke="#f08c1c" stroke-width="1.600"/><path d="M13.500 1.500h5v11h4l-6.500 9-6.500-9h4z" fill="#4d7bb5" stroke="#2f5a8f" stroke-width=".7"/></svg>
<svg class="b" style="left:178.5px;top:223px;" width="17" height="17" viewBox="0 0 24 24"><path d="M2 4.500h8M4 4.500v15" stroke="#8a8a8a" stroke-width="1.200" fill="none"/><rect x="4.500" y="8" width="5" height="5" fill="#fff" stroke="#f08c1c" stroke-width="1.600"/><rect x="4.500" y="16" width="5" height="5" fill="#fff" stroke="#f08c1c" stroke-width="1.600"/><path d="M13.500 21.500h5v-11h4l-6.500-9-6.500 9h4z" fill="#4d7bb5" stroke="#2f5a8f" stroke-width=".7"/></svg>
<svg class="b" style="left:202.5px;top:223px;" width="17" height="17" viewBox="0 0 24 24"><rect x="2" y="2" width="16" height="16" fill="#fafafa" stroke="#777" stroke-width="1.300"/><rect x="13.500" y="15" width="9" height="6.500" rx="1.500" fill="#f03a4a"/><path d="M15.500 18.200h5" stroke="#fff" stroke-width="1.600"/></svg>
<svg class="b" style="left:133.5px;top:228.5px" width="11" height="6"><path d="M0 0H11L5.5 6Z" fill="#a8a8a8"/></svg>
<svg class="b" style="left:1412px;top:264.5px;" width="24" height="24" viewBox="0 0 24 24"><path d="M1 13l9-8 8 6-9 8z" fill="#c8506a"/><path d="M2 9.500l9-7 7 5-9 7z" fill="#5a9ad8"/><path d="M3 6l9-5 6 4-9 6z" fill="#9cc86a"/><path d="M14 12l8-10" stroke="#7a8050" stroke-width="2.400" stroke-linecap="round"/><path d="M8 14l5-5.500 5.500 4.500-5 6.500z" fill="#a8a890" stroke="#787860" stroke-width=".8"/></svg>
<svg class="b" style="left:1409.5px;top:296px;" width="24" height="24" viewBox="0 0 24 24"><path d="M2 1.500h3v14H2z" fill="#e8e8e8" stroke="#c0c0c0" stroke-width=".6"/><rect x="4" y="2" width="19" height="13" fill="#dfe8f4"/><path d="M4 2h19v13H4z" fill="#6a8ec0" opacity=".55"/><path d="M7 6c2-2 5-1 6 0s4-1 6 1-1 4-3 3-3 2-5 1-3-2-4-5z" fill="#3a5f9a" opacity=".7"/><path d="M2 15.500h21" stroke="#f4f4f4" stroke-width="1.500"/><path d="M2 18h21" stroke="#222" stroke-width="1" stroke-dasharray="1.500 1"/><rect x="2" y="19.500" width="21" height="1.800" fill="#f4f4f4"/><rect x="3.500" y="17" width="2" height="2.500" fill="#2a5aa8"/></svg>
<svg class="b" style="left:1409.5px;top:327px;" width="24" height="24" viewBox="0 0 24 24"><path d="M2 4h3v13H2z" fill="#e8e8e8" stroke="#c0c0c0" stroke-width=".6"/><rect x="4" y="4.500" width="19" height="13" fill="#f0f0f0" stroke="#d0d0d0" stroke-width=".7"/><path d="M6.500 14l3-6 5 5 4-3.500 3 4" fill="none" stroke="#3a5f9a" stroke-width="1.100"/><path d="M6 6v9.500h15" stroke="#888" stroke-width=".8" fill="none"/></svg>
<svg class="b" style="left:1409.5px;top:358px;" width="24" height="24" viewBox="0 0 24 24"><path d="M5 12V7h14v5M12 4v13" stroke="#e8a820" stroke-width="3" fill="none"/><rect x="7" y="0.500" width="10" height="6.500" fill="#e85050" stroke="#c83838" stroke-width=".7"/><rect x="1" y="13" width="9.500" height="7" fill="#f8dc40" stroke="#d8b820" stroke-width=".7"/><rect x="13.500" y="13" width="9.500" height="7" fill="#8ab8e8" stroke="#5a90c8" stroke-width=".7"/></svg>
<svg class="b" style="left:1409.5px;top:390px;" width="24" height="24" viewBox="0 0 24 24"><path d="M9 1l7.500 5-7.500 5V8c-3.500 0-5 2-4 5-3.500-2-4-9 4-9.500z" fill="#7cc880" stroke="#4fa858" stroke-width=".7"/><path d="M15 11.500L8 16.500l7 5v-3c3 0 4.500-1.500 3.500-4.500 3.500 2 3.500 8-3.500 8.500z" fill="#f08c3c" stroke="#d86a18" stroke-width=".7" transform="translate(0 -1)"/></svg>
<div class="b " style="left:251.9px;top:611px;width:3px;height:18px;background:radial-gradient(circle at 1.5px 1.5px,#a8a8a8 0.8px,transparent 1.2px) 0 0/3px 3px;"></div>
<div class="b " style="left:1397.9px;top:611px;width:3px;height:18px;background:radial-gradient(circle at 1.5px 1.5px,#a8a8a8 0.8px,transparent 1.2px) 0 0/3px 3px;"></div>
</body></html>
